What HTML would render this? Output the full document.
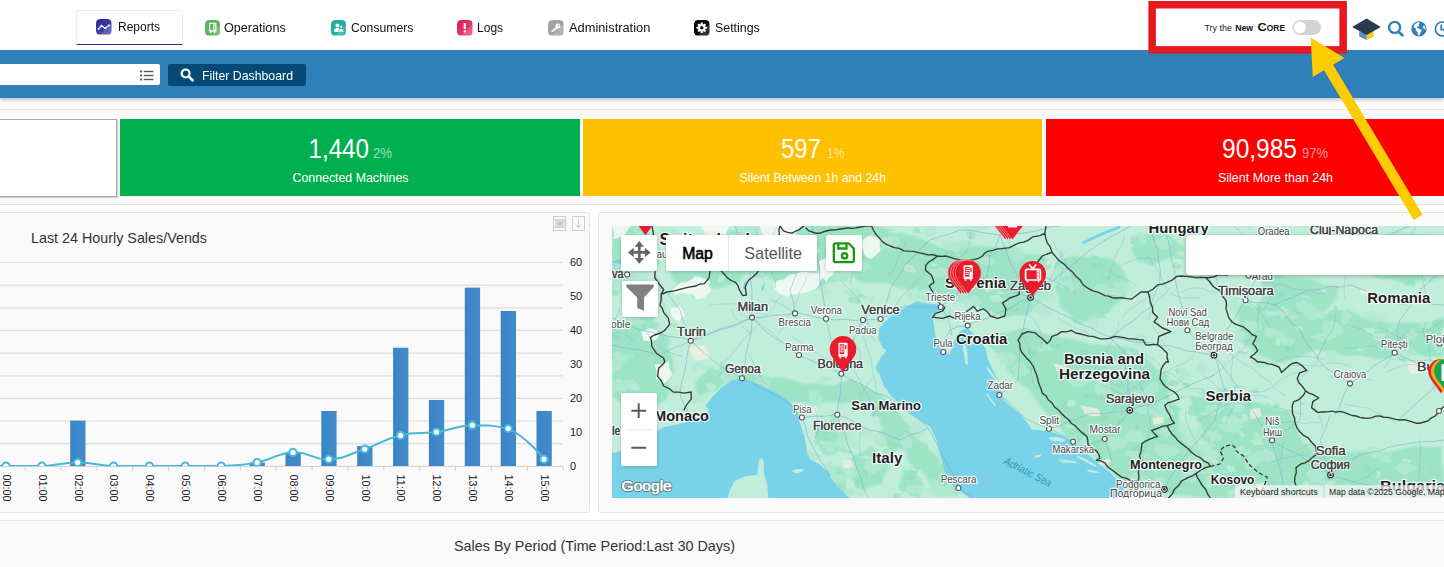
<!DOCTYPE html>
<html lang="en">
<head>
<meta charset="utf-8">
<title>Dashboard</title>
<style>
*{box-sizing:border-box;margin:0;padding:0}
html,body{width:1444px;height:567px;overflow:hidden;background:#fff;font-family:"Liberation Sans",sans-serif;color:#111}
.abs{position:absolute}
#nav{position:absolute;left:0;top:0;width:1444px;height:50px;background:#fff}
.tab{position:absolute;top:10px;height:35px}
.tab.active{left:76px;width:107px;border:1px solid #e6edf5;border-bottom:1px solid #2e2d8e;border-radius:2px 2px 0 0}
.ni{position:absolute;top:19px;width:15.500px;height:15.500px;border-radius:4px}
.nt{position:absolute;top:18px;font-size:13px;line-height:18px;white-space:nowrap;color:#111;transform-origin:0 50%}
#fbar{position:absolute;left:0;top:50px;width:1444px;height:48px;background:#2f80b8;box-shadow:0 2px 4px rgba(0,0,0,.25)}
#finput{position:absolute;left:-20px;top:14px;width:180px;height:21px;background:#fff;border-radius:2px}
#fbtn{position:absolute;left:168px;top:14px;width:138px;height:22px;background:#054a76;border-radius:2px;color:#fff}
#fbtn span{position:absolute;left:34px;top:2.500px;font-size:13px;line-height:18px;white-space:nowrap;transform:scaleX(.947);transform-origin:0 50%}
.panel{position:absolute;background:#fafafa;border:1px solid #e4e4e4;border-radius:3px}
.tile{position:absolute;top:119px;height:77px;color:#fff;text-align:center}
.tile .big{position:absolute;left:0;right:0;top:15px;font-size:26px;line-height:30px;white-space:nowrap}
.tile .big small{font-size:13px;opacity:.6;margin-left:4px}
.tile .lbl{position:absolute;left:0;right:0;top:50px;font-size:13px;line-height:16px;white-space:nowrap}
.mc{background:#fff;border-radius:2px;box-shadow:0 1px 4px -1px rgba(0,0,0,.3)}
</style>
</head>
<body>
<div id="nav">
  <div class="tab active"></div>
  <!-- nav icons + labels inserted below -->
  <svg class="ni" style="left:96px" viewBox="0 0 16 16"><defs><linearGradient id="gr" x1="0" y1="0" x2="1" y2="1"><stop offset="0" stop-color="#2c2a92"/><stop offset="1" stop-color="#4f4db0"/></linearGradient></defs><rect width="16" height="16" rx="4" fill="url(#gr)"/><path d="M16 4.500V12a4 4 0 0 1-4 4H4.500Z" fill="#fff" fill-opacity=".16"/><path d="M2.6 10.2 L5.6 7 L9.4 9.6 L13.4 6.6" fill="none" stroke="#fff" stroke-width="1.2" stroke-linecap="round" stroke-linejoin="round"/><circle cx="2.6" cy="10.2" r="1" fill="#fff"/><circle cx="5.6" cy="7" r="1" fill="#fff"/><circle cx="9.4" cy="9.6" r="1" fill="#fff"/><circle cx="13.4" cy="6.6" r="1" fill="#fff"/></svg>
  <span class="nt" style="left:117.8px;transform:scaleX(0.9225)">Reports</span>
  <svg class="ni" style="left:204.6px;top:20px" viewBox="0 0 16 16"><rect width="16" height="16" rx="4" fill="#5fb35f"/><path d="M16 4.500V12a4 4 0 0 1-4 4H4.500Z" fill="#fff" fill-opacity=".16"/><path d="M4.2 2.8h7.6v9.4h-1v1.2h-1.4v-1.2h-2.8v1.2H5.2v-1.2h-1z" fill="#fff"/><rect x="5.4" y="4" width="3.2" height="6.6" fill="#5fb35f"/><rect x="9.6" y="4.4" width="1.1" height="1.2" fill="#5fb35f"/><rect x="9.6" y="6.4" width="1.1" height="3" fill="#5fb35f"/></svg>
  <span class="nt" style="left:224px;top:18.800px;transform:scaleX(0.9703)">Operations</span>
  <svg class="ni" style="left:330.6px;top:20px" viewBox="0 0 16 16"><rect width="16" height="16" rx="4" fill="#27aea4"/><path d="M16 4.500V12a4 4 0 0 1-4 4H4.500Z" fill="#fff" fill-opacity=".16"/><circle cx="6.6" cy="5.6" r="2" fill="#fff"/><path d="M3.2 12.4c0-3 1.4-4.4 3.4-4.4s3.4 1.4 3.4 4.4z" fill="#fff"/><circle cx="10.6" cy="7.2" r="1.5" fill="#fff" stroke="#27aea4" stroke-width=".6"/><path d="M8 12.6c0-2.4 1-3.6 2.6-3.6s2.6 1.200 2.6 3.600z" fill="#fff" stroke="#27aea4" stroke-width=".6"/></svg>
  <span class="nt" style="left:350.5px;top:18.800px;transform:scaleX(0.9388)">Consumers</span>
  <svg class="ni" style="left:457px;top:20px" viewBox="0 0 16 16"><defs><linearGradient id="gl" x1="0" y1="0" x2="1" y2="1"><stop offset="0" stop-color="#dc1e58"/><stop offset="1" stop-color="#e8486e"/></linearGradient></defs><rect width="16" height="16" rx="4" fill="url(#gl)"/><path d="M16 4.500V12a4 4 0 0 1-4 4H4.500Z" fill="#fff" fill-opacity=".16"/><rect x="6.9" y="3" width="2.2" height="6.4" rx=".6" fill="#fff"/><rect x="6.900" y="10.600" width="2.200" height="2.200" rx=".6" fill="#fff"/></svg>
  <span class="nt" style="left:477.4px;top:18.800px;transform:scaleX(0.9255)">Logs</span>
  <svg class="ni" style="left:548.2px;top:20px" viewBox="0 0 16 16"><rect width="16" height="16" rx="4" fill="#a3a3a6"/><path d="M16 4.500V12a4 4 0 0 1-4 4H4.500Z" fill="#fff" fill-opacity=".16"/><circle cx="10.2" cy="6.200" r="2.600" fill="#fff"/><path d="M8.6 7.200 L3.600 11 L3.600 12.400 L5.600 12.400 L5.600 11.400 L6.800 11.400 L6.800 10.300 L8 10.300 L9.800 8.600z" fill="#fff"/><circle cx="11" cy="5.500" r=".8" fill="#a3a3a6"/></svg>
  <span class="nt" style="left:568.9px;top:18.800px;transform:scaleX(0.9869)">Administration</span>
  <svg class="ni" style="left:694.3px;top:20px" viewBox="0 0 16 16"><rect width="16" height="16" rx="4" fill="#0b0b0b"/><path d="M16 4.500V12a4 4 0 0 1-4 4H4.500Z" fill="#fff" fill-opacity=".16"/><g transform="translate(8 8)" fill="#fff"><circle r="3.800"/><g id="tt"><rect x="-1.100" y="-5.400" width="2.200" height="10.800" rx=".5"/></g><use href="#tt" transform="rotate(45)"/><use href="#tt" transform="rotate(90)"/><use href="#tt" transform="rotate(135)"/><circle r="1.700" fill="#0b0b0b"/></g></svg>
  <span class="nt" style="left:715px;top:18.800px;transform:scaleX(0.9515)">Settings</span>
  <!--NAVEND-->
</div>
<div id="fbar">
  <div id="finput"><svg width="14" height="11" viewBox="0 0 14 11" style="position:absolute;left:160px;top:6px"><g fill="#555"><rect x="0" y=".6" width="2.200" height="1.800"/><rect x="0" y="4.600" width="2.200" height="1.800"/><rect x="0" y="8.600" width="2.200" height="1.800"/><rect x="3.800" y=".8" width="9.600" height="1.400"/><rect x="3.800" y="4.800" width="9.600" height="1.400"/><rect x="3.800" y="8.800" width="9.600" height="1.400"/></g></svg></div>
  <div id="fbtn"><svg width="15" height="14" viewBox="0 0 15 14" style="position:absolute;left:11.500px;top:3.500px"><circle cx="5.600" cy="5.400" r="3.900" fill="none" stroke="#fff" stroke-width="2.200"/><path d="M8.600 8.400l4 3.900" stroke="#fff" stroke-width="2.600" stroke-linecap="round"/></svg><span>Filter Dashboard</span></div>
</div>
<div class="panel" style="left:-10px;top:109px;width:1470px;height:96px"></div>
<div class="abs" style="left:-10px;top:119px;width:127px;height:78px;background:#fff;border:1px solid #a8a8a8;box-shadow:1px 1px 1px rgba(0,0,0,.15)"></div>
<div class="tile" style="left:120px;width:460px;background:#00b050"><svg width="460" height="77" style="position:absolute;left:0;top:0" font-family="Liberation Sans, sans-serif" fill="#fff"><text x="188.5" y="38.700" font-size="27" textLength="60.5" lengthAdjust="spacingAndGlyphs">1,440</text><text x="253" y="38.900" font-size="14" fill-opacity=".6" textLength="19" lengthAdjust="spacingAndGlyphs">2%</text><text x="172.5" y="63" font-size="13" textLength="116.0" lengthAdjust="spacingAndGlyphs">Connected Machines</text></svg></div>
<div class="tile" style="left:583px;width:459px;background:#ffc000"><svg width="459" height="77" style="position:absolute;left:0;top:0" font-family="Liberation Sans, sans-serif" fill="#fff"><text x="198" y="38.700" font-size="27" textLength="40" lengthAdjust="spacingAndGlyphs">597</text><text x="244" y="38.900" font-size="14" fill-opacity=".6" textLength="17.5" lengthAdjust="spacingAndGlyphs">1%</text><text x="156.5" y="63" font-size="13" textLength="146.5" lengthAdjust="spacingAndGlyphs">Silent Between 1h and 24h</text></svg></div>
<div class="tile" style="left:1046px;width:458px;background:#ff0000"><svg width="458" height="77" style="position:absolute;left:0;top:0" font-family="Liberation Sans, sans-serif" fill="#fff"><text x="176" y="38.700" font-size="27" textLength="75" lengthAdjust="spacingAndGlyphs">90,985</text><text x="256" y="38.900" font-size="14" fill-opacity=".6" textLength="26" lengthAdjust="spacingAndGlyphs">97%</text><text x="172" y="63" font-size="13" textLength="115" lengthAdjust="spacingAndGlyphs">Silent More than 24h</text></svg></div>
<div class="panel" id="chartpanel" style="left:-10px;top:212px;width:600px;height:301px"></div>
<div class="panel" id="mappanel" style="left:598px;top:212px;width:860px;height:301px"></div>
<div class="panel" style="left:-10px;top:520px;width:1470px;height:60px"></div>
<div class="abs" style="left:454px;top:538px;font-size:14px;line-height:16px;color:#333;white-space:nowrap;font-size:14.400px;letter-spacing:0">Sales By Period (Time Period:Last 30 Days)</div>
<!--CHARTSTART-->
<svg id="chart" width="600" height="301" viewBox="-10 212 600 301" style="position:absolute;left:-10px;top:212px" font-family="Liberation Sans, sans-serif">
<defs><linearGradient id="bg" x1="0" y1="0" x2="1" y2="0"><stop offset="0" stop-color="#3b84c6"/><stop offset="1" stop-color="#428ccb"/></linearGradient><clipPath id="cc"><rect x="-10" y="250" width="600" height="216.200"/></clipPath></defs>
<text x="31" y="243" font-size="14.400" fill="#333" textLength="176" lengthAdjust="spacingAndGlyphs">Last 24 Hourly Sales/Vends</text>
<g fill="none" stroke="#cfcfcf" stroke-width="1"><rect x="553.500" y="216.500" width="12" height="14"/><path d="M553.500 219.500h12M553.500 227.500h12"/><rect x="555" y="219.500" width="11.500" height="8" rx="1.500" fill="#d9d9d9" stroke="none"/><circle cx="560" cy="223.500" r="1.800" fill="#c4c4c4" stroke="none"/><rect x="572.500" y="216.500" width="12" height="14"/><path d="M578.500 219.500v8M575.500 224.500l3 3l3-3" stroke="#b9cfe6"/></g>
<path d="M-10 262.5H562.500M-10 285.1H562.500M-10 307.8H562.500M-10 330.4H562.500M-10 353.1H562.500M-10 375.8H562.500M-10 398.4H562.500M-10 421.0H562.500M-10 443.7H562.500" stroke="#dcdcdc" stroke-width="1.200" fill="none"/>
<path d="M-10 466.300H562.500 M-10.7 466v4.500M25.1 466v4.500M61.0 466v4.500M96.9 466v4.500M132.7 466v4.500M168.6 466v4.500M204.5 466v4.500M240.4 466v4.500M276.2 466v4.500M312.1 466v4.500M348.0 466v4.500M383.8 466v4.500M419.7 466v4.500M455.6 466v4.500M491.4 466v4.500M527.3 466v4.500M563.2 466v4.500" stroke="#cfcfcf" stroke-width="1" fill="none"/>
<rect x="70.2" y="420.6" width="15.300" height="45.4" fill="url(#bg)"/>
<rect x="249.6" y="462.5" width="15.300" height="3.5" fill="url(#bg)"/>
<rect x="285.5" y="452.0" width="15.300" height="14.0" fill="url(#bg)"/>
<rect x="321.3" y="411.0" width="15.300" height="55.0" fill="url(#bg)"/>
<rect x="357.2" y="446.0" width="15.300" height="20.0" fill="url(#bg)"/>
<rect x="393.1" y="347.7" width="15.300" height="118.3" fill="url(#bg)"/>
<rect x="428.9" y="400.0" width="15.300" height="66.0" fill="url(#bg)"/>
<rect x="464.8" y="287.6" width="15.300" height="178.4" fill="url(#bg)"/>
<rect x="500.7" y="311.0" width="15.300" height="155.0" fill="url(#bg)"/>
<rect x="536.5" y="411.0" width="15.300" height="55.0" fill="url(#bg)"/>
<g clip-path="url(#cc)"><path d="M-29.9 466.0 C-29.9 466.0 -11.9 466.0 6.0 466.0 C23.9 466.0 24.0 466.0 41.9 466.0 C59.8 465.1 59.8 462.6 77.7 462.6 C95.7 462.6 95.6 465.1 113.6 466.0 C131.5 466.0 131.5 466.0 149.5 466.0 C167.4 466.0 167.4 466.0 185.3 466.0 C203.3 466.0 203.3 466.0 221.2 466.0 C239.2 465.1 239.5 465.9 257.1 462.6 C275.3 459.1 274.8 453.3 293.0 452.4 C310.7 451.6 311.1 460.0 328.8 459.2 C347.0 458.3 347.0 454.9 364.7 449.0 C382.9 443.0 382.1 439.8 400.6 435.4 C417.9 431.3 418.6 434.5 436.4 432.0 C454.5 429.4 454.3 426.1 472.3 425.2 C490.1 425.2 492.6 425.2 508.2 428.6 C528.5 438.2 544.0 459.2 544.0 459.2" fill="none" stroke="#47b8db" stroke-width="2"/>
<circle cx="6.0" cy="466.0" r="3.600" fill="#fff" stroke="#47b8db" stroke-width="2"/>
<circle cx="41.9" cy="466.0" r="3.600" fill="#fff" stroke="#47b8db" stroke-width="2"/>
<circle cx="77.7" cy="462.6" r="3.600" fill="#fff" stroke="#47b8db" stroke-width="2"/>
<circle cx="113.6" cy="466.0" r="3.600" fill="#fff" stroke="#47b8db" stroke-width="2"/>
<circle cx="149.5" cy="466.0" r="3.600" fill="#fff" stroke="#47b8db" stroke-width="2"/>
<circle cx="185.3" cy="466.0" r="3.600" fill="#fff" stroke="#47b8db" stroke-width="2"/>
<circle cx="221.2" cy="466.0" r="3.600" fill="#fff" stroke="#47b8db" stroke-width="2"/>
<circle cx="257.1" cy="462.6" r="3.600" fill="#fff" stroke="#47b8db" stroke-width="2"/>
<circle cx="293.0" cy="452.4" r="3.600" fill="#fff" stroke="#47b8db" stroke-width="2"/>
<circle cx="328.8" cy="459.2" r="3.600" fill="#fff" stroke="#47b8db" stroke-width="2"/>
<circle cx="364.7" cy="449.0" r="3.600" fill="#fff" stroke="#47b8db" stroke-width="2"/>
<circle cx="400.6" cy="435.4" r="3.600" fill="#fff" stroke="#47b8db" stroke-width="2"/>
<circle cx="436.4" cy="432.0" r="3.600" fill="#fff" stroke="#47b8db" stroke-width="2"/>
<circle cx="472.3" cy="425.2" r="3.600" fill="#fff" stroke="#47b8db" stroke-width="2"/>
<circle cx="508.2" cy="428.6" r="3.600" fill="#fff" stroke="#47b8db" stroke-width="2"/>
<circle cx="544.0" cy="459.2" r="3.600" fill="#fff" stroke="#47b8db" stroke-width="2"/>
</g>
<text x="570" y="265.8" font-size="11" fill="#222">60</text>
<text x="570" y="299.8" font-size="11" fill="#222">50</text>
<text x="570" y="333.8" font-size="11" fill="#222">40</text>
<text x="570" y="367.8" font-size="11" fill="#222">30</text>
<text x="570" y="401.8" font-size="11" fill="#222">20</text>
<text x="570" y="435.8" font-size="11" fill="#222">10</text>
<text x="570" y="469.8" font-size="11" fill="#222">0</text>
<text transform="translate(2.8 474.500) rotate(90)" font-size="11" fill="#222" textLength="27" lengthAdjust="spacingAndGlyphs">00:00</text>
<text transform="translate(38.7 474.500) rotate(90)" font-size="11" fill="#222" textLength="27" lengthAdjust="spacingAndGlyphs">01:00</text>
<text transform="translate(74.5 474.500) rotate(90)" font-size="11" fill="#222" textLength="27" lengthAdjust="spacingAndGlyphs">02:00</text>
<text transform="translate(110.4 474.500) rotate(90)" font-size="11" fill="#222" textLength="27" lengthAdjust="spacingAndGlyphs">03:00</text>
<text transform="translate(146.3 474.500) rotate(90)" font-size="11" fill="#222" textLength="27" lengthAdjust="spacingAndGlyphs">04:00</text>
<text transform="translate(182.2 474.500) rotate(90)" font-size="11" fill="#222" textLength="27" lengthAdjust="spacingAndGlyphs">05:00</text>
<text transform="translate(218.0 474.500) rotate(90)" font-size="11" fill="#222" textLength="27" lengthAdjust="spacingAndGlyphs">06:00</text>
<text transform="translate(253.9 474.500) rotate(90)" font-size="11" fill="#222" textLength="27" lengthAdjust="spacingAndGlyphs">07:00</text>
<text transform="translate(289.8 474.500) rotate(90)" font-size="11" fill="#222" textLength="27" lengthAdjust="spacingAndGlyphs">08:00</text>
<text transform="translate(325.6 474.500) rotate(90)" font-size="11" fill="#222" textLength="27" lengthAdjust="spacingAndGlyphs">09:00</text>
<text transform="translate(361.5 474.500) rotate(90)" font-size="11" fill="#222" textLength="27" lengthAdjust="spacingAndGlyphs">10:00</text>
<text transform="translate(397.4 474.500) rotate(90)" font-size="11" fill="#222" textLength="27" lengthAdjust="spacingAndGlyphs">11:00</text>
<text transform="translate(433.2 474.500) rotate(90)" font-size="11" fill="#222" textLength="27" lengthAdjust="spacingAndGlyphs">12:00</text>
<text transform="translate(469.1 474.500) rotate(90)" font-size="11" fill="#222" textLength="27" lengthAdjust="spacingAndGlyphs">13:00</text>
<text transform="translate(505.0 474.500) rotate(90)" font-size="11" fill="#222" textLength="27" lengthAdjust="spacingAndGlyphs">14:00</text>
<text transform="translate(540.8 474.500) rotate(90)" font-size="11" fill="#222" textLength="27" lengthAdjust="spacingAndGlyphs">15:00</text>
</svg>
<!--CHARTEND-->
<!--MAPSTART-->
<svg id="map" width="832" height="272" viewBox="612 226 832 272" style="position:absolute;left:612px;top:226px;background:#c1eeda" font-family="Liberation Sans, sans-serif">
<defs><filter id="bl" x="-5%" y="-5%" width="110%" height="110%"><feGaussianBlur stdDeviation="1.300"/></filter><filter id="bl2"><feGaussianBlur stdDeviation=".7"/></filter></defs>
<path d="M611.7 226.4 L626.5 225.8 L635.1 226.6 L644.4 226.1 L650.3 233.8 L649.5 236.2 L652.4 245.4 L653.7 249.7 L652.8 265.7 L647.6 272.9 L638.4 274.5 L635.2 280.6 L627.1 287.6 L620.3 291.0 L617.4 295.6 L612.1 296.1 L612.0 273.2 L611.7 247.5Z M748.0 229.4 L789.1 227.4 L827.7 224.1 L869.8 223.0 L894.2 231.1 L915.9 236.7 L937.8 245.7 L958.1 243.2 L991.3 246.9 L1018.6 248.3 L1023.9 253.8 L1040.3 255.1 L1047.0 259.4 L1041.6 272.0 L1024.2 278.0 L1012.6 286.3 L998.2 291.0 L977.3 296.7 L955.6 302.5 L943.6 298.1 L932.0 292.7 L921.1 287.8 L914.9 289.6 L898.7 288.2 L886.6 282.9 L879.5 282.7 L862.8 283.2 L852.0 276.2 L844.4 280.5 L829.5 282.6 L816.6 290.0 L806.1 288.2 L795.5 285.2 L788.0 283.5 L775.8 282.3 L763.5 273.5 L758.9 274.3 L744.7 273.8 L738.5 282.8 L725.1 286.7 L720.3 288.2 L707.5 288.6 L695.2 298.3 L688.9 292.7 L681.4 289.7 L676.0 282.2 L671.2 277.5 L668.6 266.4 L670.0 263.0 L681.9 253.3 L695.5 247.0 L700.8 241.7 L717.3 234.5 L728.8 230.9Z M612.5 321.4 L622.6 322.8 L638.4 317.4 L647.9 313.0 L651.8 316.9 L658.6 330.6 L671.0 338.7 L668.2 347.9 L673.3 360.1 L674.1 373.5 L668.6 380.0 L669.3 392.0 L665.5 400.3 L656.3 405.6 L643.6 407.8 L637.8 412.9 L626.8 408.5 L622.2 403.2 L612.9 398.0 L612.6 374.6 L609.1 349.9Z M703.4 374.6 L708.9 367.9 L716.3 365.9 L721.6 364.3 L726.8 365.7 L734.1 366.7 L744.8 366.2 L751.4 370.7 L755.8 376.2 L758.3 372.6 L770.0 378.6 L780.6 376.4 L796.8 381.1 L803.3 384.0 L812.1 383.8 L820.9 383.5 L834.8 385.5 L844.9 380.5 L852.5 378.7 L860.5 385.0 L876.3 392.4 L886.4 398.1 L890.1 401.0 L898.0 410.1 L903.0 419.4 L912.5 428.3 L917.0 439.0 L928.3 444.7 L928.7 450.1 L940.9 458.5 L946.5 470.5 L948.7 481.4 L951.7 486.2 L959.7 494.7 L954.9 496.2 L942.9 494.9 L938.9 497.6 L934.6 492.4 L931.4 487.9 L926.3 475.9 L918.1 468.1 L908.3 462.5 L906.5 452.8 L897.7 446.3 L895.0 439.8 L888.8 433.8 L881.3 427.3 L878.8 415.8 L873.0 413.5 L860.8 407.7 L857.5 406.8 L849.2 400.5 L843.6 403.4 L835.1 402.4 L824.0 401.9 L814.9 404.9 L804.7 402.8 L792.0 402.8 L789.3 402.0 L778.2 399.4 L768.7 398.9 L767.8 393.0 L757.8 391.6 L756.3 391.8 L750.6 384.7 L747.5 383.0 L742.1 381.7 L732.9 386.0 L725.5 381.6 L722.1 385.5 L718.7 389.0 L713.7 391.3 L708.1 392.1 L698.1 398.5 L693.6 403.3 L691.0 405.2 L695.7 394.4 L695.4 382.2Z M937.0 263.3 L963.4 263.0 L999.4 260.7 L1027.3 258.5 L1034.8 270.2 L1042.9 276.5 L1053.1 289.5 L1041.5 301.1 L1035.0 308.5 L1028.2 315.2 L1015.6 315.7 L1007.0 317.3 L990.7 312.2 L982.0 308.1 L979.1 307.5 L969.1 299.6 L959.4 297.9 L956.8 290.7 L948.1 286.1 L940.2 277.9 L939.8 268.9Z M979.7 336.3 L993.4 335.1 L1008.9 331.7 L1025.1 327.6 L1042.4 333.1 L1056.7 336.8 L1073.1 338.9 L1090.1 344.1 L1112.3 345.3 L1133.0 347.8 L1144.5 354.8 L1155.3 368.3 L1167.9 374.5 L1167.7 390.3 L1170.9 402.3 L1179.3 407.8 L1178.7 423.5 L1182.7 430.6 L1190.5 444.4 L1201.7 450.0 L1210.5 461.6 L1219.4 465.9 L1231.7 480.4 L1241.3 484.5 L1245.8 498.6 L1207.4 498.1 L1166.8 493.8 L1127.8 493.6 L1123.2 487.3 L1115.7 475.2 L1105.3 465.9 L1098.3 461.8 L1087.4 446.0 L1069.9 442.3 L1061.2 429.5 L1048.7 415.9 L1038.5 404.1 L1029.5 389.7 L1020.5 383.9 L1007.4 369.7 L1001.6 357.9 L988.2 344.7Z M1188.3 395.5 L1202.4 397.1 L1212.6 393.7 L1223.6 386.7 L1235.0 391.2 L1249.1 397.1 L1255.6 401.7 L1270.5 406.5 L1282.5 409.7 L1294.6 418.8 L1297.1 429.5 L1301.4 438.5 L1304.9 447.7 L1308.1 460.1 L1311.5 468.9 L1321.6 480.4 L1320.8 488.4 L1325.7 489.9 L1327.6 497.3 L1299.8 496.0 L1276.1 497.8 L1247.2 498.6 L1241.4 483.9 L1231.2 479.2 L1221.1 467.3 L1211.9 454.4 L1206.5 442.2 L1198.0 436.2 L1196.2 422.0 L1195.2 410.8Z M1260.7 278.8 L1274.8 274.0 L1288.7 277.7 L1300.3 277.9 L1312.6 279.6 L1324.2 284.5 L1338.7 286.3 L1337.2 296.5 L1330.5 305.4 L1325.5 310.9 L1316.0 314.8 L1301.9 317.8 L1290.5 314.8 L1280.5 311.2 L1270.3 312.3 L1262.3 309.4 L1262.9 294.0 L1262.6 290.5Z M1231.3 303.7 L1245.3 304.6 L1260.6 306.8 L1269.0 315.4 L1281.9 314.1 L1295.2 318.5 L1304.1 315.5 L1319.6 316.0 L1332.1 311.2 L1349.7 309.8 L1362.5 317.4 L1376.1 318.5 L1390.4 323.4 L1409.8 322.2 L1429.4 323.2 L1445.6 316.4 L1441.3 334.3 L1446.0 345.9 L1443.0 356.9 L1433.0 357.0 L1420.0 355.6 L1408.9 350.6 L1390.0 358.0 L1379.3 359.2 L1357.8 355.5 L1344.1 356.1 L1331.1 351.9 L1315.2 349.8 L1298.6 357.8 L1288.4 361.3 L1273.7 364.1 L1261.1 355.5 L1253.2 351.3 L1237.1 338.6 L1240.2 328.6 L1238.0 312.4Z M1302.9 443.3 L1324.8 446.0 L1342.9 452.2 L1359.8 451.0 L1390.4 451.7 L1415.8 446.0 L1441.2 447.5 L1441.1 459.3 L1444.4 479.4 L1445.3 495.4 L1404.8 493.9 L1359.8 497.9 L1317.8 495.4 L1316.5 480.9 L1307.7 459.8Z M1054.7 262.1 L1072.0 256.0 L1091.7 257.2 L1110.4 257.9 L1118.0 264.0 L1125.0 272.7 L1129.3 282.9 L1125.9 297.9 L1113.4 305.7 L1106.6 317.2 L1095.3 319.3 L1082.4 322.5 L1075.0 324.2 L1069.5 314.8 L1059.2 306.5 L1058.3 293.6 L1052.3 283.7 L1056.0 272.6Z M818.2 426.1 L823.8 419.7 L828.6 422.3 L832.1 415.1 L841.6 424.8 L842.1 426.9 L847.6 431.7 L849.4 434.9 L844.7 445.2 L845.2 451.8 L837.6 450.6 L834.9 454.5 L825.0 455.3 L822.2 452.1 L819.2 445.7 L814.2 443.2 L815.4 438.5 L816.3 433.4Z M853.2 456.0 L857.5 454.1 L866.8 449.8 L871.5 445.6 L879.7 456.1 L883.1 455.0 L888.0 461.5 L886.9 472.9 L883.6 476.0 L882.3 486.0 L879.2 484.4 L866.6 488.0 L862.6 492.8 L854.1 482.3 L850.5 478.1 L846.2 476.5 L849.3 466.4 L847.2 460.2Z M877.7 431.8 L883.7 428.7 L892.2 426.5 L893.4 427.7 L901.2 428.9 L902.0 438.2 L904.9 438.1 L898.5 447.1 L900.4 447.2 L895.2 452.1 L889.1 453.4 L887.4 446.2 L878.6 445.8 L880.4 442.7 L882.1 436.1Z M827.7 462.6 L833.8 465.0 L842.6 468.4 L845.9 473.4 L845.1 476.9 L845.9 485.2 L846.6 492.2 L847.4 494.9 L837.1 493.7 L836.5 495.2 L830.5 493.5 L829.5 489.9 L824.5 483.6 L826.7 477.7 L830.2 468.8Z M902.3 468.0 L905.3 469.5 L907.6 471.0 L913.7 466.7 L915.4 472.3 L921.4 480.8 L924.0 486.3 L919.9 488.6 L920.1 496.9 L920.3 499.1 L909.3 495.2 L908.8 492.2 L902.4 491.7 L897.9 488.1 L902.8 475.3Z M1131.4 236.1 L1141.2 235.9 L1152.2 232.6 L1164.4 232.9 L1169.2 235.4 L1178.2 242.1 L1185.5 249.5 L1176.3 253.6 L1169.3 257.8 L1156.9 263.5 L1152.9 265.9 L1141.8 261.8 L1138.6 261.2 L1131.6 251.0 L1130.1 242.6Z M1354.6 234.6 L1375.5 235.1 L1389.9 234.7 L1409.0 234.0 L1418.6 234.4 L1431.1 236.1 L1443.3 244.7 L1447.3 256.8 L1445.1 267.1 L1440.7 276.7 L1430.6 280.8 L1416.7 280.9 L1407.2 285.6 L1395.9 280.5 L1377.9 277.8 L1369.6 272.4 L1361.9 260.6 L1356.6 250.5Z" fill="#9be4c6" fill-opacity=".95" filter="url(#bl)"/>
<path d="M648.2 259.5 L651.4 258.1 L657.9 259.7 L661.1 262.6 L657.9 265.3 L651.4 264.9Z M630.9 236.2 L634.5 232.3 L641.5 232.7 L645.0 234.8 L641.5 236.7 L634.5 235.2Z M944.4 251.2 L947.3 251.1 L953.0 251.4 L955.9 254.4 L953.0 258.1 L947.3 257.9Z M847.2 299.8 L850.8 296.8 L857.9 297.6 L861.5 301.0 L857.9 304.2 L850.8 302.6Z M861.7 256.4 L865.5 256.1 L873.0 257.4 L876.8 260.2 L873.0 260.6 L865.5 259.4Z M949.8 247.6 L952.7 247.2 L958.4 248.0 L961.3 248.8 L958.4 250.4 L952.7 249.8Z M918.0 288.9 L920.4 287.4 L925.1 288.7 L927.5 291.4 L925.1 294.4 L920.4 292.9Z M965.5 231.4 L968.2 231.4 L973.6 231.8 L976.3 233.7 L973.6 239.2 L968.2 238.6Z M1005.4 287.5 L1007.7 284.7 L1012.3 284.8 L1014.6 284.9 L1012.3 289.4 L1007.7 287.9Z M851.2 294.4 L855.2 293.3 L863.1 293.8 L867.1 298.2 L863.1 298.6 L855.2 297.1Z M983.2 254.0 L985.7 250.6 L990.8 252.4 L993.3 251.4 L990.8 254.4 L985.7 253.3Z M1001.4 228.5 L1002.9 226.4 L1005.8 228.0 L1007.2 232.2 L1005.8 233.1 L1002.9 231.8Z M929.4 295.3 L931.8 294.6 L936.7 295.1 L939.1 296.9 L936.7 297.9 L931.8 297.5Z M752.3 276.6 L755.7 273.4 L762.6 274.9 L766.0 276.2 L762.6 278.2 L755.7 277.8Z M1018.1 273.4 L1020.1 272.9 L1024.0 274.6 L1025.9 275.6 L1024.0 279.1 L1020.1 278.1Z M682.9 272.2 L684.9 268.8 L688.8 269.0 L690.8 270.0 L688.8 273.0 L684.9 271.7Z M772.4 270.7 L774.1 263.3 L777.4 263.3 L779.1 266.8 L777.4 270.8 L774.1 269.5Z M1019.6 264.3 L1021.3 260.6 L1024.7 261.2 L1026.3 264.4 L1024.7 266.3 L1021.3 265.0Z M752.4 261.0 L755.7 255.5 L762.5 255.9 L765.9 258.9 L762.5 262.5 L755.7 262.1Z M853.6 229.1 L856.5 225.4 L862.2 226.9 L865.1 226.5 L862.2 231.9 L856.5 231.7Z M853.4 259.8 L855.8 256.4 L860.7 256.6 L863.1 260.3 L860.7 260.7 L855.8 259.7Z M967.5 241.8 L969.1 241.6 L972.2 242.1 L973.8 244.4 L972.2 246.1 L969.1 245.2Z M718.0 259.3 L721.3 258.6 L727.9 260.1 L731.2 259.0 L727.9 261.6 L721.3 261.0Z M828.5 233.8 L829.8 227.7 L832.3 229.0 L833.5 229.6 L832.3 235.8 L829.8 235.3Z M753.8 259.8 L757.7 258.2 L765.4 259.9 L769.2 261.1 L765.4 263.0 L757.7 262.9Z M912.4 232.7 L914.6 227.1 L918.9 228.2 L921.0 232.9 L918.9 233.6 L914.6 232.8Z M983.4 253.9 L986.8 252.5 L993.6 252.9 L997.0 254.7 L993.6 256.5 L986.8 256.3Z M747.1 263.6 L749.1 258.4 L753.2 259.6 L755.3 262.9 L753.2 263.6 L749.1 263.3Z M672.9 251.4 L675.1 248.5 L679.6 249.0 L681.9 251.0 L679.6 251.8 L675.1 250.9Z M816.9 244.2 L818.2 242.0 L820.7 242.1 L822.0 243.2 L820.7 245.7 L818.2 244.9Z M816.5 254.1 L820.1 252.9 L827.4 253.5 L831.0 253.8 L827.4 257.0 L820.1 256.9Z M915.8 298.1 L919.4 295.5 L926.8 295.6 L930.4 297.2 L926.8 299.6 L919.4 298.9Z M674.0 255.0 L676.2 253.7 L680.6 253.8 L682.8 255.3 L680.6 256.9 L676.2 255.9Z M791.0 246.8 L792.2 242.6 L794.6 243.6 L795.8 243.9 L794.6 247.3 L792.2 246.2Z M822.0 259.9 L823.9 253.5 L827.8 254.2 L829.8 260.1 L827.8 260.7 L823.9 260.7Z M858.1 246.3 L860.3 245.1 L864.6 245.5 L866.8 247.0 L864.6 253.1 L860.3 251.9Z M607.5 365.7 L609.8 363.6 L614.3 364.8 L616.6 365.9 L614.3 367.8 L609.8 366.7Z M642.1 334.2 L644.0 333.4 L647.7 334.2 L649.6 333.9 L647.7 337.9 L644.0 337.8Z M610.2 336.5 L612.8 333.8 L618.0 335.0 L620.6 335.6 L618.0 340.8 L612.8 339.6Z M667.2 326.2 L670.4 323.0 L676.6 323.7 L679.8 327.7 L676.6 328.1 L670.4 326.3Z M654.7 325.0 L655.9 321.8 L658.5 323.6 L659.8 322.4 L658.5 326.2 L655.9 325.6Z M892.1 495.7 L894.4 492.2 L898.9 493.6 L901.2 493.1 L898.9 498.7 L894.4 498.4Z M758.9 391.8 L761.5 390.5 L766.5 390.6 L769.1 390.9 L766.5 395.3 L761.5 393.8Z M803.2 473.6 L806.4 473.5 L812.9 473.8 L816.2 473.9 L812.9 477.3 L806.4 477.2Z M794.9 454.3 L796.7 454.1 L800.5 455.1 L802.4 455.8 L800.5 461.7 L796.7 461.0Z M863.0 471.4 L865.2 469.2 L869.6 469.7 L871.8 474.8 L869.6 475.4 L865.2 474.8Z M776.9 463.2 L778.6 459.5 L782.2 460.7 L783.9 460.7 L782.2 466.2 L778.6 466.0Z M782.2 420.0 L783.4 417.8 L785.8 418.4 L787.0 420.8 L785.8 423.3 L783.4 421.7Z M921.1 407.3 L924.4 403.9 L931.1 404.7 L934.4 407.2 L931.1 407.3 L924.4 407.0Z M823.4 440.6 L824.8 435.6 L827.8 436.4 L829.3 440.4 L827.8 442.8 L824.8 442.1Z M746.5 441.1 L749.3 440.9 L754.9 442.0 L757.7 443.4 L754.9 446.5 L749.3 445.4Z M936.5 384.6 L939.0 378.6 L944.0 379.2 L946.5 384.5 L944.0 386.7 L939.0 384.9Z M897.3 432.8 L901.4 430.0 L909.4 431.2 L913.4 430.8 L909.4 433.2 L901.4 431.8Z M831.4 480.3 L833.1 477.6 L836.5 477.7 L838.2 480.0 L836.5 481.9 L833.1 480.5Z M748.1 471.1 L751.7 467.4 L758.9 468.9 L762.5 472.8 L758.9 474.2 L751.7 474.0Z M853.9 482.3 L855.3 480.6 L858.0 481.7 L859.3 487.7 L858.0 488.7 L855.3 487.4Z M732.5 377.4 L735.6 376.7 L741.9 376.9 L745.1 381.7 L741.9 382.0 L735.6 381.0Z M800.0 473.6 L802.4 470.9 L807.0 472.5 L809.3 472.7 L807.0 476.2 L802.4 475.0Z M839.1 402.3 L842.7 398.5 L850.1 399.7 L853.7 400.5 L850.1 402.9 L842.7 401.3Z M885.8 443.5 L888.3 442.2 L893.1 442.6 L895.6 443.6 L893.1 445.4 L888.3 443.7Z M873.9 451.6 L875.8 450.9 L879.5 452.4 L881.3 452.2 L879.5 455.9 L875.8 455.2Z M905.8 475.4 L908.7 474.8 L914.4 476.3 L917.3 475.3 L914.4 480.5 L908.7 479.9Z M881.0 456.4 L883.1 449.2 L887.4 449.3 L889.5 454.0 L887.4 456.8 L883.1 456.0Z M942.6 484.0 L943.8 481.5 L946.3 482.4 L947.5 482.0 L946.3 486.2 L943.8 484.8Z M821.4 377.5 L824.2 377.1 L829.8 378.0 L832.6 378.2 L829.8 380.7 L824.2 379.4Z M726.5 494.5 L729.2 491.5 L734.5 493.0 L737.1 496.3 L734.5 496.5 L729.2 495.8Z M725.0 471.1 L728.3 470.0 L734.8 470.9 L738.1 470.2 L734.8 476.6 L728.3 476.4Z M772.7 431.8 L775.7 424.8 L781.8 425.7 L784.9 428.5 L781.8 432.2 L775.7 430.7Z M767.0 462.2 L768.9 460.2 L772.7 461.0 L774.6 461.9 L772.7 464.9 L768.9 464.2Z M700.7 475.9 L702.1 472.8 L704.7 473.5 L706.1 474.1 L704.7 478.5 L702.1 478.3Z M771.3 427.7 L773.1 424.4 L776.7 424.5 L778.5 427.2 L776.7 431.2 L773.1 429.5Z M845.8 491.9 L848.0 489.7 L852.4 490.2 L854.6 493.3 L852.4 495.7 L848.0 494.6Z M817.7 430.9 L821.0 430.6 L827.7 431.1 L831.0 431.5 L827.7 433.8 L821.0 432.4Z M918.3 414.0 L920.2 413.5 L924.2 415.2 L926.2 418.8 L924.2 419.9 L920.2 419.3Z M952.9 486.3 L954.2 483.2 L957.0 484.5 L958.3 485.8 L957.0 490.2 L954.2 489.4Z M715.3 404.2 L718.6 403.9 L725.1 405.3 L728.4 406.0 L725.1 407.1 L718.6 406.2Z M718.3 480.6 L720.8 479.3 L725.8 480.0 L728.3 481.4 L725.8 482.4 L720.8 480.7Z M869.4 415.6 L872.8 413.0 L879.6 413.3 L883.0 415.1 L879.6 416.5 L872.8 416.1Z M728.5 408.9 L731.4 406.8 L737.1 407.8 L740.0 411.5 L737.1 412.3 L731.4 411.7Z M815.5 493.6 L817.6 492.1 L821.8 492.6 L823.9 496.9 L821.8 498.6 L817.6 497.6Z M1006.3 280.2 L1010.2 278.2 L1018.0 279.7 L1021.9 283.0 L1018.0 284.8 L1010.2 284.4Z M933.2 290.4 L935.1 289.3 L938.9 289.5 L940.8 291.5 L938.9 293.7 L935.1 293.3Z M957.1 289.6 L959.3 283.3 L963.8 284.2 L966.0 287.1 L963.8 290.0 L959.3 289.4Z M1036.4 264.2 L1040.3 263.8 L1048.0 265.3 L1051.8 264.4 L1048.0 270.1 L1040.3 269.1Z M1006.8 307.5 L1010.2 307.1 L1017.0 308.0 L1020.4 308.1 L1017.0 312.6 L1010.2 311.7Z M995.8 415.3 L999.7 414.9 L1007.6 416.5 L1011.5 417.9 L1007.6 418.0 L999.7 418.0Z M1234.6 468.3 L1236.9 466.6 L1241.6 466.7 L1243.9 470.2 L1241.6 471.3 L1236.9 470.8Z M1114.0 384.4 L1117.1 383.1 L1123.3 384.7 L1126.4 384.0 L1123.3 388.4 L1117.1 388.1Z M1025.6 369.6 L1027.6 366.2 L1031.7 367.4 L1033.7 369.8 L1031.7 370.8 L1027.6 369.9Z M1076.5 351.2 L1079.9 348.9 L1086.8 350.3 L1090.2 351.5 L1086.8 355.8 L1079.9 355.3Z M1170.3 409.2 L1173.8 407.7 L1180.8 408.4 L1184.3 407.9 L1180.8 410.7 L1173.8 409.1Z M1025.6 354.1 L1028.7 348.7 L1034.9 350.3 L1038.0 352.0 L1034.9 356.1 L1028.7 355.5Z M1050.4 486.0 L1051.7 484.7 L1054.5 484.8 L1055.8 485.8 L1054.5 488.5 L1051.7 488.2Z M1114.8 420.2 L1117.6 416.6 L1123.2 418.2 L1126.0 417.1 L1123.2 423.4 L1117.6 423.0Z M1232.7 406.3 L1235.6 402.9 L1241.4 403.2 L1244.3 409.8 L1241.4 410.2 L1235.6 408.5Z M1180.3 395.4 L1181.6 394.8 L1184.2 396.0 L1185.5 395.6 L1184.2 398.5 L1181.6 398.5Z M1186.5 411.4 L1189.5 410.5 L1195.6 410.5 L1198.6 412.1 L1195.6 415.8 L1189.5 415.7Z M1139.7 390.3 L1142.2 388.4 L1147.3 389.0 L1149.8 393.8 L1147.3 394.5 L1142.2 393.5Z M1119.7 404.6 L1121.8 402.8 L1126.0 404.4 L1128.1 409.3 L1126.0 410.4 L1121.8 408.9Z M1049.8 346.2 L1052.9 343.6 L1059.2 344.4 L1062.3 347.9 L1059.2 348.2 L1052.9 347.4Z M977.3 413.4 L979.3 409.7 L983.1 410.5 L985.0 410.3 L983.1 415.6 L979.3 414.7Z M1043.0 480.8 L1045.6 478.0 L1050.8 479.7 L1053.4 480.5 L1050.8 483.1 L1045.6 482.3Z M1155.9 465.1 L1159.1 459.4 L1165.5 459.7 L1168.7 465.2 L1165.5 466.5 L1159.1 466.0Z M1182.0 385.3 L1184.0 382.6 L1187.9 382.7 L1189.8 387.4 L1187.9 388.2 L1184.0 387.3Z M1174.6 369.9 L1176.4 368.5 L1179.8 369.1 L1181.5 368.9 L1179.8 374.4 L1176.4 374.3Z M1114.4 487.8 L1117.4 485.7 L1123.4 486.2 L1126.4 488.1 L1123.4 490.8 L1117.4 489.1Z M1088.8 445.1 L1092.2 441.4 L1098.9 443.0 L1102.2 446.6 L1098.9 447.2 L1092.2 446.7Z M1166.7 384.3 L1170.0 379.9 L1176.7 380.7 L1180.1 382.6 L1176.7 386.2 L1170.0 386.0Z M1231.1 477.4 L1232.5 476.5 L1235.1 477.7 L1236.4 478.0 L1235.1 479.8 L1232.5 479.6Z M1128.0 455.2 L1130.3 450.9 L1135.0 452.0 L1137.3 451.2 L1135.0 457.2 L1130.3 456.0Z M1105.6 424.9 L1107.7 423.9 L1111.8 424.5 L1113.9 425.7 L1111.8 431.9 L1107.7 430.4Z M1082.1 397.6 L1085.8 394.2 L1093.2 395.5 L1096.9 396.1 L1093.2 398.5 L1085.8 397.8Z M1093.8 394.8 L1097.5 388.6 L1105.0 389.3 L1108.7 393.9 L1105.0 396.5 L1097.5 395.2Z M1166.6 488.0 L1169.6 485.2 L1175.7 486.4 L1178.7 486.7 L1175.7 491.6 L1169.6 490.3Z M1234.1 386.6 L1237.3 385.3 L1243.7 386.6 L1246.9 386.1 L1243.7 388.3 L1237.3 387.2Z M1082.9 492.4 L1084.6 491.9 L1088.0 492.9 L1089.8 498.2 L1088.0 499.5 L1084.6 498.1Z M1130.5 449.2 L1133.9 445.3 L1140.6 445.8 L1143.9 450.1 L1140.6 452.1 L1133.9 451.1Z M1235.6 353.6 L1239.0 350.2 L1245.8 351.9 L1249.2 351.5 L1245.8 354.8 L1239.0 353.8Z M1106.1 358.9 L1109.0 353.9 L1114.9 354.4 L1117.9 359.9 L1114.9 361.4 L1109.0 360.7Z M1136.0 407.2 L1138.6 402.6 L1144.0 404.3 L1146.7 405.5 L1144.0 410.6 L1138.6 409.3Z M1054.1 444.5 L1057.2 441.7 L1063.5 442.2 L1066.6 444.3 L1063.5 448.9 L1057.2 448.0Z M1076.9 441.2 L1078.4 437.3 L1081.6 438.9 L1083.2 438.4 L1081.6 441.8 L1078.4 441.5Z M1030.4 449.0 L1033.6 444.9 L1039.9 445.3 L1043.1 447.1 L1039.9 449.6 L1033.6 449.0Z M1062.2 407.0 L1064.2 404.9 L1068.2 405.5 L1070.2 406.4 L1068.2 410.7 L1064.2 410.2Z M979.3 379.9 L982.2 379.4 L987.9 380.9 L990.8 381.4 L987.9 383.7 L982.2 382.8Z M1210.0 456.9 L1212.9 452.6 L1218.8 453.4 L1221.8 455.2 L1218.8 458.9 L1212.9 458.2Z M1099.6 420.8 L1102.3 414.6 L1107.6 415.0 L1110.3 414.8 L1107.6 421.6 L1102.3 421.1Z M1095.8 399.8 L1098.5 392.4 L1104.0 394.0 L1106.7 398.6 L1104.0 399.8 L1098.5 399.7Z M1134.3 429.1 L1136.0 424.4 L1139.3 425.5 L1140.9 425.5 L1139.3 429.7 L1136.0 428.9Z M1225.5 416.2 L1229.1 413.8 L1236.1 414.9 L1239.7 417.4 L1236.1 417.6 L1229.1 417.6Z M1237.4 475.4 L1239.2 474.2 L1243.0 475.1 L1244.9 480.6 L1243.0 480.8 L1239.2 480.4Z M1276.3 456.0 L1278.5 452.8 L1283.0 452.9 L1285.3 456.0 L1283.0 459.4 L1278.5 458.7Z M1186.9 389.6 L1190.9 388.0 L1198.9 388.2 L1202.9 390.8 L1198.9 392.8 L1190.9 391.2Z M1187.8 408.9 L1190.3 404.4 L1195.3 405.7 L1197.8 410.0 L1195.3 411.7 L1190.3 410.5Z M1299.0 402.0 L1300.7 402.0 L1303.9 403.5 L1305.5 403.1 L1303.9 405.0 L1300.7 404.9Z M1297.6 452.0 L1301.4 451.6 L1309.0 452.1 L1312.8 452.2 L1309.0 454.7 L1301.4 454.5Z M1273.4 405.0 L1275.1 402.9 L1278.4 403.2 L1280.0 406.1 L1278.4 408.6 L1275.1 407.7Z M1247.9 391.0 L1250.8 389.7 L1256.7 389.8 L1259.6 393.2 L1256.7 393.6 L1250.8 392.6Z M1260.0 491.2 L1261.6 487.8 L1264.6 488.4 L1266.2 491.2 L1264.6 492.7 L1261.6 491.1Z M1259.9 485.9 L1263.9 481.1 L1272.0 482.8 L1276.0 482.2 L1272.0 488.4 L1263.9 487.7Z M1203.7 471.4 L1205.0 469.7 L1207.7 470.3 L1209.0 473.5 L1207.7 475.9 L1205.0 475.5Z M1302.9 496.3 L1304.8 493.0 L1308.6 493.3 L1310.5 497.0 L1308.6 497.7 L1304.8 497.4Z M1232.8 387.0 L1234.0 386.0 L1236.3 386.5 L1237.4 388.9 L1236.3 388.9 L1234.0 387.8Z M1282.1 415.1 L1284.6 409.5 L1289.7 411.1 L1292.3 412.3 L1289.7 416.1 L1284.6 415.5Z M1205.9 392.1 L1208.2 389.3 L1212.9 390.3 L1215.3 391.9 L1212.9 393.1 L1208.2 391.4Z M1196.8 392.6 L1199.3 387.7 L1204.2 388.6 L1206.7 393.8 L1204.2 394.8 L1199.3 394.2Z M1308.0 318.0 L1310.0 313.7 L1313.9 314.5 L1315.9 313.7 L1313.9 320.5 L1310.0 319.7Z M1275.5 293.9 L1278.1 291.1 L1283.3 292.7 L1285.9 294.6 L1283.3 298.2 L1278.1 297.5Z M1283.6 316.1 L1284.8 315.7 L1287.4 316.9 L1288.7 316.4 L1287.4 320.6 L1284.8 320.4Z M1332.5 311.2 L1334.0 305.5 L1337.1 305.6 L1338.6 310.6 L1337.1 313.0 L1334.0 312.7Z M1395.8 303.7 L1398.4 301.7 L1403.6 303.3 L1406.2 304.8 L1403.6 305.3 L1398.4 304.9Z M1294.2 310.5 L1297.5 308.2 L1304.1 308.9 L1307.4 312.9 L1304.1 315.0 L1297.5 313.7Z M1255.8 306.9 L1257.4 303.4 L1260.7 304.5 L1262.3 306.0 L1260.7 310.5 L1257.4 309.9Z M1431.6 326.2 L1434.6 324.3 L1440.7 324.9 L1443.7 327.4 L1440.7 329.1 L1434.6 328.5Z M1405.7 350.8 L1408.8 348.0 L1415.0 349.1 L1418.1 349.8 L1415.0 355.2 L1408.8 354.7Z M1397.7 357.4 L1399.7 356.9 L1403.8 357.1 L1405.8 360.0 L1403.8 361.7 L1399.7 360.2Z M1284.1 347.9 L1285.9 345.3 L1289.5 346.1 L1291.3 346.8 L1289.5 352.7 L1285.9 352.2Z M1290.1 349.0 L1291.4 344.0 L1293.9 344.6 L1295.1 345.2 L1293.9 350.2 L1291.4 350.0Z M1398.0 339.6 L1399.2 336.5 L1401.6 337.1 L1402.8 336.7 L1401.6 341.7 L1399.2 341.0Z M1430.6 324.3 L1434.4 320.0 L1442.0 320.2 L1445.8 326.0 L1442.0 327.4 L1434.4 327.2Z M1317.4 332.6 L1319.2 331.3 L1322.6 332.4 L1324.4 331.8 L1322.6 336.5 L1319.2 336.3Z M1428.3 468.3 L1429.8 467.2 L1432.8 468.3 L1434.4 470.5 L1432.8 471.9 L1429.8 470.5Z M1363.2 470.2 L1365.4 466.6 L1369.8 467.8 L1372.1 468.3 L1369.8 471.8 L1365.4 470.8Z M1305.4 463.7 L1307.6 463.5 L1311.9 464.2 L1314.1 466.4 L1311.9 466.5 L1307.6 465.1Z M1343.8 464.4 L1345.9 462.3 L1350.0 463.7 L1352.0 463.6 L1350.0 465.9 L1345.9 465.6Z M1380.2 496.5 L1384.0 492.8 L1391.7 493.1 L1395.6 495.8 L1391.7 496.6 L1384.0 496.4Z M1359.3 490.0 L1362.4 486.5 L1368.7 488.0 L1371.8 488.5 L1368.7 490.4 L1362.4 490.3Z M1336.8 468.6 L1340.6 463.7 L1348.4 463.8 L1352.3 465.1 L1348.4 469.6 L1340.6 468.4Z M1332.8 448.4 L1334.1 445.7 L1336.7 446.4 L1338.0 448.5 L1336.7 450.7 L1334.1 450.2Z M1101.0 276.9 L1103.6 275.6 L1108.7 275.7 L1111.3 277.0 L1108.7 280.4 L1103.6 279.9Z M1055.4 287.0 L1056.7 284.3 L1059.1 285.1 L1060.3 288.2 L1059.1 291.8 L1056.7 291.7Z M1105.1 301.9 L1107.5 298.6 L1112.5 299.5 L1115.0 303.2 L1112.5 304.2 L1107.5 302.7Z M1106.2 294.0 L1109.1 293.6 L1114.9 294.4 L1117.7 296.5 L1114.9 301.2 L1109.1 299.6Z M1091.2 266.1 L1094.5 262.1 L1101.1 262.6 L1104.5 266.9 L1101.1 267.5 L1094.5 267.5Z M1090.1 255.3 L1092.7 254.8 L1097.7 256.3 L1100.3 259.1 L1097.7 259.4 L1092.7 259.2Z M840.3 450.6 L843.9 449.6 L851.0 450.4 L854.5 452.2 L851.0 453.6 L843.9 452.6Z M887.2 460.1 L888.4 459.4 L890.9 460.7 L892.1 462.3 L890.9 462.8 L888.4 462.7Z M850.7 479.3 L854.4 478.9 L861.9 480.6 L865.7 483.0 L861.9 483.2 L854.4 481.9Z M893.4 445.8 L896.0 443.6 L901.3 444.7 L903.9 444.9 L901.3 447.8 L896.0 446.7Z M907.6 472.7 L910.9 466.6 L917.4 466.7 L920.7 467.1 L917.4 473.8 L910.9 472.6Z M1172.0 267.1 L1174.5 262.8 L1179.3 264.0 L1181.8 265.2 L1179.3 269.2 L1174.5 268.1Z M1170.3 255.2 L1173.8 254.1 L1180.7 254.9 L1184.2 257.7 L1180.7 259.4 L1173.8 258.5Z M1405.0 284.8 L1407.8 279.2 L1413.6 280.9 L1416.4 282.6 L1413.6 286.5 L1407.8 285.0Z M1351.9 247.8 L1354.1 244.6 L1358.4 245.1 L1360.6 250.2 L1358.4 252.7 L1354.1 252.5Z M1384.6 239.7 L1387.4 235.7 L1393.2 236.3 L1396.1 240.6 L1393.2 240.7 L1387.4 240.4Z M1371.3 230.9 L1373.3 228.7 L1377.4 229.6 L1379.4 232.7 L1377.4 236.3 L1373.3 235.8Z" fill="#93ddbd" fill-opacity=".6" filter="url(#bl2)"/>
<path d="M616.2 267.8 L619.4 263.6 L625.7 264.2 L628.9 265.7 L625.7 268.2 L619.4 267.9Z M612.4 288.9 L615.1 285.6 L620.6 286.1 L623.3 290.9 L620.6 291.4 L615.1 289.7Z M633.2 233.1 L634.4 229.4 L636.9 231.0 L638.2 231.9 L636.9 233.2 L634.4 232.6Z M880.9 239.3 L883.5 236.9 L888.8 237.5 L891.5 239.6 L888.8 241.1 L883.5 241.1Z M718.9 297.4 L721.8 295.2 L727.5 296.3 L730.4 298.9 L727.5 300.5 L721.8 299.2Z M930.2 264.9 L932.0 263.2 L935.7 263.6 L937.6 263.5 L935.7 267.6 L932.0 266.1Z M855.6 291.8 L858.8 286.5 L865.0 286.8 L868.1 290.9 L865.0 292.1 L858.8 291.8Z M886.4 231.7 L890.0 230.7 L897.0 231.0 L900.5 233.3 L897.0 234.5 L890.0 233.1Z M688.5 258.6 L690.7 254.8 L695.1 254.8 L697.3 256.7 L695.1 258.8 L690.7 257.4Z M692.9 275.7 L695.1 275.6 L699.5 275.9 L701.7 276.8 L699.5 279.9 L695.1 279.3Z M937.2 247.7 L939.4 244.3 L943.8 244.9 L946.0 247.1 L943.8 248.0 L939.4 246.7Z M717.5 280.0 L719.4 275.6 L723.2 275.9 L725.1 277.0 L723.2 282.2 L719.4 281.8Z M902.4 266.8 L905.9 264.4 L912.8 265.6 L916.3 271.7 L912.8 272.4 L905.9 272.0Z M810.2 249.1 L812.8 248.4 L818.0 249.1 L820.6 250.5 L818.0 252.7 L812.8 252.5Z M756.5 231.2 L758.7 230.4 L762.9 231.4 L765.1 234.0 L762.9 235.5 L758.7 234.5Z M840.3 272.4 L844.2 269.7 L852.0 271.3 L855.9 273.4 L852.0 274.5 L844.2 273.4Z M660.4 409.1 L662.6 405.0 L666.8 405.5 L668.9 408.3 L666.8 409.7 L662.6 408.5Z M669.9 393.1 L671.5 390.1 L674.7 391.1 L676.3 392.4 L674.7 396.2 L671.5 395.7Z M615.5 382.9 L617.0 378.8 L620.0 379.7 L621.4 379.7 L620.0 384.1 L617.0 382.6Z M626.0 387.3 L629.6 383.2 L636.7 383.9 L640.3 388.3 L636.7 390.4 L629.6 389.3Z M658.3 323.0 L660.5 321.5 L665.0 321.8 L667.3 321.6 L665.0 327.9 L660.5 326.9Z M832.0 429.0 L834.3 425.4 L838.7 426.9 L841.0 426.7 L838.7 429.9 L834.3 429.3Z M936.9 395.6 L939.5 394.4 L944.6 394.5 L947.2 396.4 L944.6 397.9 L939.5 397.7Z M706.1 384.4 L708.6 382.8 L713.7 384.3 L716.3 386.7 L713.7 390.8 L708.6 390.1Z M791.4 370.6 L794.2 366.7 L799.7 367.2 L802.4 372.6 L799.7 373.0 L794.2 371.5Z M888.2 403.3 L890.8 402.7 L896.1 404.3 L898.7 402.7 L896.1 405.6 L890.8 404.7Z M899.3 464.3 L901.6 458.5 L906.2 459.8 L908.5 465.4 L906.2 465.5 L901.6 465.4Z M876.8 389.0 L878.7 383.0 L882.6 383.5 L884.5 384.1 L882.6 389.4 L878.7 388.7Z M725.5 446.5 L727.8 445.2 L732.2 446.3 L734.5 450.7 L732.2 451.4 L727.8 449.9Z M916.2 377.8 L920.2 376.5 L928.2 377.9 L932.2 380.0 L928.2 381.9 L920.2 380.3Z M712.8 369.4 L715.0 363.3 L719.3 363.5 L721.4 364.6 L719.3 370.7 L715.0 370.0Z M868.1 419.7 L869.3 418.3 L871.7 419.3 L872.9 419.5 L871.7 422.9 L869.3 421.9Z M736.7 496.4 L739.8 494.0 L746.1 494.5 L749.3 496.7 L746.1 500.7 L739.8 500.4Z M809.3 407.8 L812.4 402.0 L818.6 403.6 L821.7 407.9 L818.6 408.0 L812.4 407.3Z M857.4 457.2 L861.5 455.7 L869.5 456.4 L873.6 457.8 L869.5 459.0 L861.5 458.6Z M743.4 413.5 L745.0 409.8 L748.1 410.0 L749.7 410.7 L748.1 414.8 L745.0 413.6Z M883.4 398.3 L886.9 393.1 L893.8 393.3 L897.3 396.2 L893.8 399.8 L886.9 399.8Z M798.2 369.7 L800.0 366.8 L803.5 367.5 L805.3 371.2 L803.5 372.0 L800.0 371.8Z M943.7 449.2 L947.3 447.9 L954.5 448.0 L958.1 448.7 L954.5 451.0 L947.3 450.8Z M905.2 470.0 L908.2 467.6 L914.2 467.7 L917.2 469.6 L914.2 470.8 L908.2 469.8Z M854.8 365.6 L858.6 361.6 L866.3 361.6 L870.1 366.6 L866.3 368.4 L858.6 367.7Z M714.2 406.6 L718.1 401.3 L725.9 401.6 L729.8 403.7 L725.9 407.0 L718.1 406.1Z M702.9 473.7 L705.1 470.9 L709.6 472.0 L711.8 474.6 L709.6 477.5 L705.1 475.8Z M983.5 285.9 L985.4 285.2 L989.0 285.8 L990.8 291.0 L989.0 292.0 L985.4 292.0Z M995.9 294.0 L998.0 290.5 L1002.2 291.8 L1004.3 293.5 L1002.2 294.2 L998.0 294.0Z M954.4 269.8 L957.1 269.0 L962.5 270.4 L965.2 272.5 L962.5 275.1 L957.1 273.5Z M959.3 291.2 L963.0 288.1 L970.3 289.5 L974.0 290.3 L970.3 291.8 L963.0 290.8Z M988.7 296.9 L992.5 295.1 L1000.1 295.2 L1003.9 301.6 L1000.1 302.0 L992.5 301.4Z M1041.3 278.9 L1044.9 276.8 L1052.3 276.9 L1055.9 276.9 L1052.3 280.0 L1044.9 279.0Z M1106.6 362.6 L1109.8 360.2 L1116.2 360.3 L1119.4 362.6 L1116.2 365.2 L1109.8 364.3Z M1125.5 353.2 L1127.5 349.9 L1131.6 351.6 L1133.6 354.4 L1131.6 354.6 L1127.5 352.9Z M1205.9 486.4 L1207.1 483.2 L1209.5 484.4 L1210.7 486.5 L1209.5 488.6 L1207.1 487.6Z M1195.4 446.3 L1198.0 441.8 L1203.3 443.2 L1206.0 441.8 L1203.3 447.7 L1198.0 447.6Z M1103.5 461.3 L1105.6 458.6 L1109.8 459.0 L1111.9 460.7 L1109.8 462.7 L1105.6 462.3Z M1179.5 373.0 L1181.3 368.0 L1184.9 368.7 L1186.7 369.8 L1184.9 373.1 L1181.3 371.5Z M1027.4 475.2 L1031.3 472.6 L1039.2 474.2 L1043.1 473.7 L1039.2 480.3 L1031.3 479.1Z M1055.1 454.9 L1058.9 454.1 L1066.6 454.6 L1070.4 457.2 L1066.6 459.6 L1058.9 459.0Z M1111.6 495.1 L1113.6 492.3 L1117.6 492.7 L1119.6 494.5 L1117.6 496.1 L1113.6 495.8Z M1146.8 489.7 L1148.8 489.2 L1152.7 490.6 L1154.6 490.4 L1152.7 494.4 L1148.8 493.0Z M1199.4 412.6 L1201.5 411.8 L1205.8 413.3 L1208.0 414.9 L1205.8 415.7 L1201.5 414.0Z M1219.2 334.9 L1221.8 331.2 L1227.1 332.3 L1229.7 335.4 L1227.1 335.9 L1221.8 334.2Z M994.9 444.2 L996.4 437.2 L999.3 437.7 L1000.8 438.7 L999.3 445.2 L996.4 444.0Z M1238.8 430.9 L1240.3 430.5 L1243.3 432.0 L1244.8 435.6 L1243.3 437.1 L1240.3 435.8Z M1125.6 486.7 L1128.6 484.6 L1134.6 485.2 L1137.6 484.8 L1134.6 490.1 L1128.6 489.8Z M1034.6 439.0 L1038.0 435.7 L1044.8 436.2 L1048.1 437.5 L1044.8 442.2 L1038.0 441.8Z M1158.4 490.3 L1160.5 483.3 L1164.7 483.8 L1166.8 490.6 L1164.7 491.0 L1160.5 489.9Z M1241.7 414.9 L1243.4 414.5 L1246.8 414.7 L1248.5 418.2 L1246.8 421.3 L1243.4 420.8Z M992.9 408.5 L994.1 407.2 L996.5 408.0 L997.7 407.6 L996.5 410.5 L994.1 408.8Z M1094.9 381.5 L1097.9 379.9 L1103.8 381.3 L1106.7 382.2 L1103.8 384.9 L1097.9 384.1Z M996.9 462.3 L1000.2 460.3 L1006.7 461.5 L1010.0 460.4 L1006.7 464.5 L1000.2 463.1Z M1190.2 422.7 L1193.1 420.9 L1198.9 421.3 L1201.9 425.9 L1198.9 428.9 L1193.1 428.7Z M1066.4 406.2 L1068.8 399.7 L1073.6 400.8 L1076.0 400.9 L1073.6 406.8 L1068.8 406.2Z M1030.7 476.6 L1034.4 475.2 L1041.7 475.6 L1045.3 478.1 L1041.7 479.2 L1034.4 479.1Z M991.9 467.9 L994.6 467.3 L1000.1 467.4 L1002.8 469.4 L1000.1 473.2 L994.6 471.5Z M1206.4 340.8 L1207.8 338.7 L1210.7 339.0 L1212.2 339.5 L1210.7 341.7 L1207.8 340.5Z M1187.9 434.8 L1189.8 431.4 L1193.8 432.9 L1195.8 434.1 L1193.8 435.3 L1189.8 434.1Z M1232.8 422.1 L1235.5 418.3 L1240.7 419.2 L1243.4 422.7 L1240.7 422.8 L1235.5 422.6Z M979.7 352.1 L982.0 351.4 L986.6 352.4 L988.8 357.2 L986.6 357.6 L982.0 356.8Z M1064.1 425.4 L1067.0 424.8 L1073.0 425.9 L1075.9 425.4 L1073.0 427.7 L1067.0 427.6Z M1228.8 492.6 L1231.6 490.5 L1237.1 490.9 L1239.9 493.3 L1237.1 493.9 L1231.6 492.6Z M1189.2 390.0 L1192.6 389.3 L1199.5 389.3 L1203.0 389.9 L1199.5 392.9 L1192.6 392.1Z M1312.4 460.2 L1313.7 459.2 L1316.4 459.7 L1317.7 462.5 L1316.4 463.1 L1313.7 461.9Z M1250.6 440.5 L1254.0 439.1 L1260.7 439.5 L1264.1 443.3 L1260.7 444.9 L1254.0 444.8Z M1220.9 420.8 L1224.2 415.9 L1230.8 417.5 L1234.1 417.2 L1230.8 422.9 L1224.2 422.2Z M1286.1 402.1 L1290.1 396.3 L1298.0 396.9 L1302.0 400.4 L1298.0 403.0 L1290.1 401.4Z M1226.4 466.3 L1228.9 465.3 L1233.9 466.7 L1236.4 471.5 L1233.9 471.7 L1228.9 471.4Z M1273.3 389.1 L1275.1 388.6 L1278.7 388.7 L1280.5 390.2 L1278.7 391.6 L1275.1 391.4Z M1320.8 291.3 L1322.3 286.7 L1325.3 288.2 L1326.8 290.2 L1325.3 293.0 L1322.3 292.0Z M1300.6 295.8 L1303.2 295.4 L1308.5 296.4 L1311.1 297.6 L1308.5 298.6 L1303.2 296.9Z M1355.7 348.7 L1358.1 347.1 L1363.0 348.6 L1365.4 348.0 L1363.0 351.5 L1358.1 351.5Z M1353.5 302.5 L1357.3 301.8 L1365.0 303.2 L1368.9 302.3 L1365.0 306.4 L1357.3 306.4Z M1326.0 356.2 L1329.4 356.0 L1336.3 357.0 L1339.7 357.9 L1336.3 360.0 L1329.4 359.4Z M1275.3 345.1 L1276.6 337.8 L1279.3 338.9 L1280.7 340.3 L1279.3 345.5 L1276.6 344.3Z M1435.6 339.9 L1437.1 336.0 L1440.2 337.1 L1441.7 341.0 L1440.2 342.5 L1437.1 341.5Z M1250.0 308.6 L1252.3 304.9 L1257.0 305.9 L1259.3 308.2 L1257.0 308.6 L1252.3 307.0Z M1362.9 328.7 L1366.3 327.7 L1373.1 328.6 L1376.5 330.3 L1373.1 334.1 L1366.3 333.2Z M1371.9 334.1 L1375.3 333.4 L1382.2 333.7 L1385.6 333.8 L1382.2 340.6 L1375.3 340.3Z M1294.2 327.4 L1296.7 325.8 L1301.7 327.2 L1304.2 327.7 L1301.7 331.6 L1296.7 330.2Z M1231.7 332.4 L1233.1 331.9 L1235.9 332.3 L1237.3 337.6 L1235.9 339.3 L1233.1 338.3Z M1376.0 477.8 L1377.2 471.1 L1379.5 471.8 L1380.6 472.4 L1379.5 479.1 L1377.2 477.7Z M1321.4 481.9 L1324.9 480.3 L1332.0 480.5 L1335.5 481.6 L1332.0 488.0 L1324.9 487.6Z M1301.9 486.6 L1303.7 481.3 L1307.4 481.5 L1309.2 482.6 L1307.4 487.9 L1303.7 487.4Z M1402.1 460.5 L1404.5 458.3 L1409.4 459.7 L1411.9 459.5 L1409.4 463.0 L1404.5 461.6Z M1109.3 294.5 L1111.9 291.0 L1117.0 291.8 L1119.6 294.6 L1117.0 295.6 L1111.9 294.2Z M1103.8 313.8 L1107.2 313.4 L1114.0 314.6 L1117.4 316.6 L1114.0 317.7 L1107.2 317.6Z M819.4 442.5 L820.9 440.6 L823.9 441.4 L825.3 442.6 L823.9 445.2 L820.9 444.2Z M845.6 475.5 L847.4 468.0 L851.0 469.6 L852.8 474.7 L851.0 475.9 L847.4 474.4Z M1127.0 244.4 L1128.9 243.5 L1132.6 244.2 L1134.5 246.3 L1132.6 247.5 L1128.9 246.0Z M1351.3 277.5 L1354.2 273.4 L1360.0 274.0 L1362.9 275.7 L1360.0 280.1 L1354.2 280.0Z M1352.5 267.8 L1356.3 263.9 L1363.8 265.3 L1367.6 270.0 L1363.8 270.3 L1356.3 268.8Z M1390.2 234.8 L1393.1 229.4 L1399.0 230.5 L1401.9 231.7 L1399.0 235.6 L1393.1 235.6Z" fill="#c1eeda" fill-opacity=".75" filter="url(#bl2)"/>
<path d="M627.2 278.8 L629.8 275.3 L629.8 270.5 L634.2 269.9 L639.2 267.2 L641.8 270.1 L648.1 273.8 L647.4 276.8 L649.3 279.2 L646.3 279.6 L646.0 283.0 L638.5 285.7 L635.6 283.3 L632.4 280.8Z M628.0 239.0 L629.4 235.8 L632.1 234.8 L635.3 234.0 L640.7 231.6 L646.7 234.3 L649.2 236.3 L652.6 237.4 L655.7 239.9 L651.7 244.9 L646.0 246.8 L641.5 246.4 L634.5 244.9 L631.2 244.9Z M608.8 276.9 L610.8 275.9 L613.3 270.0 L617.8 269.8 L619.9 271.2 L626.2 271.7 L630.4 274.0 L630.4 275.1 L632.1 276.3 L628.8 282.0 L628.6 283.8 L619.6 287.2 L615.5 285.8 L610.7 282.5Z M976.4 258.9 L977.5 260.1 L978.6 258.0 L979.6 255.7 L982.6 256.1 L986.0 256.3 L991.3 259.3 L992.6 258.1 L992.4 259.3 L990.2 260.2 L987.8 262.0 L983.8 265.5 L982.0 264.8 L977.8 261.7Z M692.7 247.0 L694.8 242.7 L696.6 239.3 L699.6 240.5 L704.2 238.5 L708.9 241.2 L711.5 240.5 L713.3 243.9 L715.6 247.3 L713.2 250.6 L710.3 252.2 L704.6 254.5 L700.1 254.0 L696.7 251.8Z M920.0 299.0 L921.3 297.4 L923.6 293.0 L928.0 293.8 L931.9 292.6 L936.1 295.3 L940.4 296.6 L940.5 295.7 L944.1 298.5 L940.1 301.7 L938.3 302.5 L931.9 304.1 L924.7 304.7 L921.7 301.5Z M735.6 226.9 L735.4 225.7 L736.9 222.9 L741.3 223.1 L741.5 223.2 L744.7 224.4 L748.6 226.0 L752.2 228.5 L751.8 230.1 L750.3 230.6 L746.4 233.4 L743.8 234.9 L741.2 234.0 L736.4 232.5Z M659.8 233.8 L660.9 230.7 L665.1 228.3 L668.3 230.0 L670.3 227.6 L674.9 229.4 L676.2 229.9 L679.8 232.5 L679.0 234.5 L676.0 237.4 L674.7 238.7 L671.4 241.6 L664.4 241.6 L662.4 239.3Z M959.5 244.9 L961.2 243.5 L960.7 241.8 L963.8 239.9 L966.4 237.9 L969.5 240.2 L971.4 242.9 L973.4 241.3 L973.4 243.5 L973.9 247.1 L970.8 246.2 L968.3 248.4 L964.3 250.0 L962.3 246.8Z M1006.5 256.0 L1010.0 251.5 L1010.0 249.5 L1015.0 247.1 L1016.2 248.3 L1019.1 248.8 L1020.7 251.0 L1024.4 250.9 L1023.7 255.3 L1023.6 258.2 L1018.8 262.0 L1018.4 263.9 L1013.7 261.5 L1011.7 258.0Z M904.6 297.0 L904.9 296.0 L906.3 292.5 L911.1 292.1 L913.6 293.5 L919.7 295.4 L921.2 294.8 L923.6 297.3 L926.1 300.3 L922.9 298.2 L921.3 299.5 L916.2 300.9 L912.2 301.3 L907.9 298.4Z M869.0 243.9 L870.8 243.1 L870.5 240.7 L874.2 238.6 L879.7 238.9 L884.5 240.7 L886.3 242.8 L887.1 243.7 L889.1 242.9 L889.4 247.7 L884.1 248.7 L881.6 251.0 L876.0 249.6 L872.0 247.4Z M749.4 252.0 L750.3 250.0 L752.3 247.0 L755.9 247.1 L758.6 244.4 L760.8 245.9 L764.2 249.4 L767.4 249.8 L767.4 249.6 L767.9 252.9 L763.8 255.1 L758.1 255.0 L753.8 256.7 L751.5 255.4Z M718.4 246.5 L720.8 244.8 L723.2 242.1 L724.9 242.7 L726.1 241.4 L729.2 242.4 L733.2 241.5 L732.6 241.8 L734.0 242.7 L732.7 248.0 L730.7 247.9 L727.7 248.4 L725.3 250.4 L721.1 246.5Z M915.8 296.1 L915.0 294.3 L920.0 291.9 L921.2 289.3 L923.7 291.0 L928.7 293.0 L930.6 292.5 L932.3 293.7 L934.1 293.9 L932.7 297.2 L928.9 299.5 L927.4 300.0 L921.1 300.9 L918.1 297.4Z M777.8 234.2 L781.0 231.0 L782.2 227.9 L786.6 228.2 L788.3 225.9 L793.3 226.9 L794.0 229.0 L795.5 233.4 L799.6 234.7 L794.9 236.6 L792.9 239.2 L789.2 241.2 L784.3 239.7 L783.0 236.1Z M737.6 248.8 L739.3 246.7 L740.4 243.9 L744.0 244.2 L747.2 244.0 L749.0 243.4 L752.2 244.8 L751.2 244.5 L752.7 246.0 L752.4 248.0 L748.2 251.6 L746.2 249.9 L740.8 251.2 L739.4 251.2Z M1023.8 273.0 L1025.5 268.1 L1026.0 266.1 L1029.0 266.6 L1032.1 267.4 L1031.6 266.9 L1036.7 268.6 L1036.2 269.8 L1038.6 272.8 L1036.0 275.5 L1034.4 275.1 L1032.0 276.2 L1026.2 278.1 L1024.0 274.4Z M844.1 292.9 L845.1 289.7 L846.5 290.0 L851.3 289.2 L853.3 287.3 L854.5 289.7 L858.4 287.9 L858.7 288.9 L862.0 292.4 L858.1 294.4 L856.5 296.4 L854.6 296.9 L850.6 296.7 L845.4 294.6Z M884.3 240.5 L885.4 239.4 L888.3 237.1 L890.6 236.2 L892.8 236.6 L895.0 236.7 L898.9 237.1 L898.9 236.7 L899.6 238.7 L899.2 242.5 L897.6 243.3 L894.6 243.7 L890.1 243.4 L887.8 242.9Z M1022.8 294.6 L1023.7 291.7 L1026.5 286.6 L1028.2 285.7 L1032.4 285.8 L1038.5 288.5 L1041.1 288.6 L1041.1 292.0 L1044.4 294.3 L1041.1 297.9 L1037.9 298.8 L1033.2 300.1 L1030.6 298.8 L1026.4 297.5Z M745.0 230.8 L748.3 226.9 L747.8 224.8 L753.4 222.4 L753.4 221.1 L758.5 224.8 L760.5 225.5 L763.5 229.5 L765.5 232.3 L760.8 234.2 L761.1 238.5 L754.9 238.6 L751.6 239.4 L747.3 235.0Z M983.7 260.3 L985.2 260.7 L986.4 259.1 L988.1 259.3 L990.9 258.1 L992.9 257.1 L991.9 257.8 L993.3 259.3 L995.2 260.9 L994.7 261.4 L992.0 265.5 L989.2 264.2 L987.3 265.3 L985.8 263.7Z M1029.9 296.3 L1031.7 295.3 L1031.5 290.1 L1033.8 290.7 L1036.7 289.4 L1036.9 290.4 L1040.8 292.9 L1039.0 294.2 L1040.6 296.7 L1038.6 298.6 L1037.2 302.7 L1037.7 303.0 L1033.0 304.5 L1030.3 299.4Z M966.2 226.4 L966.9 223.2 L972.0 221.8 L974.0 220.6 L977.2 223.6 L982.4 222.8 L984.0 223.1 L988.4 224.3 L989.6 226.9 L987.0 228.6 L982.0 229.1 L979.4 230.9 L974.7 232.9 L971.4 228.7Z M1038.9 281.7 L1038.9 280.1 L1041.2 278.4 L1046.0 277.0 L1048.4 277.2 L1052.2 278.4 L1059.2 281.7 L1058.8 279.7 L1063.0 284.0 L1059.2 283.0 L1054.8 287.6 L1051.7 285.6 L1043.5 288.1 L1040.1 286.4Z M803.7 284.6 L805.7 281.1 L807.1 279.4 L810.9 277.1 L811.7 276.0 L813.7 279.6 L814.4 280.7 L817.5 281.1 L818.8 284.5 L816.3 287.3 L815.7 287.5 L811.8 287.5 L808.5 288.7 L805.3 286.0Z M829.7 276.7 L829.5 271.7 L833.8 269.2 L836.4 270.9 L840.8 269.1 L846.4 270.1 L849.4 273.3 L850.0 273.4 L853.4 276.0 L849.2 277.4 L845.5 278.0 L840.8 279.3 L837.3 280.8 L831.1 279.3Z M938.8 246.9 L941.4 244.3 L942.4 239.0 L946.0 240.6 L951.7 237.6 L953.8 241.8 L959.4 243.3 L959.8 244.4 L962.0 246.8 L960.7 248.9 L956.4 252.6 L950.7 249.8 L947.3 250.2 L941.6 248.5Z M906.2 292.0 L906.5 289.5 L909.9 289.7 L914.1 288.8 L915.2 287.2 L919.2 291.0 L922.7 289.3 L925.0 290.9 L927.1 294.4 L925.1 293.9 L920.6 295.9 L917.6 295.9 L912.2 297.7 L907.4 293.7Z M846.1 265.4 L845.7 262.8 L848.6 262.4 L852.4 260.7 L857.9 261.1 L860.2 262.1 L865.1 261.4 L868.2 265.5 L870.1 264.3 L868.3 268.2 L864.1 272.1 L857.2 271.9 L851.8 271.7 L847.2 270.4Z M821.4 291.2 L819.6 288.8 L821.0 285.4 L824.1 286.1 L824.4 286.7 L829.1 289.1 L829.4 287.0 L831.4 289.2 L831.6 291.2 L831.7 294.1 L828.4 294.4 L826.2 297.8 L823.2 296.1 L821.8 295.5Z M800.7 275.0 L804.2 271.2 L807.8 269.5 L810.6 267.6 L815.6 266.6 L818.9 269.9 L823.6 269.4 L824.3 272.8 L828.2 272.2 L826.0 274.4 L819.9 276.3 L815.2 278.2 L811.0 276.8 L806.7 274.4Z M881.7 245.2 L884.1 243.3 L886.2 243.2 L886.9 240.4 L891.6 238.8 L892.7 241.2 L897.3 241.5 L897.6 244.1 L899.2 241.8 L897.9 245.1 L895.6 248.5 L890.4 250.0 L887.7 249.2 L885.5 247.3Z M929.5 273.2 L929.0 270.4 L932.4 267.2 L935.3 269.6 L941.4 266.4 L945.2 269.0 L947.5 270.2 L948.9 269.2 L950.1 270.8 L949.2 273.8 L946.0 275.3 L940.1 277.3 L935.1 277.7 L933.0 274.5Z M924.2 229.2 L924.3 227.3 L926.7 224.3 L928.2 222.5 L931.6 224.9 L933.4 226.4 L935.8 227.2 L937.8 228.2 L936.2 230.4 L937.7 231.9 L932.7 236.3 L929.5 236.4 L926.2 235.9 L923.7 233.5Z M621.7 383.5 L623.9 381.7 L623.8 380.1 L629.2 379.8 L632.3 378.7 L634.7 381.0 L638.0 382.5 L637.7 383.9 L639.9 386.5 L638.0 386.1 L634.1 386.8 L630.6 388.8 L628.6 387.9 L625.3 387.6Z M623.9 321.4 L625.4 317.8 L628.6 318.9 L633.0 316.6 L636.6 315.6 L637.3 316.2 L640.4 319.2 L644.5 319.8 L646.3 320.8 L644.2 323.9 L640.3 324.9 L635.4 325.8 L632.3 325.1 L627.4 325.0Z M609.2 364.4 L611.9 363.2 L611.2 360.1 L612.9 358.8 L615.1 358.6 L620.3 360.2 L619.5 361.4 L622.2 362.3 L622.2 362.9 L621.5 365.6 L620.6 369.7 L616.1 370.0 L613.0 373.8 L610.9 367.2Z M626.6 406.2 L628.4 403.5 L629.8 402.0 L630.4 399.5 L633.2 399.4 L637.0 401.2 L637.3 402.2 L640.0 404.1 L639.6 406.2 L638.7 407.1 L636.6 408.0 L634.0 411.1 L630.9 409.9 L630.1 408.0Z M610.5 354.7 L614.3 353.8 L616.3 351.4 L619.3 351.8 L622.5 353.5 L626.9 354.7 L631.7 354.5 L633.6 354.4 L634.1 356.4 L631.9 356.7 L630.0 358.7 L624.7 361.7 L620.2 360.9 L616.6 360.4Z M610.7 385.3 L610.2 383.7 L612.7 381.3 L616.4 379.9 L618.6 381.4 L624.5 380.5 L627.6 382.8 L629.5 384.9 L632.3 383.8 L628.0 387.8 L624.6 391.9 L619.2 390.8 L615.0 391.4 L610.9 387.5Z M669.4 389.0 L668.0 385.8 L668.7 386.6 L673.2 386.3 L675.8 385.8 L676.2 384.5 L678.5 385.0 L679.4 388.1 L681.6 386.6 L679.2 392.5 L679.4 395.1 L675.8 396.0 L672.1 394.4 L670.1 391.4Z M692.6 397.3 L693.6 396.5 L694.3 393.4 L696.5 393.2 L700.3 395.0 L703.8 393.7 L704.6 393.4 L707.5 394.8 L707.0 395.8 L705.6 397.6 L704.9 401.0 L699.5 401.9 L695.3 403.0 L692.3 399.8Z M870.1 461.5 L872.9 457.0 L875.1 454.7 L877.2 454.6 L881.5 453.1 L883.6 455.9 L886.9 456.7 L887.2 459.7 L889.8 462.8 L885.9 465.0 L885.1 467.0 L879.4 469.6 L875.0 468.2 L873.2 463.3Z M754.9 382.3 L754.9 379.9 L758.6 377.2 L759.2 377.2 L762.8 376.0 L766.3 379.2 L768.4 379.7 L770.8 383.1 L771.7 381.8 L769.2 387.5 L766.5 391.1 L762.9 391.7 L759.9 392.7 L758.5 388.7Z M873.6 457.7 L875.8 455.9 L877.8 452.3 L880.7 451.5 L881.8 452.7 L883.3 453.3 L887.8 452.8 L888.4 455.7 L888.7 457.3 L888.1 458.5 L885.0 463.5 L882.6 465.6 L879.8 466.0 L875.1 461.1Z M925.8 491.9 L928.0 490.2 L929.1 486.4 L933.4 485.8 L935.1 486.3 L939.8 486.3 L942.6 486.8 L947.5 488.6 L947.2 491.9 L944.2 493.4 L942.5 496.3 L937.1 495.1 L931.3 496.0 L927.0 492.2Z M719.2 404.7 L719.4 401.5 L721.8 396.9 L727.4 396.3 L730.0 398.2 L734.1 400.1 L737.1 401.9 L738.1 403.5 L741.3 402.2 L737.9 409.4 L736.6 412.3 L731.8 410.1 L725.0 412.0 L723.6 409.9Z M720.5 495.6 L723.9 494.1 L723.3 493.1 L726.3 491.8 L729.0 491.1 L735.3 493.2 L736.9 494.1 L739.0 494.9 L739.6 494.8 L736.0 496.9 L734.9 498.7 L731.5 500.4 L725.6 501.0 L723.6 497.9Z M915.1 426.1 L916.7 427.6 L916.9 422.9 L918.0 424.6 L920.5 421.4 L921.1 422.4 L924.1 424.4 L924.7 428.1 L927.3 427.9 L925.4 428.2 L924.6 432.2 L920.4 432.6 L917.2 433.2 L915.5 431.1Z M905.6 487.5 L906.3 487.0 L907.5 485.0 L912.4 485.2 L915.2 485.0 L921.3 486.5 L924.3 488.5 L923.6 489.6 L925.7 488.6 L925.1 491.8 L922.0 492.2 L917.4 493.1 L910.6 493.4 L907.0 490.1Z M937.9 492.6 L941.9 487.4 L941.6 485.7 L944.9 485.9 L946.3 485.4 L950.1 487.1 L952.3 488.8 L953.6 491.7 L954.8 493.2 L954.5 494.4 L951.3 496.8 L948.2 495.3 L943.6 495.7 L939.8 494.7Z M774.0 398.0 L775.0 394.2 L776.9 392.6 L777.3 393.4 L778.0 393.5 L781.0 394.1 L781.1 395.8 L782.5 395.8 L785.0 395.5 L782.0 397.3 L783.1 400.2 L779.0 400.3 L777.2 399.8 L773.5 397.3Z M833.8 443.3 L835.8 441.6 L838.7 436.7 L844.4 437.1 L848.0 436.2 L851.8 438.2 L854.6 438.6 L858.9 441.9 L859.0 446.2 L857.8 447.9 L853.3 447.5 L848.7 448.4 L842.5 450.6 L837.2 445.0Z M839.7 468.8 L840.2 466.2 L843.2 464.1 L846.5 462.4 L849.9 462.6 L852.4 462.7 L856.7 464.5 L856.1 466.5 L858.8 470.9 L857.4 473.3 L855.5 475.7 L849.4 477.7 L846.0 477.1 L843.8 471.8Z M822.0 479.3 L825.1 478.6 L826.1 474.7 L829.4 474.8 L833.3 474.4 L837.7 473.7 L844.6 476.3 L845.9 477.0 L846.2 478.4 L845.7 479.6 L842.4 483.7 L836.1 482.7 L830.7 485.9 L826.6 480.7Z M843.0 491.7 L845.5 490.3 L846.6 488.8 L852.0 487.7 L854.9 488.2 L859.0 489.2 L861.8 490.0 L864.1 489.8 L863.3 493.8 L863.3 492.4 L861.0 496.0 L856.4 496.3 L850.3 494.4 L848.6 494.6Z M810.5 397.7 L809.2 396.3 L811.2 392.1 L814.9 390.8 L817.3 390.1 L818.7 392.9 L822.1 395.7 L822.5 397.5 L824.3 397.3 L821.7 401.0 L822.7 405.0 L818.5 408.3 L814.4 406.7 L811.0 402.1Z M749.6 406.2 L751.8 403.3 L753.1 401.1 L756.2 400.5 L758.6 402.3 L761.1 401.3 L763.2 403.7 L764.2 405.2 L764.1 406.0 L763.2 409.5 L762.0 413.9 L757.5 411.8 L754.0 413.5 L752.4 410.9Z M680.8 426.6 L681.0 422.2 L684.7 419.0 L687.6 417.4 L692.0 417.2 L697.1 420.9 L701.4 422.7 L700.2 422.2 L703.3 427.4 L700.9 428.4 L696.2 431.4 L690.8 431.8 L687.3 432.6 L681.6 430.1Z M714.6 474.9 L716.2 473.6 L718.1 470.0 L722.2 466.6 L724.3 467.5 L729.7 468.2 L731.3 470.6 L733.8 473.3 L737.2 476.5 L732.3 478.4 L730.5 480.6 L725.4 480.6 L721.6 483.6 L719.3 479.2Z M784.0 439.3 L786.3 435.8 L786.5 435.0 L790.8 433.2 L793.8 433.0 L797.5 435.8 L799.9 435.9 L802.1 437.5 L802.6 437.3 L802.6 438.7 L799.3 440.9 L794.3 441.8 L789.1 441.1 L788.7 438.6Z M721.1 462.1 L723.4 461.0 L724.4 459.4 L724.5 457.7 L729.2 455.8 L729.8 460.2 L735.4 460.6 L733.8 462.8 L738.4 465.1 L735.4 464.9 L733.1 467.6 L728.9 464.9 L724.0 468.2 L723.5 466.1Z M720.2 377.1 L720.8 374.0 L722.5 371.6 L725.8 371.1 L731.5 371.7 L732.3 372.5 L738.2 372.7 L740.2 375.8 L739.2 375.8 L737.6 378.0 L735.5 382.2 L730.9 383.1 L724.8 383.7 L722.1 378.4Z M899.2 440.7 L901.2 436.5 L902.3 435.6 L905.2 432.6 L907.5 433.3 L908.7 435.1 L911.1 437.2 L912.3 439.8 L913.2 440.0 L911.5 442.8 L911.6 448.7 L906.9 447.2 L905.4 450.5 L901.1 444.2Z M816.7 381.4 L820.2 378.3 L818.9 376.4 L821.5 376.6 L824.1 375.9 L827.5 376.8 L829.8 376.4 L828.9 377.4 L832.8 377.1 L828.7 380.9 L827.6 385.7 L823.5 383.8 L819.9 385.3 L820.3 382.7Z M854.9 430.7 L858.7 429.5 L859.9 428.1 L860.5 428.3 L863.4 425.9 L868.0 429.0 L869.1 428.3 L872.0 430.3 L872.3 435.0 L869.2 436.3 L869.8 438.0 L864.0 436.1 L861.0 436.8 L860.2 435.1Z M908.4 429.8 L911.4 426.4 L911.6 423.0 L914.4 421.0 L916.7 423.3 L920.5 421.4 L924.0 426.0 L925.4 426.1 L926.4 428.3 L924.6 431.7 L923.3 436.9 L918.8 437.3 L914.4 436.5 L910.8 432.4Z M737.1 491.7 L740.2 487.6 L741.0 483.9 L743.5 485.1 L746.3 483.3 L747.9 483.4 L749.2 486.8 L749.7 487.5 L753.9 491.5 L750.8 494.8 L750.1 497.8 L745.4 497.0 L744.1 499.0 L739.2 495.4Z M851.2 410.1 L856.1 407.6 L855.6 405.5 L858.6 404.0 L863.0 402.9 L866.4 403.1 L870.5 405.2 L871.4 406.9 L873.0 407.3 L873.3 409.3 L870.3 412.4 L862.8 413.1 L859.2 412.5 L856.1 409.7Z M757.3 457.8 L761.9 456.4 L763.2 456.6 L767.1 453.6 L770.6 453.6 L774.6 455.6 L780.3 456.9 L780.7 459.3 L782.7 459.2 L780.2 460.5 L775.6 461.9 L771.2 461.0 L765.4 464.6 L762.3 460.4Z M803.9 457.7 L805.1 455.2 L806.2 452.4 L810.3 450.1 L812.1 451.0 L817.4 453.6 L820.7 455.0 L822.7 454.0 L821.4 455.0 L821.3 457.8 L817.3 460.2 L815.2 461.3 L808.8 463.4 L807.6 458.4Z M836.3 432.5 L838.4 429.9 L840.6 429.0 L844.2 429.3 L847.4 427.9 L849.2 429.8 L853.5 429.8 L855.9 432.9 L856.3 434.1 L855.0 437.0 L852.2 440.2 L847.1 440.3 L842.6 440.1 L840.8 439.0Z M691.4 366.8 L693.4 363.8 L693.0 363.7 L697.3 362.5 L698.3 361.9 L702.6 364.9 L705.9 365.5 L708.0 364.9 L708.4 367.1 L706.9 367.5 L702.8 370.5 L699.1 369.1 L694.9 370.9 L693.6 369.9Z M835.7 426.4 L837.3 426.8 L840.7 425.4 L846.2 422.0 L848.5 422.1 L852.5 422.6 L856.5 424.9 L859.3 427.6 L863.2 428.1 L857.2 431.7 L854.6 431.3 L849.1 432.9 L845.7 432.2 L839.1 429.4Z M872.3 438.9 L872.7 437.5 L874.8 434.1 L878.5 433.7 L878.6 434.8 L883.4 433.6 L884.5 437.3 L886.3 437.0 L886.3 437.9 L886.0 442.5 L884.4 445.1 L880.1 442.9 L876.6 444.9 L873.3 440.7Z M928.8 482.8 L929.1 482.0 L932.8 479.1 L933.9 478.2 L937.0 479.7 L939.4 480.1 L938.9 482.4 L939.7 483.1 L941.5 484.0 L939.9 485.6 L939.1 486.1 L936.3 487.1 L932.3 487.8 L931.7 486.4Z M774.2 444.1 L775.4 443.2 L776.2 439.3 L780.8 439.7 L780.7 439.7 L785.1 442.0 L787.6 442.4 L786.8 444.4 L787.0 447.2 L788.0 450.0 L786.2 451.1 L783.1 450.1 L779.2 449.9 L778.5 448.3Z M728.7 495.2 L728.4 494.2 L729.8 492.8 L734.1 490.1 L736.3 489.0 L741.3 493.2 L745.4 494.6 L746.3 495.9 L747.2 495.8 L746.7 497.1 L743.1 499.8 L736.6 500.5 L734.6 502.4 L730.2 499.8Z M688.6 484.2 L692.2 483.5 L692.2 479.3 L696.7 478.0 L701.5 477.4 L704.8 479.4 L706.2 482.8 L707.9 482.0 L709.3 485.1 L706.6 487.3 L707.1 490.6 L701.5 491.4 L694.3 491.7 L691.5 490.9Z M808.5 395.4 L808.9 392.1 L809.8 388.9 L812.9 391.6 L813.6 389.7 L814.8 391.9 L817.3 393.0 L817.8 393.2 L819.7 393.7 L817.0 397.2 L815.1 402.7 L813.0 402.7 L809.6 403.9 L809.3 400.0Z M707.8 442.6 L708.3 443.5 L710.1 438.6 L716.0 441.0 L718.5 440.5 L723.5 441.8 L725.4 442.2 L729.9 443.5 L730.5 443.3 L729.1 447.6 L725.6 448.2 L720.6 450.3 L714.0 448.6 L710.8 445.7Z M772.7 438.7 L772.2 437.5 L775.9 433.9 L778.4 434.0 L779.8 432.4 L785.0 432.2 L785.3 437.0 L788.3 438.0 L790.7 440.7 L786.1 442.3 L785.9 445.3 L780.9 443.5 L778.4 444.1 L773.2 443.4Z M935.1 455.7 L935.5 453.6 L936.3 448.3 L940.9 447.3 L944.5 447.1 L945.8 449.1 L948.6 452.0 L949.0 453.9 L953.1 454.6 L948.4 457.6 L946.0 459.8 L945.2 464.0 L938.3 464.4 L937.7 458.4Z M1026.5 266.6 L1028.1 265.3 L1027.8 262.5 L1034.6 260.5 L1036.6 259.5 L1041.1 260.8 L1041.9 263.5 L1044.8 265.2 L1045.7 267.8 L1044.2 269.2 L1042.4 271.3 L1038.3 274.2 L1031.4 273.0 L1027.5 271.2Z M1033.6 295.0 L1034.3 294.1 L1036.7 290.4 L1042.8 288.0 L1046.3 287.4 L1049.5 289.6 L1055.1 292.5 L1058.4 295.5 L1061.2 295.3 L1057.0 298.6 L1054.4 298.5 L1046.9 301.2 L1041.0 303.3 L1037.4 299.1Z M928.1 310.8 L932.2 310.6 L932.2 306.7 L938.7 305.1 L941.3 304.8 L946.9 305.2 L952.6 308.6 L952.2 311.0 L955.9 315.0 L954.0 317.6 L947.5 318.8 L942.0 321.1 L935.9 322.5 L933.8 317.3Z M1031.4 311.3 L1034.0 307.8 L1037.3 304.8 L1040.6 305.7 L1044.7 303.1 L1047.6 305.4 L1051.2 305.6 L1051.7 308.0 L1055.6 311.7 L1051.5 313.7 L1048.9 316.2 L1043.3 315.5 L1040.7 317.5 L1034.5 312.1Z M1025.2 285.3 L1024.2 282.8 L1027.5 281.9 L1031.1 281.7 L1033.2 279.0 L1038.0 281.3 L1041.9 282.6 L1041.6 286.0 L1045.7 286.0 L1043.2 287.8 L1040.1 291.9 L1034.1 290.2 L1029.3 292.2 L1027.2 290.0Z M945.2 298.0 L947.6 295.7 L949.1 293.3 L951.0 294.6 L953.5 294.4 L958.0 294.8 L958.1 296.0 L961.3 294.9 L962.3 294.8 L961.7 298.8 L959.8 298.1 L954.9 300.2 L950.3 301.1 L950.0 296.7Z M956.1 298.9 L957.2 294.7 L960.4 291.6 L963.7 291.9 L967.6 291.2 L972.1 295.4 L976.8 295.6 L979.2 299.7 L982.3 302.4 L979.4 304.6 L976.3 306.1 L969.8 306.8 L965.4 307.2 L962.0 303.0Z M1061.1 454.9 L1062.6 451.8 L1063.1 451.5 L1067.9 450.5 L1070.4 450.5 L1073.7 449.4 L1076.9 452.2 L1080.2 453.2 L1081.2 456.6 L1078.7 457.9 L1074.9 458.8 L1072.2 458.0 L1067.2 456.9 L1062.3 454.3Z M1207.3 395.3 L1210.1 392.7 L1211.6 391.7 L1212.3 392.2 L1215.8 390.2 L1219.4 390.1 L1224.6 394.5 L1226.6 395.7 L1227.4 395.9 L1226.1 398.4 L1222.4 399.3 L1216.8 401.4 L1212.8 401.5 L1209.5 397.3Z M1144.6 389.4 L1147.2 386.7 L1149.5 384.2 L1150.0 382.2 L1150.7 382.0 L1152.9 383.4 L1154.7 387.5 L1157.4 387.9 L1158.3 389.1 L1157.8 392.4 L1154.8 391.7 L1150.6 392.2 L1150.3 392.7 L1147.5 391.7Z M1066.9 378.5 L1067.1 374.8 L1069.1 372.3 L1075.1 370.8 L1077.5 370.4 L1083.1 374.2 L1088.8 376.0 L1088.8 378.3 L1091.0 379.8 L1088.7 381.9 L1085.5 385.3 L1080.6 386.3 L1074.8 387.2 L1068.3 383.6Z M1206.1 437.6 L1206.8 432.1 L1209.0 430.3 L1212.2 430.5 L1213.2 431.3 L1217.6 430.2 L1218.1 431.2 L1220.5 434.9 L1222.4 435.5 L1221.1 440.0 L1217.9 439.4 L1213.7 441.8 L1210.0 441.8 L1210.1 437.0Z M1011.2 368.9 L1011.7 368.3 L1013.2 363.3 L1017.4 364.2 L1018.2 362.1 L1023.2 362.5 L1024.2 365.2 L1026.4 368.3 L1030.1 370.1 L1026.0 374.6 L1025.6 376.1 L1020.1 376.3 L1014.9 376.8 L1014.4 373.0Z M1127.0 483.1 L1125.7 480.4 L1127.7 477.2 L1132.7 475.8 L1135.1 473.1 L1137.9 474.5 L1141.1 476.6 L1145.3 480.2 L1147.1 484.0 L1143.1 483.6 L1142.1 485.8 L1136.2 488.9 L1130.3 487.4 L1129.0 483.5Z M1200.0 455.7 L1201.9 450.0 L1204.3 447.0 L1207.1 447.5 L1209.8 448.0 L1214.0 449.9 L1216.0 449.7 L1219.1 451.7 L1220.0 456.6 L1217.8 456.6 L1213.5 461.1 L1211.6 461.7 L1207.9 462.6 L1203.1 459.8Z M1035.8 348.2 L1037.5 347.8 L1039.2 345.9 L1039.6 344.9 L1044.3 342.9 L1046.1 345.2 L1048.5 344.8 L1049.9 347.1 L1053.0 350.1 L1051.2 351.2 L1049.6 351.3 L1044.5 349.9 L1041.1 352.9 L1037.4 350.4Z M997.3 486.4 L998.3 484.7 L1000.9 482.8 L1001.7 481.4 L1007.9 479.5 L1009.6 481.7 L1010.7 482.5 L1015.1 484.4 L1014.8 488.9 L1011.4 487.7 L1010.9 491.5 L1005.1 493.3 L1003.7 493.6 L999.3 491.3Z M1029.3 496.0 L1032.8 495.1 L1031.5 491.4 L1036.9 488.5 L1038.3 487.3 L1043.6 489.1 L1046.8 493.3 L1048.9 493.3 L1049.9 495.6 L1045.1 501.3 L1042.8 504.0 L1041.3 504.3 L1035.1 506.8 L1032.9 502.7Z M1157.6 404.1 L1158.1 399.6 L1160.1 398.5 L1162.8 398.1 L1165.4 396.9 L1164.9 398.9 L1168.4 398.6 L1166.9 402.9 L1168.4 404.3 L1169.6 406.6 L1166.8 409.3 L1162.8 412.8 L1162.1 411.5 L1159.0 406.8Z M1177.6 375.3 L1178.8 372.2 L1179.1 369.0 L1183.4 367.6 L1183.4 368.1 L1185.4 369.1 L1187.8 372.5 L1187.1 372.4 L1190.9 372.3 L1188.5 377.3 L1186.5 382.2 L1183.1 380.5 L1181.9 384.4 L1179.6 380.4Z M1105.5 444.5 L1108.5 440.2 L1110.3 436.7 L1112.5 437.9 L1115.9 435.2 L1120.7 437.5 L1122.5 438.4 L1126.6 440.3 L1127.4 442.5 L1123.3 448.2 L1122.0 449.1 L1116.0 448.8 L1112.8 452.3 L1111.1 446.7Z M1105.8 366.4 L1105.9 366.3 L1107.1 364.1 L1111.9 364.2 L1115.6 363.8 L1121.6 362.7 L1123.4 364.8 L1124.9 365.2 L1127.7 366.1 L1124.0 368.5 L1121.6 370.3 L1117.8 369.8 L1111.1 372.5 L1108.8 370.5Z M980.3 394.3 L980.2 392.0 L984.5 388.0 L985.7 389.1 L990.1 388.8 L992.0 387.8 L993.4 390.0 L996.2 393.3 L997.6 393.0 L993.6 399.4 L992.0 401.6 L988.7 402.2 L983.6 402.7 L984.3 398.9Z M1067.8 446.5 L1069.7 443.4 L1070.8 440.3 L1070.3 437.6 L1075.4 436.3 L1077.6 440.4 L1077.3 442.9 L1080.5 442.7 L1080.3 446.5 L1079.6 449.0 L1078.7 450.9 L1075.6 454.0 L1072.5 453.0 L1068.3 449.4Z M1080.3 442.2 L1080.7 440.5 L1082.1 438.7 L1083.5 436.4 L1084.8 437.9 L1088.3 439.3 L1089.9 439.4 L1089.8 440.7 L1090.4 438.8 L1092.1 441.1 L1090.5 447.0 L1084.8 445.3 L1084.7 447.6 L1082.0 445.0Z M1085.9 454.2 L1087.5 451.7 L1087.7 448.6 L1090.3 448.1 L1093.6 449.2 L1095.1 449.3 L1096.3 451.1 L1098.8 452.0 L1097.7 455.9 L1096.7 458.4 L1096.3 458.5 L1093.0 461.7 L1092.1 461.1 L1090.9 459.2Z M1180.6 477.2 L1181.7 473.0 L1181.3 469.9 L1184.2 470.1 L1189.8 469.7 L1192.6 469.1 L1195.2 471.2 L1197.7 474.5 L1197.6 477.9 L1196.6 480.1 L1192.9 482.6 L1189.4 481.8 L1184.3 483.1 L1182.3 478.6Z M1176.9 429.8 L1179.5 426.0 L1180.1 421.6 L1182.0 422.5 L1184.1 420.7 L1184.5 422.4 L1186.3 425.2 L1189.1 426.1 L1190.6 426.1 L1188.4 431.5 L1186.9 433.0 L1182.9 434.3 L1180.1 436.5 L1178.5 431.1Z M1218.0 425.2 L1222.0 424.1 L1222.2 421.5 L1228.3 420.8 L1231.7 420.9 L1236.3 424.1 L1240.8 424.5 L1243.7 422.7 L1243.3 426.3 L1241.5 428.0 L1239.6 430.5 L1232.7 433.4 L1227.8 431.9 L1222.5 431.3Z M1130.5 394.1 L1133.5 393.4 L1134.4 390.2 L1138.9 390.3 L1144.9 389.6 L1149.0 390.0 L1150.0 391.3 L1154.9 392.4 L1156.6 396.8 L1153.6 397.9 L1148.5 402.0 L1142.9 399.9 L1138.3 403.8 L1136.3 399.1Z M983.8 406.6 L984.4 403.1 L985.7 400.3 L989.1 401.1 L993.0 401.1 L993.3 403.3 L997.0 404.0 L999.6 405.1 L1000.3 405.6 L997.4 408.6 L995.9 412.9 L991.0 413.5 L986.3 416.5 L986.7 410.6Z M1233.8 453.0 L1234.6 450.6 L1238.8 446.0 L1239.1 447.4 L1243.9 444.7 L1244.8 448.9 L1251.2 450.4 L1249.6 451.7 L1252.4 452.4 L1249.6 455.0 L1247.6 454.7 L1242.2 455.2 L1239.3 458.4 L1237.1 456.3Z M1206.0 479.0 L1207.5 476.6 L1209.1 474.5 L1211.6 472.1 L1217.1 473.4 L1217.8 475.3 L1222.8 475.2 L1222.6 476.6 L1223.3 478.7 L1224.0 483.4 L1220.6 485.7 L1214.3 484.4 L1213.2 483.7 L1207.1 483.3Z M1134.6 486.4 L1136.7 481.7 L1137.0 478.3 L1140.5 480.0 L1140.7 477.3 L1145.1 479.2 L1146.3 480.7 L1148.1 484.8 L1146.5 486.7 L1147.1 488.8 L1143.7 491.9 L1140.7 491.1 L1138.4 492.2 L1139.1 490.8Z M1074.5 451.8 L1076.8 450.9 L1077.9 444.9 L1080.1 444.6 L1085.6 446.4 L1088.0 448.6 L1093.0 447.6 L1095.6 450.6 L1096.3 453.0 L1095.3 455.7 L1090.5 458.9 L1086.6 461.8 L1080.5 461.0 L1075.5 459.3Z M1129.9 339.6 L1133.4 336.6 L1134.3 334.3 L1136.2 333.2 L1140.3 332.5 L1142.8 333.2 L1149.0 337.1 L1147.8 340.2 L1150.2 342.2 L1148.0 343.6 L1145.3 344.4 L1141.0 345.4 L1137.7 346.9 L1132.4 344.3Z M1125.0 436.7 L1125.1 434.6 L1128.6 431.5 L1130.8 429.1 L1136.6 431.3 L1139.7 429.5 L1142.0 432.1 L1142.9 434.0 L1146.6 438.6 L1144.3 440.8 L1139.8 443.0 L1134.9 441.7 L1131.4 442.5 L1125.8 440.3Z M993.2 438.0 L992.7 434.9 L992.9 430.0 L994.9 430.9 L998.8 428.3 L998.6 430.7 L1001.0 432.7 L1003.7 434.3 L1004.7 436.8 L1003.8 439.2 L1002.5 441.0 L998.3 440.7 L994.4 441.4 L994.8 440.6Z M1093.6 388.8 L1095.3 387.5 L1095.6 384.4 L1098.5 382.5 L1100.3 381.4 L1103.9 382.9 L1107.6 383.8 L1107.8 387.8 L1109.8 390.5 L1106.6 391.1 L1106.8 395.4 L1101.2 393.1 L1100.1 397.0 L1096.1 393.5Z M1133.7 478.7 L1132.6 479.7 L1135.4 477.5 L1136.8 476.8 L1137.4 475.0 L1140.5 476.0 L1143.0 479.8 L1143.3 478.2 L1143.1 480.6 L1142.2 481.4 L1139.4 483.0 L1138.1 482.1 L1137.7 484.5 L1136.0 481.1Z M1153.5 449.0 L1155.0 447.1 L1156.5 443.5 L1157.6 445.4 L1161.1 444.2 L1165.3 443.4 L1165.3 445.3 L1165.8 447.2 L1169.1 450.8 L1165.8 452.7 L1165.6 455.8 L1162.6 456.6 L1157.3 455.0 L1157.3 452.9Z M1157.0 452.4 L1158.4 447.8 L1161.2 447.2 L1163.6 444.3 L1167.1 445.0 L1172.2 445.9 L1175.6 446.9 L1178.2 448.8 L1179.8 451.4 L1177.1 454.8 L1173.9 456.4 L1170.1 456.9 L1164.0 460.2 L1160.0 454.6Z M1150.1 413.3 L1151.0 408.8 L1153.1 406.1 L1157.2 405.4 L1163.2 406.2 L1164.9 405.8 L1169.8 408.9 L1171.5 409.1 L1173.5 413.8 L1170.5 416.6 L1166.9 418.9 L1161.4 420.7 L1157.9 420.5 L1153.7 415.9Z M1229.7 335.2 L1232.3 334.0 L1233.5 330.5 L1234.9 331.9 L1237.6 328.6 L1241.3 332.5 L1246.4 332.4 L1247.1 336.9 L1249.3 338.3 L1246.0 338.1 L1242.8 340.6 L1238.5 341.7 L1233.9 342.1 L1230.9 339.6Z M1206.2 477.1 L1207.6 475.6 L1210.3 471.8 L1213.8 472.4 L1216.0 472.8 L1217.5 473.8 L1220.8 473.4 L1222.9 476.9 L1222.2 479.0 L1223.2 480.1 L1221.0 485.0 L1217.1 485.2 L1211.6 486.4 L1208.5 481.3Z M1149.5 386.6 L1149.2 385.3 L1152.9 382.7 L1154.0 380.8 L1153.9 380.7 L1157.9 382.6 L1157.2 385.3 L1160.7 386.0 L1159.2 385.9 L1157.5 389.7 L1157.7 392.0 L1154.0 390.0 L1151.9 391.8 L1152.0 389.2Z M1105.1 373.4 L1105.6 371.7 L1105.7 371.9 L1109.4 371.8 L1111.2 369.2 L1114.5 370.4 L1118.4 371.9 L1118.8 374.8 L1119.1 375.6 L1118.4 376.2 L1116.2 376.9 L1111.3 379.4 L1108.2 378.4 L1105.3 377.4Z M1160.2 432.4 L1161.4 428.0 L1163.6 425.0 L1163.6 425.6 L1164.6 426.0 L1167.0 428.3 L1170.9 426.5 L1169.3 429.6 L1172.0 429.1 L1169.4 434.6 L1170.1 435.4 L1166.9 438.3 L1164.3 437.3 L1163.6 434.7Z M1154.8 480.1 L1155.4 478.7 L1155.9 476.7 L1159.3 478.1 L1158.2 477.5 L1163.1 477.4 L1162.2 476.8 L1164.5 478.7 L1165.5 480.5 L1163.7 482.2 L1162.8 484.2 L1160.0 484.0 L1156.7 486.8 L1157.3 482.0Z M982.8 403.6 L985.4 401.4 L985.4 398.1 L989.0 397.9 L993.5 396.5 L998.7 400.6 L1004.0 400.9 L1003.9 403.0 L1006.5 405.3 L1005.4 407.4 L1001.1 411.4 L995.0 410.1 L990.9 413.0 L984.6 409.6Z M1092.7 472.6 L1096.1 473.2 L1095.5 468.8 L1097.5 470.6 L1101.3 466.5 L1103.3 469.5 L1106.9 471.2 L1108.7 471.7 L1110.2 473.3 L1107.5 473.1 L1104.6 475.5 L1103.0 477.6 L1099.0 477.0 L1094.7 473.1Z M992.9 405.4 L996.3 400.8 L996.4 396.1 L999.3 398.2 L1002.8 398.3 L1005.1 397.4 L1008.0 398.3 L1006.8 402.4 L1009.7 405.2 L1007.5 408.7 L1004.9 409.6 L1001.1 411.8 L999.2 411.6 L996.4 409.3Z M1135.5 410.3 L1136.1 407.9 L1137.5 406.5 L1141.3 407.0 L1144.9 405.1 L1148.6 406.8 L1149.3 406.3 L1149.4 408.9 L1152.9 410.5 L1149.1 412.1 L1147.0 412.0 L1144.5 414.4 L1140.1 414.8 L1137.5 410.7Z M1181.1 438.5 L1181.1 435.8 L1185.9 432.4 L1189.3 431.4 L1192.3 429.2 L1195.1 433.3 L1199.4 435.5 L1199.9 433.7 L1202.8 438.1 L1200.8 441.4 L1195.0 444.4 L1193.4 443.3 L1187.7 444.5 L1183.7 442.5Z M993.4 356.9 L997.3 354.8 L998.4 352.4 L1001.9 351.1 L1004.2 352.4 L1009.1 352.4 L1013.1 352.9 L1015.7 356.5 L1016.1 358.9 L1012.3 362.9 L1011.7 365.5 L1006.0 365.9 L1000.7 365.0 L998.7 361.0Z M1101.2 387.6 L1102.1 385.0 L1100.0 383.0 L1101.9 382.2 L1104.1 381.3 L1105.7 380.9 L1109.8 384.7 L1110.9 385.8 L1111.3 391.0 L1110.7 393.9 L1108.9 396.7 L1105.7 395.6 L1103.5 396.8 L1100.4 391.5Z M1195.2 369.4 L1196.7 366.5 L1197.1 361.7 L1198.7 361.9 L1203.0 360.8 L1203.8 363.5 L1205.8 365.7 L1205.1 365.5 L1206.4 367.6 L1205.2 372.9 L1202.9 373.8 L1202.4 373.8 L1197.3 374.5 L1196.6 372.3Z M1124.4 456.3 L1125.4 451.9 L1127.0 450.8 L1134.4 451.1 L1135.5 451.7 L1140.1 451.1 L1145.6 454.1 L1148.7 453.0 L1151.1 455.0 L1147.5 456.2 L1143.6 459.8 L1139.2 460.4 L1132.2 458.0 L1128.8 456.0Z M1306.3 490.3 L1306.0 488.2 L1310.7 488.2 L1313.4 488.9 L1316.1 486.3 L1321.8 487.6 L1326.1 489.1 L1327.6 490.9 L1328.9 493.7 L1327.4 492.7 L1323.4 495.3 L1316.9 494.6 L1312.0 497.0 L1309.8 494.3Z M1252.9 439.2 L1253.7 436.7 L1252.8 432.9 L1254.8 432.6 L1255.5 430.9 L1259.5 434.8 L1259.2 434.0 L1260.7 437.9 L1262.5 437.7 L1261.6 441.0 L1260.1 442.4 L1258.4 442.3 L1255.3 442.0 L1254.5 441.6Z M1254.4 454.8 L1255.8 453.8 L1257.1 451.7 L1262.6 450.6 L1266.7 448.7 L1270.3 452.1 L1274.7 450.9 L1276.1 453.6 L1278.8 455.5 L1273.7 454.9 L1272.5 456.3 L1266.2 457.0 L1261.3 459.7 L1255.8 455.6Z M1227.3 420.2 L1229.1 418.4 L1228.0 416.2 L1230.7 414.7 L1235.5 414.8 L1236.8 417.0 L1240.4 419.3 L1241.7 417.5 L1243.6 420.6 L1243.3 424.1 L1238.8 426.1 L1235.8 426.7 L1233.0 427.6 L1228.8 422.7Z M1314.5 496.1 L1316.5 491.4 L1318.5 488.6 L1323.3 487.8 L1325.2 489.1 L1328.7 489.0 L1333.8 493.5 L1337.5 493.3 L1336.1 496.3 L1335.9 500.1 L1333.1 501.8 L1326.3 503.8 L1320.8 504.7 L1318.0 498.4Z M1183.5 440.9 L1185.1 435.9 L1185.3 433.7 L1190.0 433.6 L1191.5 431.9 L1193.5 435.8 L1196.9 436.1 L1197.5 437.1 L1198.4 441.9 L1197.1 443.4 L1194.8 446.9 L1194.1 447.6 L1187.2 448.5 L1186.9 444.0Z M1185.7 460.2 L1186.6 459.4 L1188.7 455.5 L1191.5 455.1 L1194.6 452.0 L1198.1 456.5 L1197.9 456.7 L1199.3 459.8 L1201.0 461.9 L1199.5 465.4 L1197.2 466.9 L1192.2 470.5 L1189.6 470.5 L1186.0 464.4Z M1249.7 455.7 L1252.2 456.2 L1254.8 453.6 L1257.3 450.9 L1261.9 451.6 L1264.8 452.2 L1271.8 454.8 L1274.1 455.3 L1274.8 457.9 L1272.1 461.5 L1268.9 462.7 L1263.7 460.5 L1258.2 462.5 L1253.8 461.0Z M1193.5 469.9 L1196.2 471.1 L1199.1 466.8 L1202.4 467.3 L1207.5 468.2 L1209.8 467.5 L1212.6 469.2 L1215.1 471.3 L1218.3 471.4 L1213.8 471.5 L1211.1 473.1 L1205.4 474.2 L1201.5 475.3 L1197.4 473.3Z M1187.1 431.4 L1186.5 429.1 L1187.4 429.7 L1192.4 426.7 L1196.7 428.8 L1199.9 428.5 L1202.4 428.5 L1203.9 433.5 L1207.7 432.4 L1205.1 432.6 L1200.1 434.6 L1195.4 437.2 L1192.8 438.2 L1189.0 435.2Z M1306.2 474.3 L1306.9 472.2 L1309.2 469.6 L1312.2 470.2 L1314.8 469.9 L1319.7 470.7 L1324.3 472.1 L1326.0 472.8 L1325.4 475.1 L1323.8 479.0 L1321.8 484.0 L1314.8 481.8 L1310.8 483.2 L1308.0 477.9Z M1204.0 411.1 L1205.1 409.6 L1206.6 404.8 L1212.3 405.7 L1215.0 403.9 L1218.7 407.1 L1221.6 408.4 L1223.6 406.7 L1224.8 407.2 L1221.9 410.5 L1218.5 413.4 L1213.3 415.1 L1211.5 415.3 L1206.3 414.0Z M1219.3 399.5 L1221.2 396.2 L1219.3 394.6 L1223.0 391.4 L1225.5 392.0 L1225.7 392.4 L1226.7 396.3 L1229.5 397.6 L1228.8 400.1 L1229.9 403.0 L1226.8 402.9 L1225.0 403.4 L1221.7 405.3 L1221.8 403.0Z M1195.0 448.4 L1197.9 444.3 L1196.7 443.6 L1202.3 443.2 L1204.5 441.4 L1209.7 443.4 L1211.3 443.0 L1214.6 444.1 L1217.1 446.5 L1212.8 447.1 L1208.7 450.9 L1206.4 450.2 L1200.7 452.0 L1197.8 450.0Z M1245.2 465.0 L1243.3 461.2 L1246.3 458.0 L1247.6 456.8 L1250.5 456.1 L1254.6 457.3 L1255.3 457.9 L1256.1 460.7 L1257.5 462.5 L1255.4 465.9 L1254.2 469.1 L1251.6 470.4 L1247.9 470.4 L1246.0 467.6Z M1227.0 495.1 L1228.8 492.5 L1227.9 490.6 L1235.0 488.4 L1238.5 487.7 L1241.8 490.4 L1244.9 492.3 L1245.9 491.6 L1249.4 495.1 L1244.6 498.6 L1242.3 501.7 L1238.0 503.1 L1232.4 504.0 L1228.6 500.7Z M1230.0 406.3 L1229.4 401.7 L1233.0 399.3 L1236.1 398.4 L1236.0 397.3 L1240.4 400.9 L1241.6 399.9 L1244.7 403.7 L1243.6 404.8 L1244.5 408.4 L1241.1 410.8 L1239.2 411.9 L1234.1 411.8 L1233.2 408.7Z M1298.0 310.1 L1300.2 308.1 L1301.6 306.2 L1307.1 302.9 L1310.7 302.0 L1313.2 305.8 L1316.0 308.3 L1318.6 309.9 L1321.8 310.8 L1320.1 312.2 L1317.2 315.7 L1310.3 315.2 L1306.1 314.1 L1300.6 312.3Z M1302.6 316.0 L1303.7 313.5 L1307.6 311.6 L1309.7 310.7 L1314.3 309.4 L1316.7 310.0 L1322.5 314.2 L1321.4 313.6 L1324.6 317.8 L1322.1 319.3 L1318.6 318.2 L1313.3 320.4 L1308.7 319.4 L1307.9 316.5Z M1277.5 312.6 L1279.1 310.8 L1278.1 309.0 L1280.6 308.5 L1282.7 305.3 L1286.6 309.1 L1288.5 309.3 L1289.0 312.3 L1290.8 312.9 L1288.0 313.9 L1286.6 314.6 L1283.6 317.5 L1281.3 318.2 L1279.3 314.4Z M1296.0 306.3 L1296.2 301.9 L1299.1 302.2 L1300.3 302.1 L1302.5 298.9 L1306.0 301.4 L1306.2 301.1 L1307.6 303.6 L1308.4 306.6 L1308.8 307.6 L1305.8 307.9 L1305.0 309.5 L1299.7 310.1 L1298.5 309.1Z M1340.3 317.7 L1340.6 313.0 L1340.9 312.4 L1343.9 311.5 L1344.5 308.7 L1348.0 312.9 L1350.1 313.6 L1351.0 314.3 L1351.9 317.4 L1348.1 321.1 L1348.2 323.3 L1344.0 325.6 L1342.7 324.4 L1341.6 321.7Z M1419.8 326.2 L1422.2 323.6 L1421.3 324.2 L1424.6 320.7 L1425.7 320.1 L1429.0 323.1 L1430.3 322.2 L1431.5 323.7 L1432.6 324.3 L1429.5 328.5 L1429.8 330.2 L1426.9 327.5 L1425.3 328.3 L1420.0 326.8Z M1243.2 327.0 L1243.1 325.1 L1244.2 320.4 L1250.2 320.3 L1252.2 320.8 L1257.4 321.8 L1261.1 323.7 L1261.8 325.9 L1262.3 329.3 L1259.5 331.1 L1258.5 330.7 L1251.7 332.8 L1248.7 333.5 L1243.7 328.2Z M1263.8 334.9 L1264.6 330.2 L1265.4 327.1 L1268.5 327.6 L1273.1 328.3 L1278.8 330.7 L1282.7 330.8 L1285.0 333.3 L1284.5 332.7 L1284.1 337.1 L1279.1 336.7 L1275.6 336.6 L1271.1 337.6 L1267.0 336.3Z M1325.6 357.1 L1326.1 353.7 L1328.5 351.7 L1330.2 348.5 L1332.1 351.1 L1335.2 349.8 L1337.9 353.1 L1336.8 353.4 L1339.6 356.0 L1335.9 360.6 L1337.2 363.4 L1331.7 364.1 L1327.8 364.1 L1326.6 359.7Z M1433.3 345.6 L1431.2 343.4 L1435.0 342.1 L1435.6 340.1 L1439.7 341.8 L1441.4 340.6 L1444.4 342.1 L1447.9 346.7 L1446.1 347.9 L1445.2 348.8 L1444.8 352.3 L1438.4 352.2 L1437.5 352.0 L1435.7 350.4Z M1394.4 353.6 L1397.7 348.4 L1400.3 347.0 L1400.9 346.4 L1405.6 347.5 L1408.5 347.3 L1412.7 348.8 L1414.4 349.7 L1418.6 353.6 L1414.4 353.9 L1410.3 358.0 L1406.0 359.0 L1400.7 359.2 L1399.7 353.3Z M1322.1 329.9 L1323.6 324.5 L1324.4 321.0 L1331.1 321.3 L1333.7 322.3 L1337.8 322.6 L1338.7 323.8 L1341.4 326.0 L1343.0 330.4 L1341.3 334.2 L1339.3 335.1 L1334.6 338.1 L1330.3 336.3 L1326.4 332.1Z M1407.0 336.6 L1405.2 334.4 L1409.6 332.9 L1409.3 332.0 L1411.9 328.3 L1415.4 332.4 L1418.1 334.2 L1417.8 334.9 L1421.5 335.6 L1417.7 335.2 L1416.9 337.8 L1414.1 339.6 L1411.7 338.3 L1408.1 338.9Z M1363.8 317.8 L1364.4 313.6 L1365.0 312.1 L1369.4 312.3 L1373.4 309.7 L1378.0 313.1 L1382.7 312.1 L1382.8 313.6 L1386.8 316.3 L1383.6 319.1 L1379.7 321.2 L1376.5 323.5 L1370.6 322.1 L1367.4 321.3Z M1225.9 305.2 L1229.6 302.2 L1230.5 296.8 L1231.4 299.5 L1235.8 297.4 L1236.8 300.1 L1238.2 302.2 L1241.4 303.3 L1241.5 305.5 L1241.4 307.9 L1238.1 310.6 L1236.1 311.2 L1231.3 310.8 L1230.9 309.9Z M1388.5 326.1 L1389.7 327.0 L1390.4 324.5 L1390.8 323.7 L1395.0 323.4 L1397.2 325.5 L1399.1 324.0 L1399.9 324.6 L1399.4 326.1 L1397.8 328.5 L1396.2 329.7 L1394.0 329.8 L1390.1 333.3 L1388.0 331.0Z M1308.9 337.9 L1311.1 336.4 L1314.8 334.8 L1318.0 333.3 L1322.4 332.7 L1327.0 331.4 L1331.1 336.3 L1331.1 336.1 L1334.6 337.7 L1329.1 339.6 L1326.6 340.9 L1321.4 341.4 L1316.0 338.9 L1312.9 338.1Z M1250.4 361.5 L1251.0 360.9 L1255.0 357.3 L1258.9 357.0 L1264.4 355.8 L1268.6 358.0 L1273.2 360.3 L1274.2 360.2 L1277.3 362.7 L1271.7 364.2 L1271.3 366.6 L1265.5 368.6 L1259.8 368.7 L1254.3 365.5Z M1279.3 339.7 L1278.3 338.1 L1282.6 335.6 L1282.4 335.2 L1287.3 337.2 L1287.8 336.6 L1290.5 337.1 L1294.5 339.9 L1295.1 341.1 L1293.3 343.8 L1290.8 346.8 L1287.1 344.8 L1282.6 345.0 L1282.4 342.7Z M1299.0 491.1 L1301.2 488.7 L1300.3 486.4 L1305.8 486.8 L1309.1 486.2 L1312.0 485.1 L1316.0 487.6 L1318.8 492.8 L1321.6 494.4 L1316.2 496.9 L1315.5 499.8 L1308.1 498.3 L1304.8 499.7 L1302.7 497.5Z M1394.9 467.1 L1397.4 466.6 L1400.6 462.1 L1401.6 462.2 L1406.4 462.9 L1410.0 463.2 L1415.2 465.7 L1415.9 466.8 L1418.2 468.4 L1415.8 470.4 L1411.0 471.6 L1405.9 474.9 L1402.9 474.8 L1398.7 471.6Z M1378.4 458.7 L1379.2 457.5 L1383.3 455.4 L1383.9 455.4 L1384.9 454.5 L1387.5 454.8 L1389.5 457.1 L1390.1 458.8 L1393.1 459.7 L1391.1 462.4 L1389.8 462.8 L1387.5 462.6 L1381.9 462.2 L1383.2 460.3Z M1331.3 451.4 L1330.6 449.8 L1332.3 448.2 L1335.9 448.1 L1336.2 448.5 L1339.2 448.4 L1340.2 449.1 L1342.3 451.9 L1344.5 450.1 L1340.5 452.7 L1339.6 454.2 L1338.3 457.2 L1332.9 455.7 L1331.1 453.4Z M1306.4 447.8 L1307.6 444.6 L1309.1 445.1 L1312.3 444.4 L1317.0 442.9 L1321.7 445.0 L1325.9 445.2 L1327.2 447.1 L1329.2 449.9 L1327.7 449.2 L1322.8 453.7 L1318.9 452.1 L1311.5 453.7 L1310.8 450.2Z M1419.6 486.5 L1419.3 485.1 L1422.4 484.2 L1422.8 482.5 L1424.8 482.3 L1426.3 484.0 L1427.6 485.8 L1428.3 487.4 L1430.7 486.5 L1429.2 488.8 L1426.7 491.6 L1424.5 492.7 L1422.9 495.9 L1419.6 492.6Z M1340.7 494.2 L1342.7 492.4 L1342.3 489.9 L1345.9 492.3 L1349.1 489.9 L1354.2 492.9 L1356.4 493.7 L1355.9 496.5 L1359.6 497.6 L1355.9 498.5 L1355.6 499.7 L1351.6 501.3 L1345.7 499.9 L1344.0 499.5Z M1366.5 453.7 L1367.5 448.5 L1367.6 446.5 L1372.7 446.6 L1376.4 446.8 L1377.1 448.3 L1381.3 450.2 L1383.0 451.1 L1384.8 454.3 L1380.2 457.2 L1379.9 456.9 L1373.6 458.4 L1372.3 459.3 L1370.5 454.6Z M1093.7 290.1 L1094.4 288.9 L1097.7 283.4 L1099.8 283.2 L1104.3 283.8 L1106.8 284.9 L1109.1 287.8 L1110.6 286.9 L1113.9 290.8 L1109.6 292.5 L1109.5 295.9 L1105.2 295.8 L1101.4 296.1 L1096.2 293.6Z M1058.1 284.8 L1060.7 283.0 L1061.8 279.6 L1063.3 282.0 L1065.1 281.2 L1066.8 279.8 L1068.9 282.1 L1072.1 284.7 L1073.2 285.8 L1071.9 287.5 L1068.1 286.0 L1064.3 287.0 L1061.9 288.1 L1060.2 286.4Z M1055.6 271.5 L1054.4 267.5 L1058.2 266.2 L1059.4 265.7 L1062.8 262.5 L1063.1 264.3 L1066.6 266.2 L1068.9 270.0 L1070.3 273.8 L1066.9 276.8 L1065.5 276.1 L1061.8 277.2 L1057.9 280.2 L1054.7 276.9Z M1112.5 288.1 L1115.2 286.7 L1113.8 281.8 L1120.1 283.2 L1121.8 280.9 L1125.7 282.7 L1129.5 283.8 L1130.0 284.6 L1133.8 287.5 L1129.1 290.5 L1126.7 293.8 L1123.8 294.8 L1119.1 296.4 L1115.6 294.2Z M1087.4 321.8 L1089.3 319.8 L1088.4 315.8 L1093.7 315.5 L1094.3 313.9 L1096.1 314.6 L1097.5 319.5 L1098.9 319.7 L1100.3 320.2 L1098.8 324.4 L1099.5 328.3 L1095.7 328.0 L1092.2 329.2 L1089.1 326.4Z M1066.5 285.8 L1068.1 282.5 L1066.2 280.3 L1069.6 277.9 L1070.8 279.0 L1075.0 281.8 L1076.0 282.9 L1078.5 283.1 L1078.3 287.3 L1075.5 289.9 L1073.7 291.8 L1072.5 292.2 L1070.6 292.0 L1068.4 288.6Z M821.7 445.3 L821.2 444.7 L824.2 441.0 L825.5 440.4 L828.9 440.6 L833.1 443.1 L833.9 443.2 L836.6 446.0 L837.7 446.7 L834.2 447.9 L834.5 452.7 L830.9 452.6 L827.3 452.2 L824.8 448.7Z M863.3 467.0 L864.5 465.2 L866.9 461.6 L869.5 460.3 L871.8 460.9 L877.5 463.4 L879.7 463.0 L880.3 468.3 L882.9 467.2 L878.9 470.6 L876.3 473.0 L872.7 473.6 L869.3 477.1 L868.6 473.0Z M874.8 457.4 L876.9 455.9 L877.4 456.1 L882.1 452.9 L883.7 454.8 L889.8 453.6 L891.5 455.2 L891.8 456.8 L893.9 457.3 L892.5 459.9 L889.4 460.9 L886.9 461.6 L879.8 463.7 L879.6 461.4Z M825.8 467.0 L823.9 465.7 L824.9 462.4 L830.0 460.4 L830.3 459.2 L833.8 462.5 L835.2 465.3 L837.2 466.6 L836.7 469.2 L836.1 470.1 L836.1 474.4 L830.8 473.2 L829.4 475.4 L827.7 473.1Z M1154.5 244.3 L1155.9 240.3 L1156.5 239.3 L1160.1 238.7 L1162.9 234.4 L1166.9 237.5 L1172.1 241.4 L1170.9 241.0 L1172.9 243.0 L1170.4 244.8 L1169.0 249.7 L1166.4 249.5 L1161.4 248.6 L1157.5 246.4Z M1138.2 236.3 L1138.7 235.5 L1138.2 232.9 L1139.6 230.3 L1141.8 230.8 L1143.9 232.0 L1147.3 232.4 L1147.6 233.7 L1146.4 238.2 L1145.7 240.5 L1146.9 242.8 L1144.1 244.8 L1141.3 245.1 L1139.7 241.7Z M1373.9 269.8 L1374.7 267.1 L1376.2 261.6 L1379.0 263.0 L1382.3 264.1 L1386.2 262.5 L1391.9 263.2 L1393.6 266.5 L1395.3 269.6 L1391.6 272.8 L1389.4 276.5 L1383.3 276.3 L1381.1 277.7 L1376.3 272.1Z M1374.5 239.4 L1374.4 235.8 L1376.4 236.0 L1378.6 233.1 L1381.3 232.7 L1385.8 235.5 L1389.6 237.5 L1389.0 237.0 L1392.3 237.9 L1389.4 239.8 L1385.4 244.3 L1382.1 245.3 L1378.5 246.4 L1375.9 241.7Z M1422.7 278.6 L1424.3 273.3 L1424.8 272.6 L1430.4 271.3 L1434.6 270.3 L1437.7 274.4 L1438.6 275.7 L1439.4 275.6 L1442.3 278.8 L1440.2 278.2 L1438.0 280.7 L1434.4 281.6 L1430.6 283.8 L1426.7 279.6Z M1380.3 247.1 L1380.3 244.6 L1383.5 242.6 L1385.8 240.0 L1390.6 241.8 L1393.6 243.4 L1397.5 244.5 L1399.3 243.5 L1403.7 247.9 L1399.0 250.8 L1394.9 252.7 L1391.6 251.8 L1384.5 253.2 L1383.0 250.1Z M1390.5 235.2 L1392.8 232.4 L1394.8 232.9 L1398.0 229.1 L1399.7 231.1 L1403.0 232.8 L1403.5 233.5 L1405.9 233.3 L1408.1 234.9 L1405.1 238.9 L1402.6 240.9 L1399.9 241.5 L1398.2 242.9 L1393.2 240.5Z" fill="#b4ead2" fill-opacity=".8" filter="url(#bl2)"/>
<path d="M672.1 291.1 L675.2 287.7 L680.7 282.5 L685.5 282.3 L691.3 279.8 L694.9 277.1 L699.4 277.2 L705.5 278.8 L709.7 281.7 L709.3 286.0 L711.0 290.3 L707.0 294.5 L704.6 297.2 L701.5 298.5 L696.6 299.3 L694.4 296.0 L691.9 294.4 L686.7 293.5 L683.0 293.3 L680.9 292.6 L675.4 294.7 L674.4 293.5Z M773.8 284.1 L779.4 280.1 L783.8 279.4 L789.2 274.8 L796.5 273.5 L802.2 271.6 L808.6 272.6 L814.0 273.2 L821.2 273.2 L821.4 279.2 L818.7 284.7 L816.3 288.4 L809.3 291.2 L805.3 292.4 L798.3 293.8 L791.6 294.6 L786.9 296.4 L781.1 295.0 L777.7 292.1 L775.0 289.5Z M818.9 261.1 L824.8 258.7 L828.6 258.2 L831.1 259.5 L833.2 263.3 L834.3 267.5 L833.1 275.1 L829.3 277.0 L826.1 281.9 L823.7 278.5 L820.0 279.0 L820.5 271.4Z M862.5 239.9 L865.1 237.8 L870.6 235.6 L874.5 236.6 L879.9 238.8 L879.5 245.3 L880.4 250.8 L874.9 256.2 L872.2 258.8 L868.4 258.3 L864.6 255.0 L861.8 247.6Z M759.8 225.8 L778.7 224.7 L800.1 226.1 L798.2 230.1 L795.3 234.7 L788.8 237.3 L779.3 240.9 L770.9 237.9 L765.1 237.1 L760.7 230.6Z M699.4 226.4 L716.1 226.1 L730.8 225.0 L727.1 230.1 L726.3 234.1 L716.2 235.9 L708.9 235.2 L704.8 231.2Z M671.2 307.4 L675.9 308.1 L679.4 305.7 L682.1 309.9 L685.0 315.2 L680.7 318.3 L679.7 321.2 L674.8 319.3 L673.2 316.7 L670.2 314.3Z M640.6 331.4 L647.0 329.3 L650.7 328.3 L657.2 330.6 L659.2 335.2 L658.1 337.8 L655.4 340.0 L650.2 341.4 L643.1 340.2 L642.6 335.8Z M654.4 364.6 L660.6 364.0 L668.9 361.6 L669.3 367.9 L672.5 374.5 L668.4 379.7 L664.1 383.8 L658.6 380.1 L656.1 378.9 L656.7 371.2Z M612.2 225.5 L621.9 225.5 L630.6 225.7 L626.9 231.1 L625.2 234.6 L620.3 237.2 L613.5 239.2 L614.0 233.3Z" fill="#f3f8f5" fill-opacity=".92" filter="url(#bl2)"/>
<path d="M688.3 347.9 L697.1 345.6 L705.5 345.1 L707.2 351.2 L709.9 357.5 L703.2 359.9 L695.6 360.9 L691.6 354.9Z M703.7 231.3 L712.5 230.7 L721.5 231.6 L719.1 234.8 L718.1 239.0 L713.0 240.7 L706.9 242.8 L705.5 237.5Z M1152.4 418.5 L1157.8 417.4 L1162.6 416.8 L1162.9 419.6 L1164.6 422.0 L1159.1 423.9 L1153.9 424.6 L1152.9 421.6Z M1079.8 405.8 L1088.5 407.1 L1097.7 408.5 L1099.9 412.1 L1100.5 415.8 L1093.3 416.2 L1084.9 414.6 L1083.1 410.1Z M1053.5 363.6 L1060.4 365.1 L1067.2 366.1 L1066.4 368.4 L1064.4 371.1 L1060.9 371.8 L1056.7 370.9 L1055.3 367.5Z M1250.7 408.7 L1254.2 408.7 L1260.0 407.9 L1260.8 412.5 L1261.9 416.6 L1257.4 417.4 L1251.0 419.3 L1250.1 413.9Z M1407.7 363.6 L1413.7 362.5 L1421.1 363.6 L1421.9 367.2 L1422.6 373.0 L1415.9 373.4 L1411.1 373.9 L1408.1 368.8Z M1359.8 290.6 L1363.7 290.4 L1370.2 289.0 L1370.1 290.9 L1372.1 293.5 L1367.0 293.7 L1361.1 293.2 L1360.0 291.6Z M806.4 408.3 L811.9 407.7 L815.8 405.6 L817.8 409.4 L817.5 412.6 L812.9 413.7 L808.5 414.9 L807.8 410.9Z M843.5 461.0 L848.0 459.7 L850.8 459.2 L852.6 463.5 L853.9 467.2 L848.7 468.0 L843.9 468.0 L842.6 465.0Z M976.0 379.6 L980.6 382.1 L986.0 383.7 L989.1 387.7 L992.7 393.6 L987.7 392.5 L983.1 392.6 L980.3 385.9Z M1098.8 459.4 L1104.7 459.9 L1109.9 460.5 L1108.3 463.7 L1108.6 466.0 L1103.3 464.6 L1099.4 464.1 L1100.2 462.0Z M1255.5 483.7 L1260.9 483.2 L1265.8 481.5 L1268.1 486.2 L1270.3 490.5 L1263.1 490.2 L1258.0 491.6 L1256.5 487.4Z M1136.3 397.1 L1141.7 397.8 L1147.2 398.4 L1145.7 400.6 L1145.4 401.1 L1141.4 401.4 L1138.4 401.9 L1137.0 399.0Z" fill="#f1efe0" fill-opacity=".8" filter="url(#bl2)"/>
<path d="M612.0 453.0 L621.0 451.0 L640.0 440.0 L656.8 431.0 L664.5 427.0 L680.0 424.0 L700.0 417.5 L709.2 410.7 L705.6 405.9 L712.8 396.2 L722.5 386.6 L732.1 380.5 L741.8 378.8 L753.9 381.7 L766.0 387.8 L780.5 395.0 L790.1 402.3 L797.4 411.9 L799.8 422.8 L804.6 437.3 L807.0 451.8 L809.5 459.0 L819.1 463.9 L830.0 473.6 L830.2 477.0 L838.1 487.6 L851.3 499.5 L611.9 499.5Z" fill="#78d2ea"/>
<path d="M761.1 457.8 L763.5 460.0 L764.0 474.0 L764.8 476.0 L767.2 485.6 L768.4 499.0 L727.3 499.0 L729.7 490.5 L734.6 480.8 L746.6 476.0 L757.5 474.8 L758.6 461.0Z" fill="#c1eeda"/>
<path d="M791.3 471.1 L797.0 469.0 L803.4 468.7 L802.0 472.0 L796.0 473.5Z" fill="#c1eeda"/>
<path d="M884.2 322.6 L891.4 315.4 L901.1 309.3 L913.2 303.3 L916.8 300.9 L925.2 303.3 L937.3 304.5 L939.7 310.5 L932.5 314.2 L933.7 323.8 L934.9 333.5 L937.3 343.2 L943.4 352.8 L949.4 354.0 L953.0 345.6 L955.5 337.0 L960.0 331.5 L963.9 329.0 L968.7 328.7 L975.0 336.0 L981.0 343.0 L985.6 348.0 L988.0 360.0 L994.1 372.1 L1000.1 384.2 L1001.3 395.1 L1002.7 399.6 L1011.0 406.8 L1021.3 415.1 L1028.5 424.4 L1031.6 429.5 L1041.9 430.6 L1050.2 431.6 L1062.6 435.7 L1072.9 441.9 L1083.2 450.2 L1091.5 457.4 L1099.7 464.6 L1108.0 470.8 L1114.2 477.0 L1120.4 481.2 L1124.5 487.3 L1122.4 499.0 L971.1 499.0 L965.8 495.5 L952.6 484.9 L944.7 471.7 L940.7 455.8 L936.7 439.9 L930.1 427.0 L920.4 420.5 L911.9 414.4 L900.0 404.0 L891.4 396.3 L884.2 386.6 L880.5 377.0 L875.7 367.3 L880.5 357.7 L886.6 350.4 L883.0 348.0 L878.1 338.3 L879.3 328.7Z" fill="#78d2ea"/>
<path d="M962.7 345.6 L965.5 345.0 L967.5 352.0 L968.0 364.9 L965.5 364.0 L964.0 355.0Z" fill="#c1eeda"/>
<path d="M970.5 337.0 L976.0 338.5 L977.5 343.5 L973.0 344.5 L970.0 341.0Z" fill="#c1eeda"/>
<path d="M985.6 367.3 L988.0 367.5 L1005.0 390.0 L1003.5 391.5Z" fill="#c1eeda"/>
<path d="M985.6 393.9 L987.5 393.9 L996.0 405.0 L994.5 406.0Z" fill="#c1eeda"/>
<path d="M994.0 380.0 L996.0 380.0 L1001.0 390.0 L999.5 390.5Z" fill="#c1eeda"/>
<path d="M1048.0 437.5 L1056.0 436.8 L1065.7 439.5 L1064.0 441.9 L1052.0 441.0Z" fill="#c1eeda"/>
<path d="M1058.4 459.5 L1068.0 460.0 L1077.0 461.8 L1076.0 463.2 L1062.0 462.6Z" fill="#c1eeda"/>
<path d="M1087.0 469.8 L1094.0 470.5 L1099.7 472.0 L1098.5 473.3 L1088.0 471.8Z" fill="#c1eeda"/>
<path d="M1034.7 455.5 L1040.9 454.3 L1040.5 457.0 L1035.0 457.4Z" fill="#c1eeda"/>
<path d="M1077.0 455.5 L1086.0 459.0 L1097.0 466.0 L1095.5 467.0 L1084.0 461.0 L1076.5 457.0Z" fill="#c1eeda"/>
<path d="M1066.0 446.5 L1074.0 447.5 L1073.5 449.0 L1066.0 448.0Z" fill="#c1eeda"/>
<path d="M612.0 318.0 L621.6 321.4 L630.6 326.1 L640.0 330.0 L650.2 331.8 L660.2 334.5 L670.4 336.7 L680.8 337.5 L690.7 340.7 L699.0 336.3 L708.5 334.9 L716.8 330.3 L725.5 326.9 L734.9 325.3 L743.2 320.8 L752.0 317.6 L762.8 317.4 L773.5 315.4 L784.3 314.8 L795.0 313.4 L805.5 314.3 L815.6 317.3 L826.0 318.7 L835.2 319.9 L844.5 319.4 L853.7 320.3 L863.0 320.0 L880.6 319.0 L888.9 315.0 L896.4 309.4 L905.0 306.0 L916.9 307.0 L928.8 306.9 L940.7 307.0 L950.1 299.1 L960.0 292.0 L972.1 286.4 L985.0 283.0 L996.2 287.3 L1008.0 290.0 L1019.3 293.7 L1030.6 297.5 L1040.2 303.1 L1049.9 308.6 L1059.9 313.3 L1070.0 318.0 L1079.6 323.7 L1090.1 327.3 L1099.7 332.9 L1110.0 337.0 L1120.0 338.5 L1129.8 341.2 L1139.9 342.7 L1150.2 342.4 L1160.0 345.0 L1169.2 345.8 L1178.1 347.7 L1186.8 351.2 L1196.0 351.6 L1204.9 353.8 L1214.0 355.2 L1220.9 363.6 L1227.0 372.6 L1233.7 381.1 L1240.0 390.0 L1245.6 398.2 L1250.5 406.8 L1255.8 415.2 L1260.5 424.0 L1266.3 432.1 L1272.0 440.2 L1280.9 446.0 L1290.3 450.8 L1300.0 455.0 L1307.0 461.0 L1315.0 465.3 L1323.3 469.2 L1330.5 474.9 L1340.2 478.3 L1350.1 481.0 L1360.0 483.4 L1370.1 485.1 L1380.0 488.0 L1390.0 490.0 L1399.0 489.6 L1408.0 491.5 L1417.0 491.2 L1426.0 490.8 L1435.0 490.6 L1444.0 492.0 M752.0 317.6 L759.1 325.0 L766.6 332.1 L775.0 338.0 L783.6 342.9 L790.6 349.9 L799.0 355.0 L809.6 359.8 L820.0 365.0 L831.0 368.6 L841.3 373.8 L841.1 384.4 L840.0 395.0 L838.0 404.8 L837.3 414.8 L839.6 423.9 L844.7 432.0 L846.6 441.3 L850.0 450.0 L854.6 459.0 L856.7 469.0 L861.2 478.1 L863.5 487.9 L868.0 497.0 M841.3 373.8 L849.7 379.6 L859.1 383.3 L868.0 388.0 L875.8 393.1 L884.9 395.6 L893.0 400.0 L902.4 406.2 L910.4 414.2 L920.0 420.1 L928.0 428.0 L932.9 435.7 L936.7 443.9 L940.5 452.1 L945.0 460.0 L950.2 469.0 L954.9 478.2 L958.4 488.0 L972.0 497.0 M742.0 378.3 L744.9 367.4 L745.6 356.0 L748.0 345.0 L750.4 336.0 L751.6 326.9 L752.0 317.6 L751.7 308.4 L751.9 299.2 L752.0 290.0 L750.7 280.7 L749.7 271.3 L748.0 262.0 L744.2 250.9 L740.0 240.0 L735.0 226.0 M690.7 340.7 L698.7 347.9 L706.7 355.1 L715.0 362.0 L723.5 368.3 L733.0 372.9 L742.0 378.3 L751.4 382.7 L760.4 387.9 L770.0 392.0 L780.3 398.0 L790.0 405.0 L801.9 417.5 L805.7 426.5 L807.6 436.2 L812.0 445.0 L816.5 453.3 L820.9 461.6 L826.5 469.2 L830.0 478.0 M826.0 318.7 L829.2 331.8 L832.0 345.0 L834.9 354.7 L839.3 363.8 L841.3 373.8 M826.0 318.7 L824.9 309.1 L823.6 299.5 L822.0 290.0 L819.6 280.1 L819.6 270.0 L818.0 260.0 L815.9 248.7 L814.4 237.3 L812.0 226.0 M801.9 417.5 L813.7 416.2 L825.5 416.2 L837.3 414.8 M1030.6 297.5 L1020.2 301.8 L1010.7 308.2 L1000.0 312.0 L989.6 317.5 L978.3 320.7 L967.7 325.6 L958.6 326.7 L950.0 330.0 L945.5 337.8 L940.0 345.0 M1030.6 297.5 L1028.1 308.2 L1025.1 318.7 L1023.1 329.5 L1020.0 340.0 L1019.8 350.0 L1019.4 360.0 L1018.8 370.0 L1018.0 380.0 L1008.6 387.3 L999.4 395.0 L1008.3 402.3 L1016.7 410.1 L1025.0 418.0 L1036.7 424.0 L1049.0 428.8 L1059.9 433.5 L1069.6 440.4 L1080.0 446.0 L1092.5 443.0 L1104.7 439.0 M1129.8 410.3 L1123.9 417.8 L1117.8 425.1 L1110.4 431.3 L1104.7 439.0 L1108.9 450.3 L1112.0 462.0 M1129.8 410.3 L1128.3 400.6 L1128.0 390.9 L1127.9 381.1 L1125.6 371.5 L1125.4 361.8 L1125.0 352.0 L1117.2 344.8 L1110.0 337.0 L1118.5 331.8 L1125.9 325.3 L1134.5 320.3 L1141.5 313.2 L1150.0 308.0 L1153.0 298.5 L1157.0 289.5 L1160.0 280.0 L1160.3 269.9 L1158.5 260.0 L1158.0 250.0 L1153.4 238.2 L1150.0 226.0 M1214.0 355.2 L1206.7 349.6 L1200.7 342.7 L1193.5 337.1 L1187.4 330.3 L1185.6 320.0 L1183.3 309.9 L1180.0 300.0 L1177.3 290.7 L1175.5 281.1 L1174.7 271.3 L1172.0 262.0 L1170.6 252.9 L1169.2 243.9 L1166.4 235.1 L1165.0 226.0 M1214.0 355.2 L1218.5 344.7 L1224.2 334.8 L1230.0 325.0 L1235.8 317.1 L1239.9 308.2 L1245.6 300.2 L1249.4 291.6 L1253.7 283.3 L1258.0 275.0 L1259.8 262.5 L1262.0 250.0 L1265.8 237.9 L1270.0 226.0 M1245.6 300.2 L1255.2 302.8 L1265.3 302.6 L1275.0 305.0 L1284.2 312.5 L1290.9 322.4 L1300.0 330.0 L1304.2 338.5 L1309.0 346.6 L1315.1 353.9 L1320.0 362.0 L1326.9 368.3 L1334.4 373.6 L1342.9 377.7 L1350.0 383.6 L1358.7 377.9 L1367.1 371.8 L1375.0 365.0 L1385.0 359.2 L1394.6 352.8 L1403.0 356.9 L1411.8 360.5 L1420.0 365.0 L1429.1 368.0 L1438.2 371.1 L1447.0 375.0 M1275.0 305.0 L1283.3 300.3 L1292.6 297.7 L1301.0 293.3 L1310.0 290.0 L1320.1 289.5 L1329.9 286.4 L1340.1 287.2 L1350.0 285.0 L1359.9 288.4 L1369.7 292.0 L1379.7 294.9 L1389.7 297.9 L1400.0 300.0 L1411.0 301.4 L1422.1 301.3 L1432.9 304.3 L1444.0 305.0 M1258.0 275.0 L1268.3 271.0 L1278.9 268.0 L1289.6 265.6 L1300.0 262.0 L1310.0 259.1 L1319.9 255.8 L1330.3 254.0 L1340.0 250.0 L1350.1 247.3 L1359.9 243.6 L1369.8 240.4 L1380.0 238.0 L1390.3 234.8 L1400.0 229.9 L1410.0 226.0 M1272.0 440.2 L1274.0 450.3 L1277.7 460.0 L1280.0 470.0 L1282.4 478.9 L1283.3 488.0 L1285.0 497.0 M1330.5 474.9 L1328.6 466.0 L1324.5 457.7 L1323.3 448.5 L1320.0 440.0 L1325.9 427.9 L1330.0 415.0 M1350.0 383.6 L1344.3 394.0 L1340.0 405.0 L1335.0 415.0 M1394.6 352.8 L1397.2 342.0 L1397.0 330.7 L1400.0 320.0 L1405.3 312.7 L1410.7 305.5 L1414.1 296.9 L1420.0 290.0 L1427.6 282.9 L1435.6 276.2 L1444.0 270.0 M1000.0 235.0 L1003.3 244.0 L1006.8 252.9 L1010.0 262.0 L1015.2 270.8 L1019.7 280.1 L1026.5 288.0 L1030.6 297.5 M1000.0 235.0 L996.0 245.5 L990.0 255.0 L989.2 264.5 L987.6 273.8 L985.0 283.0 M1000.0 235.0 L1009.9 232.7 L1020.1 233.6 L1030.1 232.1 L1040.0 230.0 L1049.8 227.0 L1060.0 226.0 M1030.6 297.5 L1038.0 291.9 L1045.0 285.9 L1052.4 280.3 L1060.0 275.0 L1067.3 268.5 L1075.2 262.8 L1082.6 256.4 L1090.0 250.0 L1099.8 243.7 L1109.6 237.4 L1120.0 232.0 L1130.0 226.0 M1164.4 489.4 L1169.3 479.5 L1175.0 470.0 L1181.8 459.5 L1190.0 450.0 L1196.4 442.6 L1202.9 435.3 L1208.5 427.3 L1215.0 420.0 L1217.4 409.7 L1220.9 399.8 L1225.0 390.0 L1222.0 381.4 L1219.7 372.5 L1217.4 363.7 L1214.0 355.2 M1129.8 410.3 L1139.8 406.6 L1150.2 404.1 L1160.0 400.0 L1170.1 395.3 L1179.9 389.9 L1190.0 385.0 L1202.4 379.7 L1215.0 375.0 M880.6 319.0 L883.7 309.3 L887.3 299.8 L890.0 290.0 L894.8 281.6 L900.4 273.6 L905.0 265.0 L913.3 256.6 L921.2 247.9 L930.0 240.0 L940.0 236.7 L950.1 233.8 L960.0 230.0 L970.1 230.2 L980.0 232.3 L990.0 233.6 L1000.0 235.0 M863.0 320.0 L858.5 328.0 L854.7 336.2 L852.0 345.0 L848.7 354.7 L844.0 363.9 L841.3 373.8 M690.7 340.7 L687.8 330.2 L683.0 320.4 L680.0 310.0 L672.4 300.1 L665.0 290.0 L659.2 283.0 L655.0 275.0 M690.7 340.7 L688.1 350.3 L686.5 360.2 L685.0 370.0 L681.6 382.3 L680.0 395.0 L684.4 405.3 L690.0 415.0 M612.0 345.0 L621.3 347.1 L630.6 348.9 L640.0 350.0 L650.0 352.6 L660.0 355.0 L669.8 349.4 L680.6 345.7 L690.7 340.7 M837.3 414.8 L846.0 417.5 L854.0 421.6 L861.5 426.8 L870.0 430.0 L880.3 432.3 L890.3 435.7 L900.0 440.0 L909.0 435.1 L919.0 432.8 L928.0 428.0 M752.0 317.6 L741.6 322.5 L731.1 326.9 L720.0 330.0 L710.0 332.8 L700.8 338.0 L690.7 340.7 M795.0 313.4 L793.3 301.5 L790.0 290.0 L793.7 280.8 L797.4 271.6 L800.0 262.0 M940.7 307.0 L948.0 318.0 L952.0 335.0 M1049.0 428.8 L1058.4 426.4 L1067.1 422.1 L1076.3 419.1 L1085.0 415.0 L1093.8 413.0 L1103.0 413.8 L1111.9 412.2 L1120.9 411.8 L1129.8 410.3 M1272.0 440.2 L1280.8 432.7 L1291.0 427.2 L1300.0 420.0 L1301.0 407.5 L1300.0 395.0 M1330.5 474.9 L1339.7 467.4 L1349.9 461.3 L1360.0 455.0 L1370.0 452.6 L1380.2 450.8 L1389.8 446.9 L1400.0 445.0 L1410.9 443.0 L1421.9 441.9 L1433.0 441.5 L1444.0 440.0 M1447.0 375.0 L1439.8 380.8 L1433.7 387.7 L1427.0 394.0 L1420.0 400.0 L1410.2 409.2 L1400.0 418.0" fill="none" stroke="#7ea6d4" stroke-opacity=".55" stroke-width="1" stroke-linejoin="round"/>
<path d="M1083.2 242.8 L1095.0 237.0 L1108.0 231.5 L1119.2 227.2" fill="none" stroke="#78d2ea" stroke-width="2.600" stroke-linecap="round"/>
<path d="M812.5 313.0 L813.5 308.0 L815.0 304.0 L815.8 308.0 L814.5 313.5Z M743.0 289.0 L744.0 284.0 L745.5 280.0 L745.8 285.0 L744.5 290.0Z M761.0 290.0 L763.0 285.0 L764.5 282.0 L764.5 287.0 L762.5 291.0Z M612.0 262.0 L620.0 259.0 L628.0 258.0 L634.0 256.0 L630.0 261.0 L620.0 264.0Z M876.0 368.0 L879.0 366.0 L880.0 371.0 L877.0 372.0Z" fill="#78d2ea"/>
<path d="M1140.3 356.3 L1140.3 364.3 L1140.2 372.3 L1140.1 380.3 L1141.5 388.2 L1145.4 395.1 L1150.0 401.7 L1154.2 408.5 L1160.2 413.8 M1272.4 289.2 L1270.5 296.9 L1267.3 304.3 L1262.4 310.6 M1124.4 235.3 L1122.6 243.1 L1118.5 249.9 L1115.0 257.1 L1113.3 264.9 L1110.0 272.2 L1108.6 280.1 M1384.0 349.3 L1376.4 346.8 L1368.5 346.0 L1360.7 347.8 L1352.7 347.6 L1344.8 348.8 M1261.2 282.7 L1269.2 282.6 L1277.1 283.9 L1284.9 285.7 L1292.3 288.7 L1300.2 289.6 L1308.2 290.4 L1315.8 293.0 L1323.7 294.0 M1380.1 467.4 L1373.5 471.9 L1367.3 477.0 L1359.7 479.6 L1352.4 482.9 L1346.5 488.3 M1438.0 360.9 L1430.1 360.0 L1422.1 360.5 L1414.1 360.5 L1406.1 360.2 L1398.2 359.2 L1390.2 359.9 M753.5 320.7 L760.9 317.7 L767.8 313.7 L773.4 307.9 L777.0 300.7 L782.0 294.5 M1258.5 328.0 L1257.4 320.0 L1258.8 312.2 L1259.7 304.2 L1263.3 297.1 L1268.9 291.4 L1274.9 286.1 L1282.1 282.5 M1020.4 328.2 L1022.4 335.9 L1026.7 342.7 L1029.3 350.2 L1030.5 358.1 L1031.8 366.0 L1031.2 374.0 L1033.1 381.8 L1036.3 389.1 M853.2 340.1 L857.8 346.7 L860.4 354.2 L860.3 362.2 M1232.5 356.3 L1232.3 364.3 L1230.8 372.1 L1231.9 380.1 L1234.5 387.6 L1235.4 395.6 L1234.5 403.5 L1231.6 411.0 L1228.2 418.2 L1225.2 425.6 M1251.2 228.8 L1245.8 222.9 L1240.8 216.6 L1236.5 209.9 L1233.9 202.3 L1231.8 194.6 L1228.4 187.4 L1224.5 180.4 L1223.0 172.5 L1223.8 164.6 M723.1 251.8 L729.9 256.0 L737.5 258.4 L744.3 262.6 M1157.2 260.4 L1149.5 258.5 L1141.5 258.2 L1133.6 259.7 L1126.3 262.9 L1119.3 266.7 M1202.7 375.6 L1209.5 379.8 L1215.4 385.2 L1220.1 391.7 L1226.7 396.3 L1233.4 400.6 L1241.1 402.8 L1248.2 406.3 M822.4 415.5 L819.9 423.1 L818.4 431.0 L814.8 438.1 M857.5 362.8 L849.5 362.6 L841.5 361.8 L833.6 361.0 L825.8 358.8 L819.2 354.4 L812.1 350.8 L805.5 346.2 L799.0 341.6 L792.7 336.6 M1424.7 322.6 L1423.5 330.5 L1424.7 338.4 L1428.1 345.7 L1429.8 353.5 L1430.2 361.5 L1430.8 369.4 L1430.7 377.4 L1433.3 385.0 L1435.1 392.8 M1197.9 448.3 L1195.1 440.8 L1191.8 433.5 L1188.4 426.3 L1185.7 418.7 L1185.5 410.8 M683.1 356.5 L675.3 354.7 L667.9 351.5 L660.9 347.6 L654.8 342.5 L649.2 336.7 L645.3 329.8 L642.4 322.3 M1180.2 292.7 L1187.5 289.3 L1195.3 287.6 L1203.2 288.4 L1210.4 291.9 L1218.4 292.8 M872.1 310.8 L865.7 315.6 L861.0 322.1 L857.2 329.1 L851.5 334.7 M1229.6 351.8 L1235.1 357.6 L1241.6 362.3 L1248.6 366.1 L1255.2 370.6 L1261.2 375.9 L1268.0 380.2 L1273.1 386.3 L1278.9 391.8 L1285.6 396.2 M1315.3 267.7 L1312.5 260.3 L1308.5 253.3 L1304.0 246.7 L1301.6 239.1 M1411.4 235.4 L1415.4 228.4 L1416.9 220.6 L1418.3 212.7 L1417.3 204.8 L1416.8 196.8 L1417.4 188.8 L1416.6 180.9 L1413.2 173.6 M1064.9 251.7 L1060.1 258.1 L1055.9 264.9 L1053.5 272.5 L1049.7 279.5 L1044.3 285.5 M1052.5 239.4 L1055.3 246.9 L1059.4 253.7 L1062.1 261.2 L1062.8 269.2 L1061.2 277.0 M1347.1 230.8 L1341.5 225.1 L1337.0 218.5 L1333.7 211.2 M768.7 242.2 L772.5 235.2 L776.1 228.1 L781.2 221.9 L785.5 215.1 L788.7 207.8 L791.1 200.2 M859.9 396.6 L864.3 389.9 L868.7 383.2 L873.9 377.1 M769.9 299.4 L777.4 302.3 L784.4 306.0 L791.0 310.6 M743.6 254.3 L750.6 250.5 L758.1 247.6 L765.9 246.0 L773.8 244.5 L780.9 240.8 L788.6 238.8 M789.8 237.0 L784.5 243.0 L780.6 250.0 L775.7 256.3 L770.9 262.7 L767.7 270.0 L762.9 276.4 M1283.2 472.5 L1281.2 464.8 L1281.5 456.8 L1282.0 448.8 L1284.6 441.3 M1419.2 332.1 L1427.1 330.8 L1434.1 327.0 L1440.7 322.4 L1447.6 318.4 L1454.8 314.9 L1462.5 312.8 L1470.4 311.4 L1477.7 308.3 M1386.4 371.9 L1393.8 368.8 L1401.3 366.0 L1409.2 364.7 L1417.2 364.7 M1346.5 324.6 L1354.1 326.9 L1361.7 329.4 L1368.6 333.6 L1375.8 337.0 L1383.6 338.5 M634.5 341.0 L628.0 336.4 L620.6 333.1 L612.7 332.0 M1383.8 368.3 L1388.7 361.9 L1392.3 354.7 L1395.5 347.4 L1399.4 340.4 L1404.5 334.3 L1410.7 329.2 M1153.4 294.8 L1146.2 298.3 L1139.7 302.8 L1133.0 307.3 L1126.5 311.9 L1121.7 318.3 M1296.6 385.5 L1300.4 378.5 L1306.4 373.1 L1311.9 367.3 L1316.9 361.0 L1319.5 353.5 L1322.9 346.3 L1326.8 339.2 M775.8 287.8 L775.0 279.9 L771.7 272.6 L767.7 265.6 L765.5 257.9 L763.2 250.3 L760.8 242.6 L757.7 235.2 L755.4 227.6 M1109.9 414.5 L1114.7 408.1 L1118.3 400.9 L1123.2 394.6 L1129.3 389.4 L1136.6 386.2 L1143.1 381.6 L1150.6 378.7 M1353.0 247.0 L1352.0 254.9 L1349.3 262.5 L1347.9 270.3 L1345.4 277.9 L1344.1 285.8 L1344.3 293.8 L1346.1 301.6 M1152.2 326.1 L1157.1 332.4 L1161.2 339.3 L1165.6 346.0 L1171.6 351.3 M1344.6 404.1 L1352.5 405.7 L1360.4 407.0 L1368.3 408.2 L1375.3 412.0 L1382.7 415.0 L1389.8 418.8 L1396.4 423.2 M1240.1 398.9 L1233.0 402.5 L1225.3 404.6 L1218.6 409.1 L1211.6 412.9 L1204.7 416.9 L1198.7 422.2 M1100.2 384.6 L1107.8 387.0 L1114.8 391.0 L1122.1 394.1 L1129.8 396.3 L1137.8 397.0 L1145.6 395.1 M767.3 267.3 L760.6 262.8 L753.0 260.4 L745.5 257.7 L737.5 257.2 L729.5 257.2 L721.6 255.7 L713.6 255.9 L705.7 255.0 M1060.2 249.1 L1062.8 256.7 L1066.9 263.6 L1070.6 270.6 L1072.7 278.4 L1074.6 286.1 L1075.7 294.1 M619.5 308.3 L617.0 315.9 L612.9 322.8 L611.3 330.6 L609.7 338.5 L606.1 345.6 L601.1 351.9 L595.9 357.9 L592.1 364.9 M1382.6 247.7 L1390.6 247.2 L1398.6 246.8 L1406.3 244.6 L1413.7 241.5 L1421.4 239.3 L1429.2 238.0 L1437.0 236.0 M1278.6 240.5 L1277.7 248.5 L1275.2 256.1 L1271.4 263.1 M736.3 309.9 L742.6 314.8 L749.7 318.5 L757.1 321.5 L763.5 326.3 L770.1 330.8 L776.1 336.1 L781.6 341.9 M886.6 276.7 L892.5 271.3 L896.2 264.2 L898.5 256.5 L902.7 249.7 L906.0 242.4 M1167.0 288.7 L1163.4 281.5 L1160.0 274.3 L1156.0 267.4 L1151.0 261.1 L1146.4 254.6 M1304.1 414.1 L1296.2 412.9 L1288.8 409.9 L1280.9 408.7 L1273.2 406.6 L1266.0 403.1 M1174.3 488.3 L1181.6 485.1 L1188.5 481.0 L1195.0 476.4 L1202.7 474.2 M751.2 333.6 L744.7 328.9 L739.3 322.9 L734.4 316.6 L730.7 309.5 M1269.2 463.2 L1276.8 460.6 L1284.3 458.0 L1292.2 456.4 L1300.0 455.0 L1308.0 456.1 L1315.7 458.1 L1323.5 459.8 L1331.1 462.3 M857.3 261.2 L853.4 268.2 L851.7 276.0 L850.1 283.9 M1247.1 239.2 L1241.9 233.1 L1235.9 227.8 L1229.7 222.7 M1204.3 338.4 L1199.7 345.0 L1195.7 351.9 L1190.8 358.2 L1184.6 363.3 L1177.1 366.0 L1170.1 369.9 L1162.8 373.2 M872.1 416.9 L875.9 409.9 L881.7 404.3 L886.8 398.2 M1138.0 448.6 L1139.3 456.5 L1141.5 464.2 L1145.4 471.2 L1150.1 477.7 L1155.9 483.2 L1163.2 486.4 L1169.7 491.1 L1177.1 494.2 M1088.9 376.7 L1094.1 370.7 L1097.8 363.6 L1102.7 357.3 L1105.7 349.8 L1110.7 343.6 L1114.8 336.8 L1117.8 329.3 L1119.1 321.4 M1323.3 428.9 L1321.3 421.2 L1318.2 413.8 L1314.8 406.6 L1313.4 398.7 M1440.6 248.8 L1448.4 246.8 L1456.3 245.9 L1464.3 246.6 L1472.2 245.5 L1480.2 245.0 L1487.9 247.3 L1494.7 251.5 L1500.1 257.4 M1281.2 422.5 L1289.2 422.1 L1297.2 422.4 L1305.2 423.5 L1313.0 422.1 L1321.0 423.2 M1415.1 345.9 L1408.2 341.8 L1401.1 338.1 L1393.8 334.8 L1387.2 330.3 L1379.8 327.3 M860.2 433.7 L859.1 441.6 L860.0 449.6 L861.3 457.5 M872.8 297.2 L869.9 304.6 L866.8 312.0 L866.1 320.0 L867.8 327.8 L871.0 335.1 L875.6 341.7 M896.2 305.2 L900.2 298.3 L905.4 292.3 L911.4 287.0 L916.7 281.0 L922.4 275.4 L929.0 270.9 L935.7 266.5 M1238.1 398.1 L1245.7 395.5 L1253.7 395.5 L1261.7 395.7 L1269.3 398.1 M708.3 305.7 L716.2 304.3 L724.2 304.0 L732.2 303.8 L740.2 303.9 M1419.2 438.5 L1420.3 446.5 L1420.4 454.5 L1419.5 462.4 L1419.9 470.4 L1419.2 478.4 M970.8 230.2 L970.4 238.1 L969.0 246.0 L965.1 253.0 L959.3 258.5 L953.0 263.4 M1325.2 359.7 L1317.4 357.9 L1309.5 356.7 L1301.5 356.3 L1293.5 356.8 L1285.6 357.7 L1278.3 361.0 L1270.6 363.3 L1262.6 363.1 M806.8 276.5 L804.2 284.1 L800.1 291.0 L797.7 298.6 L794.9 306.1 L790.9 313.0 L786.1 319.4 L783.3 326.9 L778.3 333.2 M1317.5 356.8 L1321.0 349.6 L1324.0 342.2 L1328.6 335.7 L1333.0 329.0 L1335.1 321.2 L1335.3 313.3 M766.9 385.4 L761.6 379.5 L758.4 372.1 L754.4 365.2 L751.3 357.8 L746.7 351.2 M1039.7 274.9 L1046.9 278.3 L1054.4 281.1 L1061.6 284.7 L1068.6 288.5 L1074.7 293.7 M1009.1 248.9 L1009.4 240.9 L1012.2 233.4 L1015.2 226.0 L1016.9 218.2 L1017.8 210.2 M1026.8 312.8 L1032.7 318.2 L1037.2 324.8 L1040.5 332.1 L1041.7 340.0 L1041.2 348.0 M1201.0 298.2 L1193.1 297.9 L1185.1 298.1 L1177.2 296.6 L1170.1 293.0 M1259.0 329.4 L1252.9 334.6 L1248.1 341.0 L1243.9 347.8 L1238.5 353.6 L1232.0 358.4 L1226.4 364.1 L1221.0 370.0 L1214.0 373.9 L1208.4 379.6 M728.1 374.7 L735.6 371.9 L743.2 369.4 L751.2 369.3 L759.2 369.4 M1237.9 265.5 L1242.9 259.2 L1249.6 254.8 L1256.2 250.4 L1262.6 245.6 L1268.0 239.7 M841.8 282.1 L847.7 287.5 L853.2 293.3 L858.3 299.4 L862.3 306.4 L866.0 313.5 L867.5 321.3 L870.1 328.9 M1156.1 232.8 L1149.4 228.5 L1142.9 223.9 L1136.6 218.9 M874.1 418.0 L872.6 410.1 L869.8 402.6 L867.7 394.9 L863.3 388.2 L860.1 380.9 L855.9 374.0 L852.9 366.6 L848.1 360.3 M1109.1 272.0 L1116.2 275.6 L1123.6 278.7 L1131.0 281.9 L1137.5 286.5 M1426.0 296.5 L1424.8 288.6 L1422.8 280.8 L1420.7 273.1 L1420.1 265.1 L1418.2 257.4 L1416.1 249.6 L1414.8 241.7 L1415.5 233.8 M814.8 407.0 L816.6 414.8 L817.5 422.7 L817.7 430.7 L815.4 438.4 M748.7 370.2 L740.8 368.9 L732.8 369.6 L725.1 371.6 L718.4 375.9 M1147.5 404.9 L1148.1 412.9 L1150.3 420.6 L1150.1 428.6 L1147.9 436.3 L1146.7 444.2 L1143.6 451.5 L1142.4 459.4 L1142.2 467.4 M860.6 330.9 L864.3 338.0 L866.3 345.7 L869.1 353.2 L871.6 360.8 L872.1 368.8 L873.9 376.6 L875.5 384.4 L876.3 392.4 M1092.6 336.8 L1086.4 331.8 L1078.8 329.2 L1071.5 326.0 L1064.3 322.5 L1058.0 317.6 M1303.8 367.2 L1297.4 372.0 L1290.0 375.1 L1282.6 378.0 L1276.5 383.2 L1270.4 388.4 L1263.0 391.5 L1255.0 392.0 M966.7 298.2 L972.6 292.8 L977.5 286.5 L982.2 280.0 L987.7 274.2 M667.7 316.9 L664.8 309.5 L663.1 301.7 L661.0 293.9 L660.0 286.0 L658.8 278.1 M1288.0 365.3 L1296.0 365.3 L1304.0 365.2 L1311.9 365.7 L1319.9 365.6 L1327.6 363.1 L1335.5 362.8 L1343.4 364.1 L1350.9 366.9 M1326.8 375.8 L1334.5 378.2 L1342.5 378.3 L1350.4 377.7 L1358.4 377.5 L1366.3 379.0 L1374.1 380.7 M1269.5 327.7 L1266.4 320.3 L1261.2 314.3 L1256.5 307.7 L1250.0 303.2 L1242.8 299.5 L1235.0 298.0 L1227.6 295.0 L1219.7 293.8 M1210.4 245.7 L1210.2 253.7 L1212.3 261.4 L1213.9 269.2 L1215.9 276.9 L1217.4 284.8 L1221.0 291.9 L1226.9 297.4 M1148.6 319.8 L1150.8 312.1 L1153.7 304.7 L1159.0 298.6 L1165.3 293.7 L1170.0 287.2 M759.3 323.2 L753.8 329.0 L748.1 334.6 L742.6 340.4 L738.0 346.9 L732.7 352.9 L727.7 359.2 L720.9 363.4 M1142.1 350.8 L1148.2 356.0 L1154.8 360.5 L1160.7 365.9 L1166.5 371.5 L1173.6 375.2 L1179.5 380.5 L1186.1 385.1 M1340.8 458.3 L1337.0 465.3 L1333.0 472.2 L1329.3 479.3 L1323.9 485.2 L1317.6 490.2 L1310.8 494.4 L1303.3 497.2 L1296.1 500.7" fill="none" stroke="#7ea6d4" stroke-opacity=".38" stroke-width=".9" stroke-linejoin="round"/>
<path d="M652.0 226.0 L652.8 230.6 L653.6 235.3 L653.5 240.0 L653.5 244.5 L654.8 248.8 L654.2 253.3 L654.7 257.8 L655.5 262.2 L654.9 266.7 L655.2 271.1 L654.7 277.6 L658.8 283.6 L663.6 289.6 L661.2 294.4 L667.2 292.0 L674.4 290.8 L681.6 288.9 L688.8 287.2 L696.0 286.0 L700.0 284.0 L704.4 283.6 L709.2 277.6 L709.9 271.1 L710.8 266.5 L712.0 262.0 L715.6 264.5 L718.7 267.5 L721.2 271.1 L724.3 274.3 L727.2 277.6 L731.1 280.5 L735.6 282.4 L738.0 285.7 L739.2 289.6 L742.8 295.6 L746.4 295.1 L745.2 287.2 L746.6 283.4 L748.8 280.0 L752.5 277.2 L756.0 274.0 L758.4 271.1 L761.9 267.0 L764.0 262.0 L766.8 258.1 L769.2 253.9 L772.0 250.0 L774.8 246.4 L775.3 241.6 L778.0 238.0 L779.3 234.1 L779.0 229.9 L780.0 226.0 M661.2 294.4 L661.2 299.9 L660.0 305.2 L662.4 308.5 L663.6 312.4 L668.4 318.4 L669.6 324.4 L664.8 330.4 L661.4 332.5 L657.6 334.0 L653.7 335.3 L650.4 337.6 L651.6 341.7 L651.6 346.0 L653.9 349.7 L656.4 353.2 L659.9 355.8 L663.6 358.0 L664.8 362.0 L662.0 365.2 L658.8 368.0 L658.1 372.2 L657.6 376.4 L661.3 380.8 L663.6 386.0 L668.8 388.3 L673.2 392.0 L678.7 392.1 L684.0 393.2 L691.2 392.0 L691.2 399.2 L686.4 405.2 L684.0 410.0 M780.0 226.0 L783.5 230.8 L787.6 232.3 L791.9 233.2 L795.4 231.3 L799.1 229.6 L803.9 226.0 M806.0 228.0 L808.7 230.8 L815.9 233.2 L820.0 233.2 L826.0 231.0 L830.6 230.0 L835.4 229.8 L840.0 229.0 L844.0 228.5 L848.0 227.8 L852.1 228.3 L856.0 227.8 L860.0 227.0 L865.8 226.0 L871.6 226.0 M871.6 226.0 L873.3 229.7 L875.2 233.2 L878.8 237.4 L882.4 241.6 L886.1 244.2 L890.2 246.0 L894.4 247.6 L899.3 248.4 L903.8 250.8 L908.8 251.2 L913.7 251.3 L918.4 252.7 L923.2 253.6 L927.9 254.9 L932.9 254.6 L937.6 256.0 L941.6 256.4 L945.7 256.0 L949.6 257.2 L954.3 258.7 L959.2 259.6 L964.1 260.5 L969.0 260.5 L973.7 259.6 L978.4 258.4 L982.0 256.5 L984.6 253.3 L988.0 251.2 L992.9 250.3 L997.6 248.8 L1001.6 248.6 L1005.6 248.1 L1009.6 247.6 L1014.4 245.1 L1019.2 242.8 L1023.8 242.2 L1028.0 240.4 L1032.8 236.8 L1040.0 235.6 L1044.8 233.2 L1046.0 226.0 M937.6 256.0 L932.8 259.6 L928.7 262.0 L925.6 265.6 L925.6 270.4 L931.6 275.2 L934.0 282.4 L929.2 286.0 L932.8 292.0 L936.0 298.0 L940.0 304.0 L944.8 307.6 L942.4 311.2 L935.2 313.6 L932.8 317.2 L937.6 317.8 L942.4 318.4 L949.6 316.0 L954.4 318.4 L958.0 317.0 L961.6 313.6 L965.3 312.1 L968.8 310.0 L973.6 306.4 L977.2 311.2 L983.2 308.8 L987.4 311.8 L990.4 316.0 L997.6 318.4 L1004.8 316.0 L1006.0 308.8 L1002.4 302.8 L1006.2 300.7 L1009.6 298.0 L1014.5 296.4 L1019.2 294.4 L1019.2 289.6 L1020.0 283.0 L1021.5 277.6 L1025.4 275.3 L1028.0 271.6 L1031.6 268.8 L1034.1 264.9 L1037.6 262.0 L1042.4 256.0 L1047.1 254.0 L1052.0 252.4 M1044.8 233.2 L1045.7 238.1 L1047.2 242.8 L1050.4 247.2 L1052.0 252.4 L1055.7 256.6 L1059.2 260.8 L1063.8 263.9 L1067.6 268.0 L1072.3 271.7 L1076.0 276.4 L1080.2 280.1 L1083.2 284.8 L1087.7 288.2 L1092.8 290.8 L1097.0 291.8 L1101.0 293.6 L1104.8 295.6 L1108.8 296.2 L1112.7 297.9 L1116.8 298.0 L1121.7 297.6 L1126.4 298.7 L1131.2 299.2 L1136.1 295.7 L1140.8 292.0 L1148.0 292.0 L1153.2 289.0 L1157.6 284.8 L1162.5 284.2 L1167.2 282.4 L1172.3 280.0 L1176.8 276.4 L1181.6 276.0 L1186.4 276.4 L1191.2 276.8 L1196.0 277.6 L1200.8 277.3 L1205.6 277.6 L1209.7 277.5 L1213.8 276.8 L1217.6 275.2 L1222.4 274.6 L1227.2 275.2 L1231.4 273.4 L1236.0 272.8 L1240.5 270.7 L1245.2 269.1 L1250.0 268.0 L1254.0 266.0 L1258.1 264.1 L1262.0 262.0 M1148.0 292.0 L1149.6 297.3 L1150.4 302.8 L1152.5 307.4 L1152.8 312.4 L1157.6 317.2 L1154.0 322.0 L1158.3 324.9 L1162.4 328.0 L1166.7 329.6 L1170.8 331.6 L1164.8 334.0 L1158.8 336.4 L1158.1 340.6 L1157.6 344.8 L1162.4 348.4 L1167.2 353.2 L1167.0 357.7 L1168.4 362.0 L1166.0 362.0 L1163.3 365.4 L1161.2 369.2 L1160.6 374.0 L1160.0 378.8 L1162.2 382.5 L1164.8 386.0 L1169.4 389.3 L1174.4 392.0 L1177.5 395.2 L1179.2 399.2 L1172.0 401.6 L1168.1 402.8 L1164.8 405.2 L1166.7 410.2 L1169.6 414.8 L1171.4 419.3 L1174.4 423.2 L1167.2 425.6 M1157.6 344.8 L1153.6 344.3 L1149.6 345.0 L1145.6 344.8 L1143.2 340.0 L1138.4 339.6 L1133.6 338.8 L1128.7 338.9 L1124.0 337.6 L1119.2 336.8 L1114.4 336.4 L1109.8 338.4 L1104.8 338.8 L1100.6 338.8 L1096.7 337.7 L1092.8 336.4 L1088.7 336.2 L1084.7 335.1 L1080.8 334.0 L1075.7 333.0 L1071.2 330.4 L1066.5 331.9 L1061.6 331.6 L1057.1 334.6 L1052.0 336.4 L1050.2 340.4 L1047.2 343.6 L1042.4 338.8 L1038.6 336.0 L1035.2 332.8 L1028.0 331.6 L1022.0 334.0 L1018.0 340.0 L1019.8 343.8 L1020.0 348.0 L1021.4 351.8 L1024.0 355.0 L1027.0 358.6 L1030.4 362.0 L1033.4 366.5 L1035.2 371.6 L1036.8 375.5 L1037.9 379.5 L1038.8 383.6 L1040.8 388.3 L1042.4 393.2 L1046.1 395.9 L1048.4 400.0 L1052.0 402.8 L1054.5 407.0 L1058.4 410.0 L1061.6 413.6 L1064.8 416.8 L1068.5 419.5 L1071.2 423.2 L1074.9 425.5 L1077.8 428.6 L1080.8 431.6 L1086.8 436.4 L1087.8 440.5 L1088.0 444.8 L1091.9 448.3 L1096.4 450.8 L1098.7 454.1 L1100.0 458.0 L1096.4 460.4 L1100.8 460.8 L1104.8 462.8 L1107.8 467.0 L1112.0 470.0 L1116.8 473.6 L1121.6 477.2 L1126.6 478.4 L1131.2 480.8 L1138.4 481.3 M1138.4 481.3 L1138.9 476.7 L1138.4 472.1 L1139.6 467.6 L1139.7 463.6 L1140.5 459.6 L1139.6 455.6 L1141.0 451.7 L1141.5 447.7 L1142.0 443.6 L1146.0 440.8 L1150.4 438.8 L1157.6 436.4 L1154.4 433.6 L1151.6 430.4 L1158.8 428.0 L1162.8 426.2 L1167.2 425.6 M1167.2 425.6 L1169.2 430.0 L1172.0 434.0 L1175.2 437.2 L1178.0 440.8 L1181.6 443.6 L1185.0 446.2 L1188.3 448.8 L1191.2 452.0 L1195.7 455.5 L1200.8 458.0 L1203.9 461.1 L1208.0 462.8 L1210.4 466.4 L1205.4 467.6 L1200.8 470.0 L1196.0 473.6 L1197.3 477.4 L1199.6 480.8 L1202.1 485.3 L1205.6 489.2 L1207.6 493.8 L1210.4 498.0 M1196.0 473.6 L1192.6 475.8 L1188.8 477.2 L1185.3 479.2 L1181.6 480.8 L1178.6 485.6 L1174.4 489.2 L1172.1 494.1 L1168.4 498.0 M1138.4 481.3 L1136.0 484.9 L1133.0 488.0 L1128.0 492.0 L1124.5 494.0 M1205.6 277.6 L1209.5 281.5 L1212.8 286.0 L1216.2 288.7 L1220.0 290.8 L1222.3 296.0 L1226.0 300.4 L1226.5 304.4 L1226.0 308.5 L1227.2 312.4 L1228.8 317.6 L1232.0 322.0 L1236.0 324.4 L1243.2 326.8 L1249.2 331.6 L1252.3 334.7 L1256.4 336.4 L1254.8 340.1 L1252.8 343.6 L1255.6 346.9 L1257.6 350.8 L1254.3 354.2 L1250.4 356.8 L1254.3 359.0 L1257.6 362.0 L1260.0 362.0 L1264.1 362.3 L1268.0 363.8 L1272.0 364.4 L1279.0 367.0 L1281.6 372.6 L1286.5 368.0 L1292.0 363.5 L1297.0 362.5 L1302.0 365.6 L1306.8 370.4 L1299.6 372.8 L1297.2 378.8 L1299.0 382.8 L1302.0 386.0 L1305.6 390.8 M1305.6 390.8 L1308.9 393.1 L1312.8 394.4 L1318.8 398.0 L1312.8 401.6 L1311.6 407.6 L1317.6 412.4 L1322.4 412.0 L1327.2 411.9 L1332.0 411.2 L1335.9 412.1 L1340.1 411.3 L1344.0 412.4 L1347.9 413.9 L1351.8 415.5 L1356.0 416.0 L1359.9 417.3 L1363.9 418.0 L1368.0 418.4 L1372.0 417.6 L1375.9 416.2 L1380.0 416.0 L1383.9 417.3 L1388.1 417.3 L1392.0 418.4 L1395.9 419.3 L1399.9 420.0 L1404.0 419.6 L1408.1 420.6 L1412.1 421.8 L1416.0 423.2 L1420.2 423.2 L1424.1 422.0 L1428.0 420.8 L1431.3 417.9 L1435.2 416.0 L1440.0 410.0 L1444.0 406.4 M1305.6 390.8 L1303.8 394.8 L1300.8 398.0 L1297.5 400.4 L1293.6 401.6 L1292.3 405.7 L1292.4 410.0 L1292.7 414.1 L1294.6 417.9 L1294.8 422.0 L1296.7 427.1 L1299.6 431.6 L1303.3 435.3 L1308.0 437.6 L1311.4 442.0 L1315.2 446.0 L1316.1 450.2 L1316.4 454.4 L1312.7 457.3 L1309.2 460.4 L1305.3 462.8 L1300.8 464.0 L1296.0 467.6 L1296.3 472.5 L1294.8 477.2 L1294.6 481.5 L1296.0 485.6" fill="none" stroke="#363a38" stroke-width="1.350" stroke-linejoin="round" stroke-linecap="round"/>
<path d="M1210.4 466.4 L1215.2 465.3 L1220.0 464.0 L1223.6 458.0 L1221.8 454.4 L1220.0 450.8 L1224.8 446.0 L1232.0 444.8 L1236.0 448.4 L1236.0 450.8 L1239.4 453.6 L1243.2 455.6 L1245.7 459.2 L1248.0 462.8 L1250.7 466.1 L1254.0 468.8 L1258.0 472.1 L1262.4 474.8 L1267.2 477.2 L1264.8 484.4 L1262.0 490.0" fill="none" stroke="#363a38" stroke-width="1.300" stroke-dasharray="4.200 2.400"/>
<circle cx="752.0" cy="317.6" r="2.500" fill="#fff" stroke="#555" stroke-width="1.100"/>
<circle cx="690.7" cy="340.7" r="2.500" fill="#fff" stroke="#555" stroke-width="1.100"/>
<circle cx="795.0" cy="313.4" r="2.500" fill="#fff" stroke="#555" stroke-width="1.100"/>
<circle cx="826.0" cy="318.7" r="2.500" fill="#fff" stroke="#555" stroke-width="1.100"/>
<circle cx="880.6" cy="319.0" r="2.500" fill="#fff" stroke="#555" stroke-width="1.100"/>
<circle cx="863.0" cy="320.0" r="2.500" fill="#fff" stroke="#555" stroke-width="1.100"/>
<circle cx="799.0" cy="355.0" r="2.500" fill="#fff" stroke="#555" stroke-width="1.100"/>
<circle cx="841.3" cy="373.8" r="2.500" fill="#fff" stroke="#555" stroke-width="1.100"/>
<circle cx="742.0" cy="378.3" r="2.500" fill="#fff" stroke="#555" stroke-width="1.100"/>
<circle cx="801.9" cy="417.5" r="2.500" fill="#fff" stroke="#555" stroke-width="1.100"/>
<circle cx="837.3" cy="414.8" r="2.500" fill="#fff" stroke="#555" stroke-width="1.100"/>
<circle cx="958.4" cy="488.0" r="2.500" fill="#fff" stroke="#555" stroke-width="1.100"/>
<circle cx="999.4" cy="395.0" r="2.500" fill="#fff" stroke="#555" stroke-width="1.100"/>
<circle cx="1049.0" cy="428.8" r="2.500" fill="#fff" stroke="#555" stroke-width="1.100"/>
<circle cx="1073.0" cy="441.8" r="2.500" fill="#fff" stroke="#555" stroke-width="1.100"/>
<circle cx="1104.7" cy="439.0" r="2.500" fill="#fff" stroke="#555" stroke-width="1.100"/>
<circle cx="1272.0" cy="440.2" r="2.500" fill="#fff" stroke="#555" stroke-width="1.100"/>
<circle cx="1350.0" cy="383.6" r="2.500" fill="#fff" stroke="#555" stroke-width="1.100"/>
<circle cx="1394.6" cy="352.8" r="2.500" fill="#fff" stroke="#555" stroke-width="1.100"/>
<circle cx="1245.6" cy="300.2" r="2.500" fill="#fff" stroke="#555" stroke-width="1.100"/>
<circle cx="1187.4" cy="330.3" r="2.500" fill="#fff" stroke="#555" stroke-width="1.100"/>
<circle cx="940.7" cy="307.0" r="2.500" fill="#fff" stroke="#555" stroke-width="1.100"/>
<circle cx="967.7" cy="325.6" r="2.500" fill="#fff" stroke="#555" stroke-width="1.100"/>
<circle cx="943.3" cy="352.0" r="2.500" fill="#fff" stroke="#555" stroke-width="1.100"/>
<circle cx="627.2" cy="274.5" r="2.500" fill="#fff" stroke="#555" stroke-width="1.100"/>
<circle cx="1439.5" cy="343.5" r="2.500" fill="#fff" stroke="#555" stroke-width="1.100"/>
<circle cx="1439.0" cy="411.0" r="2.500" fill="#fff" stroke="#555" stroke-width="1.100"/>
<circle cx="1248.5" cy="275.6" r="2.500" fill="#fff" stroke="#555" stroke-width="1.100"/>
<circle cx="1129.8" cy="410.3" r="2.800" fill="#fff" stroke="#222" stroke-width="1.100"/><circle cx="1129.8" cy="410.3" r="1.300" fill="#222"/>
<circle cx="1164.4" cy="489.4" r="2.800" fill="#fff" stroke="#222" stroke-width="1.100"/><circle cx="1164.4" cy="489.4" r="1.300" fill="#222"/>
<circle cx="1330.5" cy="474.9" r="2.800" fill="#fff" stroke="#222" stroke-width="1.100"/><circle cx="1330.5" cy="474.9" r="1.300" fill="#222"/>
<circle cx="1214.0" cy="355.2" r="2.800" fill="#fff" stroke="#222" stroke-width="1.100"/><circle cx="1214.0" cy="355.2" r="1.300" fill="#222"/>
<circle cx="1030.6" cy="297.5" r="2.800" fill="#fff" stroke="#222" stroke-width="1.100"/><circle cx="1030.6" cy="297.5" r="1.300" fill="#222"/>
<text x="737.6" y="310.9" font-size="12.5" font-weight="400" fill="#454a48" textLength="30.4" lengthAdjust="spacingAndGlyphs" stroke="#fff" stroke-width="2.400" stroke-opacity=".9" stroke-linejoin="round" paint-order="stroke" >Milan</text>
<text x="737.6" y="310.9" font-size="12.5" font-weight="400" fill="#454a48" stroke="#454a48" stroke-width="0.28" textLength="30.4" lengthAdjust="spacingAndGlyphs" >Milan</text>
<text x="677.0" y="336.4" font-size="12.5" font-weight="400" fill="#454a48" textLength="29.0" lengthAdjust="spacingAndGlyphs" stroke="#fff" stroke-width="2.400" stroke-opacity=".9" stroke-linejoin="round" paint-order="stroke" >Turin</text>
<text x="677.0" y="336.4" font-size="12.5" font-weight="400" fill="#454a48" stroke="#454a48" stroke-width="0.28" textLength="29.0" lengthAdjust="spacingAndGlyphs" >Turin</text>
<text x="778.6" y="325.8" font-size="10.5" font-weight="400" fill="#454a48" textLength="32.2" lengthAdjust="spacingAndGlyphs" stroke="#fff" stroke-width="2.400" stroke-opacity=".9" stroke-linejoin="round" paint-order="stroke" >Brescia</text>
<text x="810.8" y="314.4" font-size="10.5" font-weight="400" fill="#454a48" textLength="31.2" lengthAdjust="spacingAndGlyphs" stroke="#fff" stroke-width="2.400" stroke-opacity=".9" stroke-linejoin="round" paint-order="stroke" >Verona</text>
<text x="861.3" y="313.9" font-size="12.5" font-weight="400" fill="#454a48" textLength="38.4" lengthAdjust="spacingAndGlyphs" stroke="#fff" stroke-width="2.400" stroke-opacity=".9" stroke-linejoin="round" paint-order="stroke" >Venice</text>
<text x="861.3" y="313.9" font-size="12.5" font-weight="400" fill="#454a48" stroke="#454a48" stroke-width="0.28" textLength="38.4" lengthAdjust="spacingAndGlyphs" >Venice</text>
<text x="849.0" y="333.7" font-size="10.5" font-weight="400" fill="#454a48" textLength="27.5" lengthAdjust="spacingAndGlyphs" stroke="#fff" stroke-width="2.400" stroke-opacity=".9" stroke-linejoin="round" paint-order="stroke" >Padua</text>
<text x="785.0" y="351.4" font-size="10.5" font-weight="400" fill="#454a48" textLength="28.8" lengthAdjust="spacingAndGlyphs" stroke="#fff" stroke-width="2.400" stroke-opacity=".9" stroke-linejoin="round" paint-order="stroke" >Parma</text>
<text x="817.5" y="368.0" font-size="12.5" font-weight="400" fill="#454a48" textLength="45.5" lengthAdjust="spacingAndGlyphs" stroke="#fff" stroke-width="2.400" stroke-opacity=".9" stroke-linejoin="round" paint-order="stroke" >Bologna</text>
<text x="817.5" y="368.0" font-size="12.5" font-weight="400" fill="#454a48" stroke="#454a48" stroke-width="0.28" textLength="45.5" lengthAdjust="spacingAndGlyphs" >Bologna</text>
<text x="724.9" y="372.8" font-size="12.5" font-weight="400" fill="#454a48" textLength="35.7" lengthAdjust="spacingAndGlyphs" stroke="#fff" stroke-width="2.400" stroke-opacity=".9" stroke-linejoin="round" paint-order="stroke" >Genoa</text>
<text x="724.9" y="372.8" font-size="12.5" font-weight="400" fill="#454a48" stroke="#454a48" stroke-width="0.28" textLength="35.7" lengthAdjust="spacingAndGlyphs" >Genoa</text>
<text x="654.0" y="421.2" font-size="14.5" font-weight="700" fill="#1d211f" textLength="55.0" lengthAdjust="spacingAndGlyphs" stroke="#fff" stroke-width="2.400" stroke-opacity=".9" stroke-linejoin="round" paint-order="stroke" >Monaco</text>
<text x="793.0" y="413.0" font-size="10.5" font-weight="400" fill="#454a48" textLength="18.6" lengthAdjust="spacingAndGlyphs" stroke="#fff" stroke-width="2.400" stroke-opacity=".9" stroke-linejoin="round" paint-order="stroke" >Pisa</text>
<text x="813.0" y="429.7" font-size="12.5" font-weight="400" fill="#454a48" textLength="48.4" lengthAdjust="spacingAndGlyphs" stroke="#fff" stroke-width="2.400" stroke-opacity=".9" stroke-linejoin="round" paint-order="stroke" >Florence</text>
<text x="813.0" y="429.7" font-size="12.5" font-weight="400" fill="#454a48" stroke="#454a48" stroke-width="0.28" textLength="48.4" lengthAdjust="spacingAndGlyphs" >Florence</text>
<text x="851.3" y="409.8" font-size="13.5" font-weight="700" fill="#1d211f" textLength="69.5" lengthAdjust="spacingAndGlyphs" stroke="#fff" stroke-width="2.400" stroke-opacity=".9" stroke-linejoin="round" paint-order="stroke" >San Marino</text>
<text x="872.0" y="462.7" font-size="15.5" font-weight="700" fill="#1d211f" textLength="30.3" lengthAdjust="spacingAndGlyphs" stroke="#fff" stroke-width="2.400" stroke-opacity=".9" stroke-linejoin="round" paint-order="stroke" >Italy</text>
<text x="940.7" y="482.6" font-size="10.5" font-weight="400" fill="#454a48" textLength="35.7" lengthAdjust="spacingAndGlyphs" stroke="#fff" stroke-width="2.400" stroke-opacity=".9" stroke-linejoin="round" paint-order="stroke" >Pescara</text>
<text x="987.5" y="389.3" font-size="10.5" font-weight="400" fill="#454a48" textLength="25.5" lengthAdjust="spacingAndGlyphs" stroke="#fff" stroke-width="2.400" stroke-opacity=".9" stroke-linejoin="round" paint-order="stroke" >Zadar</text>
<text x="1039.4" y="424.3" font-size="10.5" font-weight="400" fill="#454a48" textLength="19.6" lengthAdjust="spacingAndGlyphs" stroke="#fff" stroke-width="2.400" stroke-opacity=".9" stroke-linejoin="round" paint-order="stroke" >Split</text>
<text x="1052.6" y="452.9" font-size="10.5" font-weight="400" fill="#454a48" textLength="41.4" lengthAdjust="spacingAndGlyphs" stroke="#fff" stroke-width="2.400" stroke-opacity=".9" stroke-linejoin="round" paint-order="stroke" >Makarska</text>
<text x="1089.6" y="432.8" font-size="10.5" font-weight="400" fill="#454a48" textLength="31.0" lengthAdjust="spacingAndGlyphs" stroke="#fff" stroke-width="2.400" stroke-opacity=".9" stroke-linejoin="round" paint-order="stroke" >Mostar</text>
<text x="1106.0" y="403.3" font-size="12.5" font-weight="400" fill="#454a48" textLength="48.3" lengthAdjust="spacingAndGlyphs" stroke="#fff" stroke-width="2.400" stroke-opacity=".9" stroke-linejoin="round" paint-order="stroke" >Sarajevo</text>
<text x="1106.0" y="403.3" font-size="12.5" font-weight="400" fill="#454a48" stroke="#454a48" stroke-width="0.28" textLength="48.3" lengthAdjust="spacingAndGlyphs" >Sarajevo</text>
<text x="1064.0" y="363.5" font-size="14" font-weight="700" fill="#1d211f" textLength="80.0" lengthAdjust="spacingAndGlyphs" stroke="#fff" stroke-width="2.400" stroke-opacity=".9" stroke-linejoin="round" paint-order="stroke" >Bosnia and</text>
<text x="1059.0" y="379.3" font-size="14" font-weight="700" fill="#1d211f" textLength="91.0" lengthAdjust="spacingAndGlyphs" stroke="#fff" stroke-width="2.400" stroke-opacity=".9" stroke-linejoin="round" paint-order="stroke" >Herzegovina</text>
<text x="1116.0" y="487.9" font-size="10.5" font-weight="400" fill="#454a48" textLength="44.4" lengthAdjust="spacingAndGlyphs" stroke="#fff" stroke-width="2.400" stroke-opacity=".9" stroke-linejoin="round" paint-order="stroke" >Podgorica</text>
<text x="1110.0" y="497.3" font-size="10.5" font-weight="400" fill="#454a48" textLength="52.0" lengthAdjust="spacingAndGlyphs" stroke="#fff" stroke-width="2.400" stroke-opacity=".9" stroke-linejoin="round" paint-order="stroke" >Подгорица</text>
<text x="1130.0" y="468.6" font-size="13.5" font-weight="700" fill="#1d211f" textLength="72.0" lengthAdjust="spacingAndGlyphs" stroke="#fff" stroke-width="2.400" stroke-opacity=".9" stroke-linejoin="round" paint-order="stroke" >Montenegro</text>
<text x="1210.7" y="483.9" font-size="13.5" font-weight="700" fill="#1d211f" textLength="43.6" lengthAdjust="spacingAndGlyphs" stroke="#fff" stroke-width="2.400" stroke-opacity=".9" stroke-linejoin="round" paint-order="stroke" >Kosovo</text>
<text x="1205.4" y="401.1" font-size="15.5" font-weight="700" fill="#1d211f" textLength="45.8" lengthAdjust="spacingAndGlyphs" stroke="#fff" stroke-width="2.400" stroke-opacity=".9" stroke-linejoin="round" paint-order="stroke" >Serbia</text>
<text x="1265.0" y="425.2" font-size="10.5" font-weight="400" fill="#454a48" textLength="14.5" lengthAdjust="spacingAndGlyphs" stroke="#fff" stroke-width="2.400" stroke-opacity=".9" stroke-linejoin="round" paint-order="stroke" >Niš</text>
<text x="1263.0" y="435.5" font-size="10.5" font-weight="400" fill="#454a48" textLength="19.0" lengthAdjust="spacingAndGlyphs" stroke="#fff" stroke-width="2.400" stroke-opacity=".9" stroke-linejoin="round" paint-order="stroke" >Ниш</text>
<text x="1315.7" y="455.3" font-size="13.5" font-weight="400" fill="#454a48" textLength="29.9" lengthAdjust="spacingAndGlyphs" stroke="#fff" stroke-width="2.400" stroke-opacity=".9" stroke-linejoin="round" paint-order="stroke" >Sofia</text>
<text x="1315.7" y="455.3" font-size="13.5" font-weight="400" fill="#454a48" stroke="#454a48" stroke-width="0.28" textLength="29.9" lengthAdjust="spacingAndGlyphs" >Sofia</text>
<text x="1310.7" y="468.6" font-size="13.5" font-weight="400" fill="#454a48" textLength="39.3" lengthAdjust="spacingAndGlyphs" stroke="#fff" stroke-width="2.400" stroke-opacity=".9" stroke-linejoin="round" paint-order="stroke" >София</text>
<text x="1310.7" y="468.6" font-size="13.5" font-weight="400" fill="#454a48" stroke="#454a48" stroke-width="0.28" textLength="39.3" lengthAdjust="spacingAndGlyphs" >София</text>
<text x="1380.0" y="491.3" font-size="15.5" font-weight="700" fill="#1d211f" textLength="65.0" lengthAdjust="spacingAndGlyphs" stroke="#fff" stroke-width="2.400" stroke-opacity=".9" stroke-linejoin="round" paint-order="stroke" >Bulgaria</text>
<text x="1333.7" y="378.1" font-size="10.5" font-weight="400" fill="#454a48" textLength="32.5" lengthAdjust="spacingAndGlyphs" stroke="#fff" stroke-width="2.400" stroke-opacity=".9" stroke-linejoin="round" paint-order="stroke" >Craiova</text>
<text x="1417.0" y="370.7" font-size="13.5" font-weight="400" fill="#454a48" textLength="64.0" lengthAdjust="spacingAndGlyphs" stroke="#fff" stroke-width="2.400" stroke-opacity=".9" stroke-linejoin="round" paint-order="stroke" >Bucharest</text>
<text x="1417.0" y="370.7" font-size="13.5" font-weight="400" fill="#454a48" stroke="#454a48" stroke-width="0.28" textLength="64.0" lengthAdjust="spacingAndGlyphs" >Bucharest</text>
<text x="1380.8" y="347.6" font-size="10.5" font-weight="400" fill="#454a48" textLength="27.0" lengthAdjust="spacingAndGlyphs" stroke="#fff" stroke-width="2.400" stroke-opacity=".9" stroke-linejoin="round" paint-order="stroke" >Pitești</text>
<text x="1425.8" y="343.1" font-size="10.5" font-weight="400" fill="#454a48" textLength="36.2" lengthAdjust="spacingAndGlyphs" stroke="#fff" stroke-width="2.400" stroke-opacity=".9" stroke-linejoin="round" paint-order="stroke" >Ploiești</text>
<text x="1367.3" y="303.4" font-size="15.5" font-weight="700" fill="#1d211f" textLength="63.0" lengthAdjust="spacingAndGlyphs" stroke="#fff" stroke-width="2.400" stroke-opacity=".9" stroke-linejoin="round" paint-order="stroke" >Romania</text>
<text x="1218.0" y="294.7" font-size="12.5" font-weight="400" fill="#454a48" textLength="55.6" lengthAdjust="spacingAndGlyphs" stroke="#fff" stroke-width="2.400" stroke-opacity=".9" stroke-linejoin="round" paint-order="stroke" >Timișoara</text>
<text x="1218.0" y="294.7" font-size="12.5" font-weight="400" fill="#454a48" stroke="#454a48" stroke-width="0.28" textLength="55.6" lengthAdjust="spacingAndGlyphs" >Timișoara</text>
<text x="1251.7" y="279.6" font-size="10.5" font-weight="400" fill="#454a48" textLength="21.2" lengthAdjust="spacingAndGlyphs" stroke="#fff" stroke-width="2.400" stroke-opacity=".9" stroke-linejoin="round" paint-order="stroke" >Arad</text>
<text x="1168.4" y="316.3" font-size="10.5" font-weight="400" fill="#454a48" textLength="38.3" lengthAdjust="spacingAndGlyphs" stroke="#fff" stroke-width="2.400" stroke-opacity=".9" stroke-linejoin="round" paint-order="stroke" >Novi Sad</text>
<text x="1166.5" y="325.9" font-size="10.5" font-weight="400" fill="#454a48" textLength="42.9" lengthAdjust="spacingAndGlyphs" stroke="#fff" stroke-width="2.400" stroke-opacity=".9" stroke-linejoin="round" paint-order="stroke" >Нови Сад</text>
<text x="1195.3" y="340.3" font-size="10.5" font-weight="400" fill="#454a48" textLength="37.9" lengthAdjust="spacingAndGlyphs" stroke="#fff" stroke-width="2.400" stroke-opacity=".9" stroke-linejoin="round" paint-order="stroke" >Belgrade</text>
<text x="1195.3" y="350.3" font-size="10.5" font-weight="400" fill="#454a48" textLength="37.3" lengthAdjust="spacingAndGlyphs" stroke="#fff" stroke-width="2.400" stroke-opacity=".9" stroke-linejoin="round" paint-order="stroke" >Београд</text>
<text x="1148.5" y="232.5" font-size="15.5" font-weight="700" fill="#1d211f" textLength="60.3" lengthAdjust="spacingAndGlyphs" stroke="#fff" stroke-width="2.400" stroke-opacity=".9" stroke-linejoin="round" paint-order="stroke" >Hungary</text>
<text x="1257.8" y="235.1" font-size="10.5" font-weight="400" fill="#454a48" textLength="31.7" lengthAdjust="spacingAndGlyphs" stroke="#fff" stroke-width="2.400" stroke-opacity=".9" stroke-linejoin="round" paint-order="stroke" >Oradea</text>
<text x="1310.0" y="234.3" font-size="12.5" font-weight="400" fill="#454a48" textLength="68.0" lengthAdjust="spacingAndGlyphs" stroke="#fff" stroke-width="2.400" stroke-opacity=".9" stroke-linejoin="round" paint-order="stroke" >Cluj-Napoca</text>
<text x="1310.0" y="234.3" font-size="12.5" font-weight="400" fill="#454a48" stroke="#454a48" stroke-width="0.28" textLength="68.0" lengthAdjust="spacingAndGlyphs" >Cluj-Napoca</text>
<text x="945.0" y="288.1" font-size="15.5" font-weight="700" fill="#1d211f" textLength="61.0" lengthAdjust="spacingAndGlyphs" stroke="#fff" stroke-width="2.400" stroke-opacity=".9" stroke-linejoin="round" paint-order="stroke" >Slovenia</text>
<text x="1010.0" y="290.2" font-size="13.5" font-weight="400" fill="#454a48" textLength="41.0" lengthAdjust="spacingAndGlyphs" stroke="#fff" stroke-width="2.400" stroke-opacity=".9" stroke-linejoin="round" paint-order="stroke" >Zagreb</text>
<text x="1010.0" y="290.2" font-size="13.5" font-weight="400" fill="#454a48" stroke="#454a48" stroke-width="0.28" textLength="41.0" lengthAdjust="spacingAndGlyphs" >Zagreb</text>
<text x="925.3" y="300.7" font-size="10.5" font-weight="400" fill="#454a48" textLength="29.9" lengthAdjust="spacingAndGlyphs" stroke="#fff" stroke-width="2.400" stroke-opacity=".9" stroke-linejoin="round" paint-order="stroke" >Trieste</text>
<text x="954.4" y="319.8" font-size="10.5" font-weight="400" fill="#454a48" textLength="26.0" lengthAdjust="spacingAndGlyphs" stroke="#fff" stroke-width="2.400" stroke-opacity=".9" stroke-linejoin="round" paint-order="stroke" >Rijeka</text>
<text x="956.0" y="344.1" font-size="15.5" font-weight="700" fill="#1d211f" textLength="51.4" lengthAdjust="spacingAndGlyphs" stroke="#fff" stroke-width="2.400" stroke-opacity=".9" stroke-linejoin="round" paint-order="stroke" >Croatia</text>
<text x="933.5" y="346.8" font-size="10.5" font-weight="400" fill="#454a48" textLength="19.1" lengthAdjust="spacingAndGlyphs" stroke="#fff" stroke-width="2.400" stroke-opacity=".9" stroke-linejoin="round" paint-order="stroke" >Pula</text>
<text x="659.5" y="245.1" font-size="16" font-weight="700" fill="#1d211f" textLength="90.5" lengthAdjust="spacingAndGlyphs" stroke="#fff" stroke-width="2.400" stroke-opacity=".9" stroke-linejoin="round" paint-order="stroke" >Switzerland</text>
<text x="651.5" y="258.3" font-size="10.5" font-weight="400" fill="#454a48" textLength="41.5" lengthAdjust="spacingAndGlyphs" stroke="#fff" stroke-width="2.400" stroke-opacity=".9" stroke-linejoin="round" paint-order="stroke" >Lausanne</text>
<text x="585.5" y="277.5" font-size="12.5" font-weight="400" fill="#454a48" textLength="38.0" lengthAdjust="spacingAndGlyphs" stroke="#fff" stroke-width="2.400" stroke-opacity=".9" stroke-linejoin="round" paint-order="stroke" >Geneva</text>
<text x="585.5" y="277.5" font-size="12.5" font-weight="400" fill="#454a48" stroke="#454a48" stroke-width="0.28" textLength="38.0" lengthAdjust="spacingAndGlyphs" >Geneva</text>
<text x="588.0" y="327.7" font-size="10.5" font-weight="400" fill="#454a48" textLength="42.4" lengthAdjust="spacingAndGlyphs" stroke="#fff" stroke-width="2.400" stroke-opacity=".9" stroke-linejoin="round" paint-order="stroke" >Grenoble</text>
<text x="582.0" y="435.0" font-size="12.5" font-weight="400" fill="#454a48" textLength="38.0" lengthAdjust="spacingAndGlyphs" stroke="#fff" stroke-width="2.400" stroke-opacity=".9" stroke-linejoin="round" paint-order="stroke" >Marseille</text>
<text x="582.0" y="435.0" font-size="12.5" font-weight="400" fill="#454a48" stroke="#454a48" stroke-width="0.28" textLength="38.0" lengthAdjust="spacingAndGlyphs" >Marseille</text>
<text transform="translate(1003 463.500) rotate(27)" font-size="11" font-style="italic" fill="#2f9bb8" textLength="52" lengthAdjust="spacingAndGlyphs">Adriatic Sea</text>
<path d="M645.40 235.20 L635.36 221.64 A12.50 12.50 0 1 1 655.44 221.64 Z" fill="#e81c2a"/>
<path d="M1005.30 239.50 L995.09 226.55 A13.00 13.00 0 1 1 1015.51 226.55 Z" fill="#e81c2a" stroke="#f9b9bd" stroke-width="0.7"/>
<path d="M1007.60 239.50 L997.39 226.55 A13.00 13.00 0 1 1 1017.81 226.55 Z" fill="#e81c2a" stroke="#f9b9bd" stroke-width="0.7"/>
<path d="M1010.00 239.50 L999.79 226.55 A13.00 13.00 0 1 1 1020.21 226.55 Z" fill="#e81c2a" stroke="#f9b9bd" stroke-width="0.7"/>
<path d="M1012.40 239.50 L1002.19 226.55 A13.00 13.00 0 1 1 1022.61 226.55 Z" fill="#e81c2a" stroke="#f9b9bd" stroke-width="0.5"/>
<rect x="1008" y="223" width="9" height="4.500" fill="#fff"/><rect x="1009.300" y="223" width="4.500" height="3.200" fill="#e81c2a"/>
<path d="M960.70 293.80 L950.52 280.72 A12.90 12.90 0 1 1 970.88 280.72 Z" fill="#e81c2a" stroke="#f9b9bd" stroke-width="0.7"/>
<path d="M963.40 293.80 L953.22 280.72 A12.90 12.90 0 1 1 973.58 280.72 Z" fill="#e81c2a" stroke="#f9b9bd" stroke-width="0.7"/>
<path d="M965.80 293.80 L955.62 280.72 A12.90 12.90 0 1 1 975.98 280.72 Z" fill="#e81c2a" stroke="#f9b9bd" stroke-width="0.7"/>
<path d="M968.20 293.80 L958.02 280.72 A12.90 12.90 0 1 1 978.38 280.72 Z" fill="#e81c2a" stroke="#f9b9bd" stroke-width="0.5"/>
<g transform="translate(963.6 265.3) scale(1.000)"><rect x="0" y="0" width="9.200" height="14" rx="1" fill="#fff"/><rect x="1" y="14" width="1.700" height="1.500" fill="#fff"/><rect x="6.500" y="14" width="1.700" height="1.500" fill="#fff"/><rect x="1.300" y="1.500" width="4.600" height="9.800" fill="#e81c2a"/><path d="M1.800 3.300h3.600M1.800 5.200h3.600M1.800 7.100h3.600M1.800 9h3.600" stroke="#fff" stroke-width=".95"/><rect x="6.700" y="2.400" width="1.300" height="4" fill="#e81c2a"/></g>
<path d="M1032.70 296.00 L1022.22 282.59 A13.30 13.30 0 1 1 1043.18 282.59 Z" fill="#e81c2a"/>
<g fill="none" stroke="#fff" stroke-width="1.700" stroke-linecap="round" stroke-linejoin="round"><rect x="1025.600" y="269.300" width="14.800" height="10.700" rx="1"/><path d="M1029.600 265l3.100 3.800l3.100-3.800"/></g><rect x="1036.700" y="270.500" width="2.400" height="8.300" fill="#fff"/><circle cx="1037.900" cy="273" r=".7" fill="#e81c2a"/><circle cx="1037.900" cy="276" r=".7" fill="#e81c2a"/><path d="M1027.500 281v1.200M1038.500 281v1.200" stroke="#fff" stroke-width="1.500"/>
<path d="M843.00 372.30 L832.15 356.99 A13.30 13.30 0 1 1 853.85 356.99 Z" fill="#e81c2a"/>
<g transform="translate(838.4 342.8) scale(1.000)"><rect x="0" y="0" width="9.200" height="14" rx="1" fill="#fff"/><rect x="1" y="14" width="1.700" height="1.500" fill="#fff"/><rect x="6.500" y="14" width="1.700" height="1.500" fill="#fff"/><rect x="1.300" y="1.500" width="4.600" height="9.800" fill="#e81c2a"/><path d="M1.800 3.300h3.600M1.800 5.200h3.600M1.800 7.100h3.600M1.800 9h3.600" stroke="#fff" stroke-width=".95"/><rect x="6.700" y="2.400" width="1.300" height="4" fill="#e81c2a"/></g>
<path d="M1440.80 393.20 L1430.58 378.70 A12.50 12.50 0 1 1 1451.02 378.70 Z" fill="#e81c2a"/>
<path d="M1443.40 392.50 L1433.36 378.94 A12.50 12.50 0 1 1 1453.44 378.94 Z" fill="#f6a81c"/>
<path d="M1446.60 392.00 L1436.69 379.12 A12.50 12.50 0 1 1 1456.51 379.12 Z" fill="#14a651"/>
<rect x="1441.500" y="364.300" width="6" height="16.500" fill="#fff"/>
</svg>
<div class="abs mc" style="left:621px;top:235px;width:36px;height:36px"><svg width="36" height="36" viewBox="621 235 36 36"><g fill="#666"><path d="M637.95 251.05 L637.95 246.80 L634.55 246.80 L639.30 241.00 L644.05 246.80 L640.65 246.80 L640.65 251.05 L640.65 251.05 L644.90 251.05 L644.90 247.65 L650.70 252.40 L644.90 257.15 L644.90 253.75 L640.65 253.75 L640.65 253.75 L640.65 258.00 L644.05 258.00 L639.30 263.80 L634.55 258.00 L637.95 258.00 L637.95 253.75 L637.95 253.75 L633.70 253.75 L633.70 257.15 L627.90 252.40 L633.70 247.65 L633.70 251.05 L637.95 251.05Z"/></g></svg></div>
<div class="abs mc" style="left:622px;top:281px;width:36px;height:36px"><svg width="36" height="36" viewBox="622 281 36 36"><path d="M626.400 284.500h27.400v2.600l-9.800 10.400v13.300l-6.800-2.800v-10.500l-10.800-10.400z" fill="#7f7f7f"/></svg></div>
<div class="abs mc" style="left:666px;top:235px;width:151px;height:36px"><div class="abs" style="left:62px;top:0;width:1px;height:36px;background:#e6e6e6"></div><svg width="151" height="36" viewBox="666 235 151 36" font-family="Liberation Sans, sans-serif"><text x="682.200" y="258.800" font-size="16.200" font-weight="400" fill="#000" stroke="#000" stroke-width=".6" textLength="30.600" lengthAdjust="spacingAndGlyphs">Map</text><text x="744.300" y="258.800" font-size="16.200" fill="#565656" textLength="57.700" lengthAdjust="spacingAndGlyphs">Satellite</text></svg></div>
<div class="abs mc" style="left:826px;top:235px;width:36px;height:36px"><svg width="36" height="36" viewBox="826 235 36 36"><path d="M835.800 243.300h12.800l5.300 5.300v11.600a2 2 0 0 1-2 2h-16.100a2 2 0 0 1-2-2v-14.900a2 2 0 0 1 2-2z" fill="none" stroke="#169a0a" stroke-width="2.300" stroke-linejoin="round"/><path d="M838.300 243.500v5h8.200v-5" fill="none" stroke="#169a0a" stroke-width="2.300"/><circle cx="844.600" cy="255.800" r="2.700" fill="none" stroke="#169a0a" stroke-width="2.300"/></svg></div>
<div class="abs mc" style="left:621px;top:393px;width:36px;height:73px"><svg width="36" height="73" viewBox="621 393 36 73"><path d="M631.300 410.700h14.800M638.700 403.300v14.800M631.300 447.800h14.800" stroke="#5a5a5a" stroke-width="2" fill="none"/><path d="M626 429.900h27" stroke="#e6e6e6" stroke-width="1"/></svg></div>
<div class="abs" style="left:1186px;top:235px;width:270px;height:39.500px;background:#fff;border-radius:4px;box-shadow:0 1px 4px rgba(0,0,0,.3)"></div>
<svg class="abs" style="left:612px;top:470px" width="832" height="28" viewBox="612 470 832 28" font-family="Liberation Sans, sans-serif"><text x="621.500" y="491" font-size="15.300" fill="#fff" stroke="#5f7c80" stroke-width="2.300" paint-order="stroke" stroke-linejoin="round" textLength="50.300" lengthAdjust="spacingAndGlyphs">Google</text><text x="621.500" y="491" font-size="15.300" fill="#fff" stroke="#fff" stroke-width=".3" textLength="50.300" lengthAdjust="spacingAndGlyphs">Google</text><rect x="1235" y="485.200" width="88.500" height="12.800" fill="#f5f5f5" fill-opacity=".72"/><rect x="1324.600" y="485.200" width="120" height="12.800" fill="#f5f5f5" fill-opacity=".72"/><text x="1240" y="494.700" font-size="9" fill="#222" textLength="77.700" lengthAdjust="spacingAndGlyphs">Keyboard shortcuts</text><text x="1329" y="494.700" font-size="9" fill="#222" textLength="152" lengthAdjust="spacingAndGlyphs">Map data ©2025 Google, Mapa GISrael</text></svg>
<!--MAPEND-->
<!--OVSTART-->
<svg width="1444" height="567" viewBox="0 0 1444 567" style="position:absolute;left:0;top:0;pointer-events:none" font-family="Liberation Sans, sans-serif">
<text x="1204.400" y="31" font-size="9.300" fill="#222" textLength="27.500" lengthAdjust="spacingAndGlyphs">Try the</text>
<text x="1235.200" y="31" font-size="9.300" font-weight="700" fill="#111" textLength="18" lengthAdjust="spacingAndGlyphs">New</text>
<text x="1257.400" y="31" font-size="11.500" font-weight="700" fill="#111" textLength="9.200" lengthAdjust="spacingAndGlyphs">C</text>
<circle cx="1262.300" cy="27" r="1" fill="#f5b800"/>
<text x="1266.800" y="31" font-size="8.200" font-weight="700" fill="#111" textLength="18.200" lengthAdjust="spacingAndGlyphs">ORE</text>
<rect x="1292.500" y="20" width="28.500" height="15" rx="7.500" fill="#d2d2d2"/><circle cx="1299.900" cy="27.500" r="6" fill="#fff"/>
<path d="M1359.200 31v5.400l7.400 3.600v-6z" fill="#5b8dbf"/><path d="M1366.600 34v6l7-3.600v-5.400z" fill="#f9c623"/><path d="M1352.100 27.100L1366.600 18.500L1380.800 27.100L1366.600 35Z" fill="#273c4e"/>
<circle cx="1394.600" cy="27.400" r="5.500" fill="none" stroke="#2f7fb8" stroke-width="2.400"/><path d="M1398.700 31.900L1403.200 36.100" stroke="#2f7fb8" stroke-width="2.800" stroke-linecap="butt"/>
<circle cx="1418.900" cy="28.900" r="7.600" fill="#2f7fb8"/><path d="M1413.500 26.500l1.500-2.800l3.600-1.600l1.200.8l-1.200 1.700l.6 1.700l-1.700.3l-.4 1.500l2.700.6l2.200 1.700l-1.500 2l-1.200 3.200l-1.100-.3l-.8-3.300l-1.700-1.900l.2-1.500l-1.500-.9z M1422.800 26.300l1.400-1.100l1.300 3l-.6 1.300l-1.400-.9z" fill="#fff"/>
<circle cx="1442.300" cy="28.900" r="6.900" fill="none" stroke="#2f7fb8" stroke-width="1.700"/><path d="M1441.200 24.500v5.200h4" fill="none" stroke="#2f7fb8" stroke-width="1.700"/>
<rect x="1152.150" y="4.750" width="191" height="45.100" fill="none" stroke="#e8191c" stroke-width="7.500"/>
<path d="M1310.6 37.4 L1312.8 76.9 L1324.0 70.2 L1413.7 220.1 L1422.7 214.7 L1333.1 64.7 L1344.4 58.0 Z" fill="#ffcb05"/>
</svg>
<!--OVEND-->
</body>
</html>
